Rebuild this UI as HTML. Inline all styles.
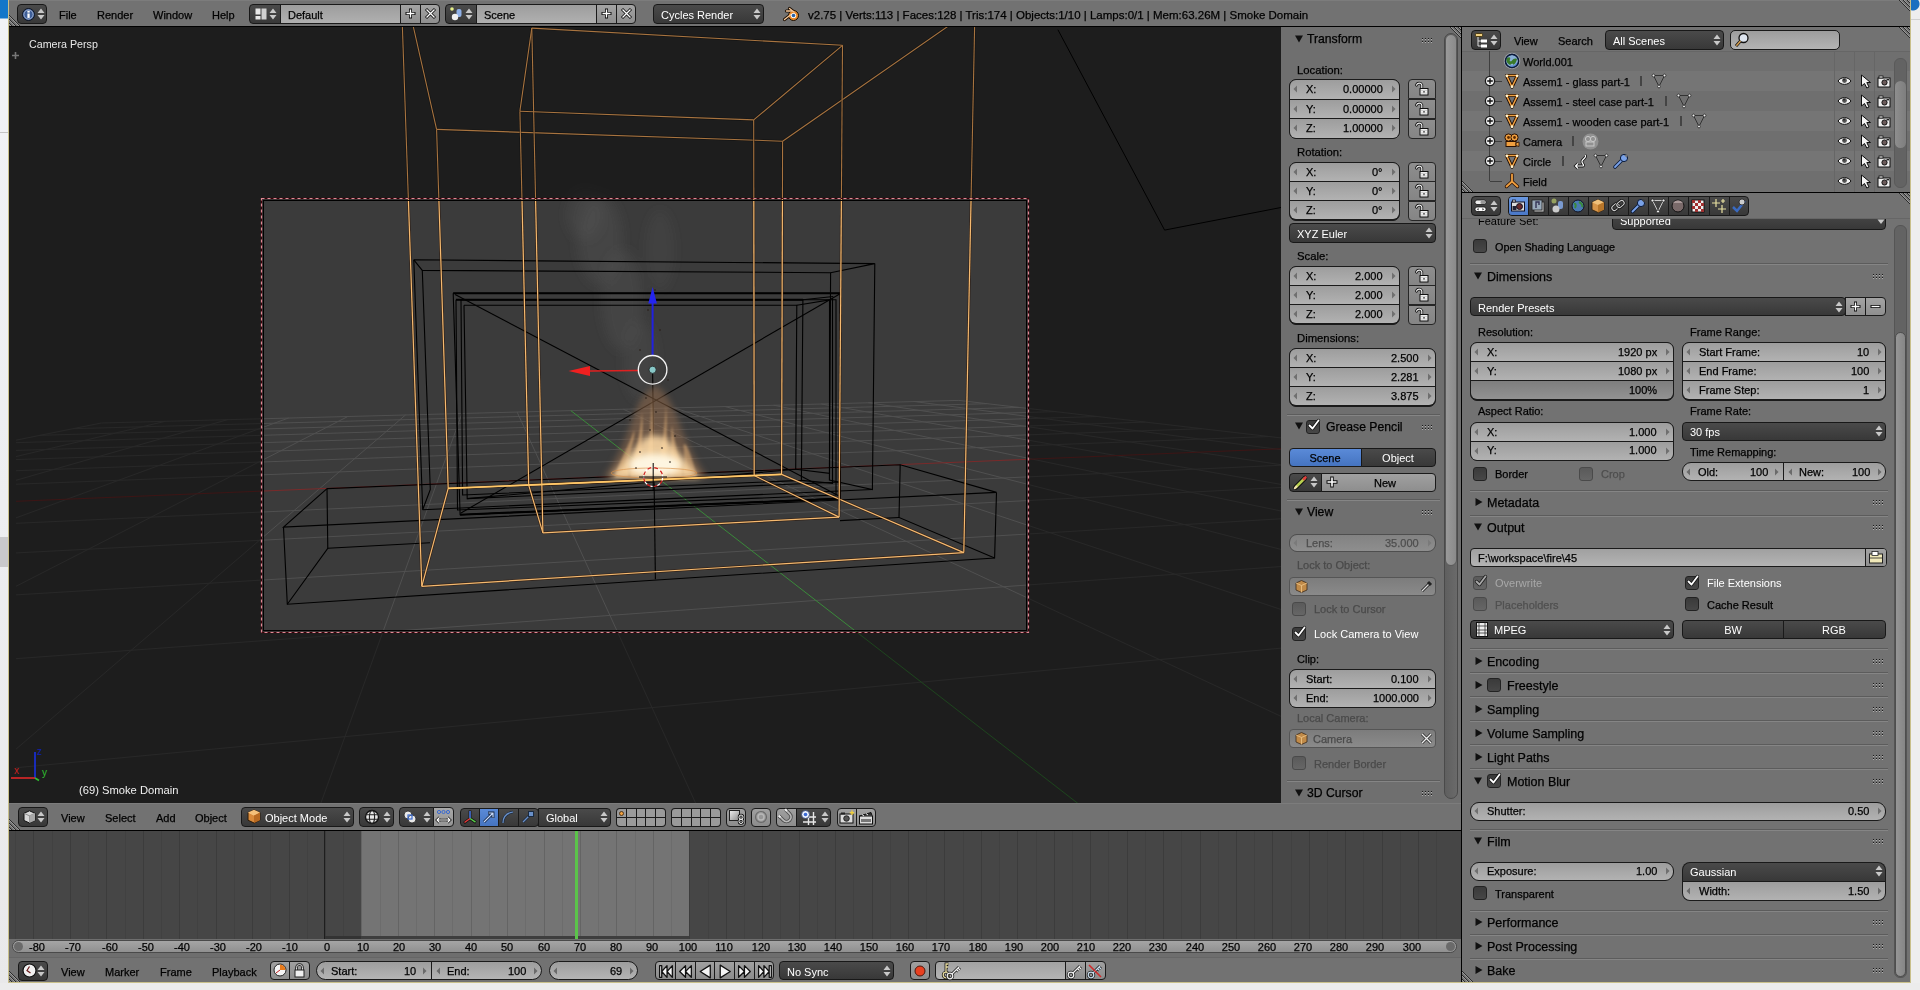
<!DOCTYPE html>
<html><head><meta charset="utf-8"><style>
*{box-sizing:border-box;margin:0;padding:0}
html,body{width:1920px;height:990px;overflow:hidden;background:#ececec;font-family:"Liberation Sans",sans-serif;font-size:11px;color:#000}
.a{position:absolute}
svg.a{overflow:visible}
.t{position:absolute;white-space:nowrap;line-height:1;will-change:transform}
.num{background:linear-gradient(#9d9d9d,#b0b0b0);border:1px solid #1a1a1a}
.drk{background:linear-gradient(#4a4a4a,#383838);border:1px solid #181818}
.tool{background:linear-gradient(#a0a0a0,#8c8c8c);border:1px solid #1a1a1a}
.chk{background:linear-gradient(#3c3c3c,#4a4a4a);border:1px solid #232323;border-radius:3px}
</style></head><body>
<div class="a " style="left:0px;top:0px;width:9px;height:990px;background:linear-gradient(#1377c9 0,#1377c9 18px,#f1f3f6 19px,#e9e9ea 990px)"></div>
<div class="a " style="left:1911px;top:0px;width:9px;height:990px;background:#eeeeee"></div>
<div class="a " style="left:0px;top:132px;width:8px;height:1px;background:#c4c4c4"></div>
<div class="a " style="left:0px;top:537px;width:8px;height:30px;background:#c9c9cb"></div>
<div class="a " style="left:1911px;top:19px;width:9px;height:1px;background:#d0d0d0"></div>
<div class="a" style="left:1911px;top:0;width:9px;height:12px;background:radial-gradient(circle at 2px 4px,#1a6fc0 0,#1a6fc0 6px,transparent 7px)"></div>
<div class="a " style="left:0px;top:983px;width:1920px;height:7px;background:#ececec"></div>
<div class="a " style="left:8px;top:0px;width:1px;height:983px;background:#c9c08a"></div>
<div class="a " style="left:1910px;top:0px;width:1px;height:983px;background:#c9c08a"></div>
<div class="a " style="left:8px;top:982px;width:1903px;height:1px;background:#c9c08a"></div>
<div class="a " style="left:9px;top:0px;width:1901px;height:982px;background:#000"></div>
<div class="a " style="left:9px;top:0px;width:1901px;height:26px;background:#727272;border-top:1px solid #7c7c7c"></div>
<svg class="a" style="left:9px;top:14px;" width="12" height="12" viewBox="0 0 12 12"><path d="M0 1L11 12M0 5L7 12M0 9L3 12" stroke="#2a2a2a" stroke-width="1"/><path d="M0 2L10 12M0 6L6 12M0 10L2 12" stroke="#9a9a9a" stroke-width="1"/></svg>
<div class="a drk" style="left:17px;top:4px;width:30px;height:20px;border-radius:4px"></div>
<svg class="a" style="left:22px;top:8px;" width="13" height="13" viewBox="0 0 13 13"><circle cx="6.5" cy="6.5" r="6" fill="#3d5e99" stroke="#0d1320" stroke-width="1"/><circle cx="6.5" cy="6.5" r="4.6" fill="none" stroke="#b7c4dc" stroke-width="0.8"/><rect x="5.4" y="5.5" width="2.3" height="4.4" fill="#fff"/><rect x="5.4" y="2.8" width="2.3" height="1.8" fill="#fff"/></svg>
<svg class="a" style="left:37px;top:8px;" width="8" height="12" viewBox="0 0 8 12"><path d="M4 0.5L7.5 5H0.5Z M4 11.5L7.5 7H0.5Z" fill="#c8c8c8"/></svg>
<div class="t " style="left:59px;top:9.75px;font-size:11px;color:#000;-webkit-text-stroke:0.25px currentColor;">File</div>
<div class="t " style="left:97px;top:9.75px;font-size:11px;color:#000;-webkit-text-stroke:0.25px currentColor;">Render</div>
<div class="t " style="left:153px;top:9.75px;font-size:11px;color:#000;-webkit-text-stroke:0.25px currentColor;">Window</div>
<div class="t " style="left:212px;top:9.75px;font-size:11px;color:#000;-webkit-text-stroke:0.25px currentColor;">Help</div>
<div class="a drk" style="left:249px;top:4px;width:32px;height:20px;border-radius:4px 0 0 4px"></div>
<svg class="a" style="left:255px;top:8px;" width="12" height="12" viewBox="0 0 12 12"><rect x="0.5" y="0.5" width="5" height="6" fill="#e8e8e8"/><rect x="0.5" y="8" width="5" height="3.5" fill="#e8e8e8"/><rect x="6.5" y="0.5" width="5" height="11" fill="#d0d0d0"/></svg>
<svg class="a" style="left:269px;top:8px;" width="8" height="12" viewBox="0 0 8 12"><path d="M4 0.5L7.5 5H0.5Z M4 11.5L7.5 7H0.5Z" fill="#c8c8c8"/></svg>
<div class="a num" style="left:280px;top:4px;width:121px;height:20px;border-radius:0"></div>
<div class="t " style="left:288px;top:9.75px;font-size:11px;color:#000;-webkit-text-stroke:0.25px currentColor;">Default</div>
<div class="a num" style="left:400px;top:4px;width:21px;height:20px;background:linear-gradient(#a3a3a3,#8f8f8f)"></div>
<div class="a num" style="left:420px;top:4px;width:20px;height:20px;border-radius:0 4px 4px 0;background:linear-gradient(#a3a3a3,#8f8f8f)"></div>
<svg class="a" style="left:405px;top:8px;" width="11" height="11" viewBox="0 0 11 11"><path d="M5.5 0.5V10.5M0.5 5.5H10.5" stroke="#111" stroke-width="3"/><path d="M5.5 1.5V9.5M1.5 5.5H9.5" stroke="#fff" stroke-width="1.3"/></svg>
<svg class="a" style="left:425px;top:8px;" width="11" height="11" viewBox="0 0 11 11"><path d="M1 1L10 10M10 1L1 10" stroke="#111" stroke-width="3"/><path d="M1.5 1.5L9.5 9.5M9.5 1.5L1.5 9.5" stroke="#fff" stroke-width="1.3"/></svg>
<div class="a drk" style="left:445px;top:4px;width:32px;height:20px;border-radius:4px 0 0 4px"></div>
<svg class="a" style="left:450px;top:7px;" width="14" height="14" viewBox="0 0 14 14"><circle cx="2" cy="2" r="1.8" fill="#e6f08a"/><rect x="6.5" y="2" width="5" height="8" rx="2" fill="#8fb0e6"/><circle cx="5" cy="10" r="3.2" fill="#f0f0f0"/></svg>
<svg class="a" style="left:465px;top:8px;" width="8" height="12" viewBox="0 0 8 12"><path d="M4 0.5L7.5 5H0.5Z M4 11.5L7.5 7H0.5Z" fill="#c8c8c8"/></svg>
<div class="a num" style="left:476px;top:4px;width:121px;height:20px;border-radius:0"></div>
<div class="t " style="left:484px;top:9.75px;font-size:11px;color:#000;-webkit-text-stroke:0.25px currentColor;">Scene</div>
<div class="a num" style="left:596px;top:4px;width:21px;height:20px;background:linear-gradient(#a3a3a3,#8f8f8f)"></div>
<div class="a num" style="left:616px;top:4px;width:20px;height:20px;border-radius:0 4px 4px 0;background:linear-gradient(#a3a3a3,#8f8f8f)"></div>
<svg class="a" style="left:601px;top:8px;" width="11" height="11" viewBox="0 0 11 11"><path d="M5.5 0.5V10.5M0.5 5.5H10.5" stroke="#111" stroke-width="3"/><path d="M5.5 1.5V9.5M1.5 5.5H9.5" stroke="#fff" stroke-width="1.3"/></svg>
<svg class="a" style="left:621px;top:8px;" width="11" height="11" viewBox="0 0 11 11"><path d="M1 1L10 10M10 1L1 10" stroke="#111" stroke-width="3"/><path d="M1.5 1.5L9.5 9.5M9.5 1.5L1.5 9.5" stroke="#fff" stroke-width="1.3"/></svg>
<div class="a drk" style="left:653px;top:4px;width:111px;height:20px;border-radius:4px"></div>
<div class="t " style="left:661px;top:9.75px;font-size:11px;color:#fff;">Cycles Render</div>
<svg class="a" style="left:753px;top:8px;" width="8" height="12" viewBox="0 0 8 12"><path d="M4 0.5L7.5 5H0.5Z M4 11.5L7.5 7H0.5Z" fill="#c8c8c8"/></svg>
<svg class="a" style="left:783px;top:7px;" width="18" height="15" viewBox="0 0 18 15"><path d="M1.5 12.5L8 7.5M3.5 4L9 4M6.5 1.5L11 5" stroke="#1a0d00" stroke-width="3.2" stroke-linecap="round"/><circle cx="10.5" cy="8.5" r="5" fill="#e88a2c" stroke="#1a0d00" stroke-width="1"/><path d="M1.5 12.5L8 7.5M3.5 4L9 4M6.5 1.5L11 5" stroke="#f6c89a" stroke-width="1.4" stroke-linecap="round"/><circle cx="10.5" cy="8.5" r="2.6" fill="#fff"/><circle cx="10.5" cy="8.5" r="1.8" fill="#2a62a6"/></svg>
<div class="t " style="left:808px;top:9.50px;font-size:11.5px;color:#000;-webkit-text-stroke:0.25px currentColor;">v2.75 | Verts:113 | Faces:128 | Tris:174 | Objects:1/10 | Lamps:0/1 | Mem:63.26M | Smoke Domain</div>
<svg class="a" style="left:1898px;top:0px;" width="12" height="12" viewBox="0 0 12 12"><path d="M1 0L12 11M5 0L12 7M9 0L12 3" stroke="#2a2a2a" stroke-width="1"/><path d="M2 0L12 10M6 0L12 6M10 0L12 2" stroke="#9a9a9a" stroke-width="1"/></svg>
<svg class="a" style="left:9px;top:27px;overflow:hidden" width="1272" height="776" viewBox="0 0 1272 776"><rect x="0" y="0" width="1272" height="776" fill="#3b3b3b"/><defs><clipPath id="gclip"><rect x="7" y="0" width="1272" height="776"/></clipPath></defs><g clip-path="url(#gclip)"><path d="M20833.3 20974.9 L5519.2 905.3" fill="none" stroke="#505050" stroke-width="1" /><path d="M-109634.0 22483.7 L92.3 396.0" fill="none" stroke="#505050" stroke-width="1" /><path d="M-68353.4 22006.3 L3619.1 684.1" fill="none" stroke="#505050" stroke-width="1" /><path d="M-92548.6 22286.1 L156.3 394.3" fill="none" stroke="#505050" stroke-width="1" /><path d="M-9080.1 2242.4 L2759.2 584.0" fill="none" stroke="#505050" stroke-width="1" /><path d="M-75463.2 22088.5 L218.7 392.6" fill="none" stroke="#505050" stroke-width="1" /><path d="M-3062.1 1030.9 L2268.9 526.9" fill="none" stroke="#505050" stroke-width="1" /><path d="M-58377.8 21890.9 L279.5 391.0" fill="none" stroke="#505050" stroke-width="1" /><path d="M-1694.4 755.6 L1952.1 490.0" fill="none" stroke="#505050" stroke-width="1" /><path d="M-41292.5 21693.4 L338.8 389.5" fill="none" stroke="#505050" stroke-width="1" /><path d="M-1089.1 633.8 L1730.5 464.2" fill="none" stroke="#505050" stroke-width="1" /><path d="M-24207.1 21495.8 L396.6 387.9" fill="none" stroke="#505050" stroke-width="1" /><path d="M-747.6 565.0 L1566.8 445.2" fill="none" stroke="#505050" stroke-width="1" /><path d="M-7121.7 21298.2 L453.0 386.5" fill="none" stroke="#505050" stroke-width="1" /><path d="M-528.3 520.9 L1440.9 430.5" fill="none" stroke="#505050" stroke-width="1" /><path d="M9963.6 21100.6 L508.1 385.0" fill="none" stroke="#505050" stroke-width="1" /><path d="M-263.2 467.5 L1260.1 409.5" fill="none" stroke="#505050" stroke-width="1" /><path d="M7614.5 3651.2 L614.3 382.2" fill="none" stroke="#505050" stroke-width="1" /><path d="M-176.9 450.2 L1193.0 401.7" fill="none" stroke="#505050" stroke-width="1" /><path d="M6632.4 2364.1 L665.6 380.9" fill="none" stroke="#505050" stroke-width="1" /><path d="M-108.6 436.4 L1136.4 395.1" fill="none" stroke="#505050" stroke-width="1" /><path d="M6191.3 1786.1 L715.7 379.5" fill="none" stroke="#505050" stroke-width="1" /><path d="M-53.3 425.3 L1088.2 389.5" fill="none" stroke="#505050" stroke-width="1" /><path d="M5940.8 1457.7 L764.7 378.2" fill="none" stroke="#505050" stroke-width="1" /><path d="M-7.4 416.1 L1046.5 384.6" fill="none" stroke="#505050" stroke-width="1" /><path d="M5779.3 1246.0 L812.5 377.0" fill="none" stroke="#505050" stroke-width="1" /><path d="M31.1 408.3 L1010.2 380.4" fill="none" stroke="#505050" stroke-width="1" /><path d="M5666.4 1098.2 L859.3 375.7" fill="none" stroke="#505050" stroke-width="1" /><path d="M64.0 401.7 L978.2 376.7" fill="none" stroke="#505050" stroke-width="1" /><path d="M5583.2 989.1 L905.1 374.5" fill="none" stroke="#505050" stroke-width="1" /><path d="M92.3 396.0 L949.9 373.4" fill="none" stroke="#505050" stroke-width="1" /><path d="M5519.2 905.3 L949.9 373.4" fill="none" stroke="#505050" stroke-width="1" /><path d="M-375.6 490.2 L1341.1 418.9" fill="none" stroke="#7a2a2a" stroke-width="1" /><path d="M11712.9 9022.2 L561.8 383.6" fill="none" stroke="#3a8a3a" stroke-width="1" /></g><defs><filter id="blur6" x="-50%" y="-50%" width="200%" height="200%"><feGaussianBlur stdDeviation="6"/></filter><filter id="blur3" x="-50%" y="-50%" width="200%" height="200%"><feGaussianBlur stdDeviation="3"/></filter><filter id="blur1" x="-50%" y="-50%" width="200%" height="200%"><feGaussianBlur stdDeviation="1.2"/></filter><radialGradient id="fireg" cx="0.5" cy="0.8" r="0.6"><stop offset="0" stop-color="#fffbe8"/><stop offset="0.35" stop-color="#ffe8b0"/><stop offset="0.7" stop-color="#d89a58" stop-opacity="0.8"/><stop offset="1" stop-color="#8a5a30" stop-opacity="0"/></radialGradient></defs><g transform="translate(-9 -27)" filter="url(#blur6)"><ellipse cx="600" cy="240" rx="22" ry="45" fill="#5a5a5a" opacity="0.3"/><ellipse cx="622" cy="300" rx="20" ry="50" fill="#5a5a5a" opacity="0.32"/><ellipse cx="640" cy="360" rx="16" ry="40" fill="#5a5a5a" opacity="0.28"/><ellipse cx="585" cy="215" rx="18" ry="25" fill="#5a5a5a" opacity="0.25"/><ellipse cx="660" cy="250" rx="14" ry="40" fill="#5a5a5a" opacity="0.18"/></g><path d="M318.0 461.6 L891.2 437.7 L987.5 465.4 L274.5 500.1 L318.0 461.6" fill="none" stroke="#000" stroke-width="1.1" /><path d="M274.5 500.1 L278.3 577.2 L985.6 531.0 L987.5 465.4" fill="none" stroke="#000" stroke-width="1.1" /><path d="M318.0 461.6 L318.8 521.3 L278.3 577.2" fill="none" stroke="#000" stroke-width="1.1" /><path d="M318.8 521.3 L421.0 515.8" fill="none" stroke="#000" stroke-width="1.1" /><path d="M891.2 437.7 L890.0 490.5 L985.6 531.0" fill="none" stroke="#000" stroke-width="1.1" /><path d="M890.0 490.5 L831.0 493.6" fill="none" stroke="#000" stroke-width="1.1" /><path d="M404.8 232.8 L865.8 236.6 L821.6 245.7 L413.3 243.4 L404.8 232.8" fill="none" stroke="#000" stroke-width="1.1" /><path d="M404.8 232.8 L413.7 482.7 L421.3 462.5 L413.3 243.4" fill="none" stroke="#000" stroke-width="1.1" /><path d="M865.8 236.6 L863.4 462.5 L820.4 453.0 L821.6 245.7" fill="none" stroke="#000" stroke-width="1.1" /><path d="M413.7 482.7 L863.4 462.5" fill="none" stroke="#000" stroke-width="1.1" /><path d="M444.2 266.2 L831.0 266.2 L831.4 471.6 L451.1 487.7 L444.2 266.2" fill="none" stroke="#000" stroke-width="1.1" /><path d="M447.0 272.7 L827.0 272.7 L827.0 468.0 L448.5 483.0 L447.0 272.7" fill="none" stroke="#000" stroke-width="1.1" /><path d="M452.0 272.7 L793.9 272.7 L792.4 453.4 L453.6 468.0 L452.0 272.7" fill="none" stroke="#000" stroke-width="1.1" /><path d="M455.0 278.3 L787.8 278.3 L786.7 442.3 L458.2 471.6 L455.0 278.3" fill="none" stroke="#000" stroke-width="1.1" /><path d="M793.9 272.7 L824.2 269.5" fill="none" stroke="#000" stroke-width="1.1" /><path d="M787.8 278.3 L820.5 273.0 L820.5 446.3 L786.7 442.3" fill="none" stroke="#000" stroke-width="1.1" /><path d="M792.4 453.4 L823.5 456.4 L823.5 271.0" fill="none" stroke="#000" stroke-width="1.1" /><path d="M451.1 487.7 L831.4 471.6" fill="none" stroke="#000" stroke-width="1.1" /><path d="M458.2 471.6 L831.4 455.0" fill="none" stroke="#000" stroke-width="1.1" /><path d="M446.1 267.6 L831.0 469.5" fill="none" stroke="#000" stroke-width="1.1" /><path d="M830.7 267.0 L451.6 486.2" fill="none" stroke="#000" stroke-width="1.1" /><path d="M643.6 343.0 L646.4 552.2" fill="none" stroke="#000" stroke-width="1.1" /><path d="M444.2 266.2 L831.0 266.2" fill="none" stroke="#000" stroke-width="2" /><path d="M447.0 272.7 L793.9 272.7" fill="none" stroke="#000" stroke-width="2" /><path d="M451.1 487.7 L831.4 471.6" fill="none" stroke="#000" stroke-width="2" /><path d="M1048.9 2.7 L1155.6 203.1 L1272.5 180.4" fill="none" stroke="#000" stroke-width="1" /><g transform="translate(-9 -27)"><path d="M603 478 C615 462 626 440 634 415 C640 398 648 388 656 386 C664 390 672 402 678 420 C686 442 696 462 708 478 Z" fill="#9a7050" opacity="0.5" filter="url(#blur3)"/><path d="M615 477 C618.5 462 632 440 634 430 C636 440 625.5 462 629 477 Z" fill="#e6b47a" opacity="0.55" filter="url(#blur1)"/><path d="M630 477 C633.0 462 640 440 642 412 C644 440 639.0 462 642 477 Z" fill="#e6b47a" opacity="0.6" filter="url(#blur1)"/><path d="M644 477 C647.0 462 650 440 652 398 C654 440 653.0 462 656 477 Z" fill="#e6b47a" opacity="0.5" filter="url(#blur1)"/><path d="M656 477 C659.0 462 664 440 666 405 C668 440 665.0 462 668 477 Z" fill="#e6b47a" opacity="0.55" filter="url(#blur1)"/><path d="M669 477 C672.5 462 670 440 672 425 C674 440 679.5 462 683 477 Z" fill="#e6b47a" opacity="0.55" filter="url(#blur1)"/><path d="M683 477 C686.5 462 682 440 684 445 C686 440 693.5 462 697 477 Z" fill="#e6b47a" opacity="0.5" filter="url(#blur1)"/><path d="M610 478 C620 466 632 452 642 440 C648 434 662 434 668 440 C678 452 690 466 700 478 Z" fill="#ffdca8" opacity="0.85" filter="url(#blur3)"/><ellipse cx="655" cy="465" rx="26" ry="11" fill="#fff8e4" opacity="0.95" filter="url(#blur3)"/><ellipse cx="654" cy="473" rx="43" ry="5" fill="none" stroke="#d89048" stroke-width="0.9" opacity="0.7"/><circle cx="640" cy="452" r="0.9" fill="#2a2018" opacity="0.7"/><circle cx="662" cy="448" r="0.9" fill="#2a2018" opacity="0.7"/><circle cx="650" cy="430" r="0.9" fill="#2a2018" opacity="0.7"/><circle cx="670" cy="462" r="0.9" fill="#2a2018" opacity="0.7"/><circle cx="636" cy="468" r="0.9" fill="#2a2018" opacity="0.7"/><circle cx="656" cy="412" r="0.9" fill="#2a2018" opacity="0.7"/><circle cx="646" cy="398" r="0.9" fill="#2a2018" opacity="0.7"/><circle cx="668" cy="380" r="0.9" fill="#2a2018" opacity="0.7"/><circle cx="640" cy="350" r="0.9" fill="#2a2018" opacity="0.7"/><circle cx="660" cy="330" r="0.9" fill="#2a2018" opacity="0.7"/><circle cx="648" cy="310" r="0.9" fill="#2a2018" opacity="0.7"/><circle cx="655" cy="290" r="0.9" fill="#2a2018" opacity="0.7"/><circle cx="630" cy="420" r="0.9" fill="#2a2018" opacity="0.7"/><circle cx="675" cy="436" r="0.9" fill="#2a2018" opacity="0.7"/></g><path d="M0 0H1272V776H0Z M252 171V605H1020V171Z" fill="#000" fill-opacity="0.5" fill-rule="evenodd"/><defs><clipPath id="cin"><rect x="252" y="171" width="768" height="434"/></clipPath><clipPath id="cout"><path d="M0 0H1272V776H0Z M252 171V605H1020V171Z" clip-rule="evenodd"/></clipPath></defs><g clip-path="url(#cout)"><path d="M427.6 102.4 L773.6 114.2" fill="none" stroke="#000" stroke-width="2.5" stroke-opacity="0.35"/><path d="M427.6 102.4 L439.2 461.4" fill="none" stroke="#000" stroke-width="2.5" stroke-opacity="0.35"/><path d="M773.6 114.2 L772.6 447.4" fill="none" stroke="#000" stroke-width="2.5" stroke-opacity="0.35"/><path d="M439.2 461.4 L772.6 447.4" fill="none" stroke="#000" stroke-width="2.5" stroke-opacity="0.35"/><path d="M391.4 -57.3 L966.0 -19.5" fill="none" stroke="#000" stroke-width="2.5" stroke-opacity="0.35"/><path d="M391.4 -57.3 L412.8 559.3" fill="none" stroke="#000" stroke-width="2.5" stroke-opacity="0.35"/><path d="M966.0 -19.5 L954.8 525.6" fill="none" stroke="#000" stroke-width="2.5" stroke-opacity="0.35"/><path d="M412.8 559.3 L954.8 525.6" fill="none" stroke="#000" stroke-width="2.5" stroke-opacity="0.35"/><path d="M427.6 102.4 L391.4 -57.3" fill="none" stroke="#000" stroke-width="2.5" stroke-opacity="0.35"/><path d="M773.6 114.2 L966.0 -19.5" fill="none" stroke="#000" stroke-width="2.5" stroke-opacity="0.35"/><path d="M439.2 461.4 L412.8 559.3" fill="none" stroke="#000" stroke-width="2.5" stroke-opacity="0.35"/><path d="M772.6 447.4 L954.8 525.6" fill="none" stroke="#000" stroke-width="2.5" stroke-opacity="0.35"/><path d="M427.6 102.4 L773.6 114.2" fill="none" stroke="#a87440" stroke-width="1.1" /><path d="M427.6 102.4 L439.2 461.4" fill="none" stroke="#a87440" stroke-width="1.1" /><path d="M773.6 114.2 L772.6 447.4" fill="none" stroke="#a87440" stroke-width="1.1" /><path d="M439.2 461.4 L772.6 447.4" fill="none" stroke="#a87440" stroke-width="1.1" /><path d="M391.4 -57.3 L966.0 -19.5" fill="none" stroke="#a87440" stroke-width="1.1" /><path d="M391.4 -57.3 L412.8 559.3" fill="none" stroke="#a87440" stroke-width="1.1" /><path d="M966.0 -19.5 L954.8 525.6" fill="none" stroke="#a87440" stroke-width="1.1" /><path d="M412.8 559.3 L954.8 525.6" fill="none" stroke="#a87440" stroke-width="1.1" /><path d="M427.6 102.4 L391.4 -57.3" fill="none" stroke="#a87440" stroke-width="1.1" /><path d="M773.6 114.2 L966.0 -19.5" fill="none" stroke="#a87440" stroke-width="1.1" /><path d="M439.2 461.4 L412.8 559.3" fill="none" stroke="#a87440" stroke-width="1.1" /><path d="M772.6 447.4 L954.8 525.6" fill="none" stroke="#a87440" stroke-width="1.1" /><path d="M510.9 84.2 L744.7 92.9" fill="none" stroke="#000" stroke-width="2.5" stroke-opacity="0.35"/><path d="M510.9 84.2 L519.7 458.1" fill="none" stroke="#000" stroke-width="2.5" stroke-opacity="0.35"/><path d="M744.7 92.9 L745.2 448.5" fill="none" stroke="#000" stroke-width="2.5" stroke-opacity="0.35"/><path d="M519.7 458.1 L745.2 448.5" fill="none" stroke="#000" stroke-width="2.5" stroke-opacity="0.35"/><path d="M522.8 1.1 L833.5 18.3" fill="none" stroke="#000" stroke-width="2.5" stroke-opacity="0.35"/><path d="M522.8 1.1 L533.9 505.8" fill="none" stroke="#000" stroke-width="2.5" stroke-opacity="0.35"/><path d="M833.5 18.3 L830.1 490.1" fill="none" stroke="#000" stroke-width="2.5" stroke-opacity="0.35"/><path d="M533.9 505.8 L830.1 490.1" fill="none" stroke="#000" stroke-width="2.5" stroke-opacity="0.35"/><path d="M510.9 84.2 L522.8 1.1" fill="none" stroke="#000" stroke-width="2.5" stroke-opacity="0.35"/><path d="M744.7 92.9 L833.5 18.3" fill="none" stroke="#000" stroke-width="2.5" stroke-opacity="0.35"/><path d="M519.7 458.1 L533.9 505.8" fill="none" stroke="#000" stroke-width="2.5" stroke-opacity="0.35"/><path d="M745.2 448.5 L830.1 490.1" fill="none" stroke="#000" stroke-width="2.5" stroke-opacity="0.35"/><path d="M510.9 84.2 L744.7 92.9" fill="none" stroke="#a87440" stroke-width="1.1" /><path d="M510.9 84.2 L519.7 458.1" fill="none" stroke="#a87440" stroke-width="1.1" /><path d="M744.7 92.9 L745.2 448.5" fill="none" stroke="#a87440" stroke-width="1.1" /><path d="M519.7 458.1 L745.2 448.5" fill="none" stroke="#a87440" stroke-width="1.1" /><path d="M522.8 1.1 L833.5 18.3" fill="none" stroke="#a87440" stroke-width="1.1" /><path d="M522.8 1.1 L533.9 505.8" fill="none" stroke="#a87440" stroke-width="1.1" /><path d="M833.5 18.3 L830.1 490.1" fill="none" stroke="#a87440" stroke-width="1.1" /><path d="M533.9 505.8 L830.1 490.1" fill="none" stroke="#a87440" stroke-width="1.1" /><path d="M510.9 84.2 L522.8 1.1" fill="none" stroke="#a87440" stroke-width="1.1" /><path d="M744.7 92.9 L833.5 18.3" fill="none" stroke="#a87440" stroke-width="1.1" /><path d="M519.7 458.1 L533.9 505.8" fill="none" stroke="#a87440" stroke-width="1.1" /><path d="M745.2 448.5 L830.1 490.1" fill="none" stroke="#a87440" stroke-width="1.1" /></g><g clip-path="url(#cin)"><path d="M427.6 102.4 L773.6 114.2" fill="none" stroke="#2a1000" stroke-width="2.5999999999999996" stroke-opacity="0.6"/><path d="M427.6 102.4 L439.2 461.4" fill="none" stroke="#2a1000" stroke-width="2.5999999999999996" stroke-opacity="0.6"/><path d="M773.6 114.2 L772.6 447.4" fill="none" stroke="#2a1000" stroke-width="2.5999999999999996" stroke-opacity="0.6"/><path d="M439.2 461.4 L772.6 447.4" fill="none" stroke="#2a1000" stroke-width="2.5999999999999996" stroke-opacity="0.6"/><path d="M391.4 -57.3 L966.0 -19.5" fill="none" stroke="#2a1000" stroke-width="2.5999999999999996" stroke-opacity="0.6"/><path d="M391.4 -57.3 L412.8 559.3" fill="none" stroke="#2a1000" stroke-width="2.5999999999999996" stroke-opacity="0.6"/><path d="M966.0 -19.5 L954.8 525.6" fill="none" stroke="#2a1000" stroke-width="2.5999999999999996" stroke-opacity="0.6"/><path d="M412.8 559.3 L954.8 525.6" fill="none" stroke="#2a1000" stroke-width="2.5999999999999996" stroke-opacity="0.6"/><path d="M427.6 102.4 L391.4 -57.3" fill="none" stroke="#2a1000" stroke-width="2.5999999999999996" stroke-opacity="0.6"/><path d="M773.6 114.2 L966.0 -19.5" fill="none" stroke="#2a1000" stroke-width="2.5999999999999996" stroke-opacity="0.6"/><path d="M439.2 461.4 L412.8 559.3" fill="none" stroke="#2a1000" stroke-width="2.5999999999999996" stroke-opacity="0.6"/><path d="M772.6 447.4 L954.8 525.6" fill="none" stroke="#2a1000" stroke-width="2.5999999999999996" stroke-opacity="0.6"/><path d="M427.6 102.4 L773.6 114.2" fill="none" stroke="#f6ba70" stroke-width="1.2" /><path d="M427.6 102.4 L439.2 461.4" fill="none" stroke="#f6ba70" stroke-width="1.2" /><path d="M773.6 114.2 L772.6 447.4" fill="none" stroke="#f6ba70" stroke-width="1.2" /><path d="M439.2 461.4 L772.6 447.4" fill="none" stroke="#f6ba70" stroke-width="1.2" /><path d="M391.4 -57.3 L966.0 -19.5" fill="none" stroke="#f6ba70" stroke-width="1.2" /><path d="M391.4 -57.3 L412.8 559.3" fill="none" stroke="#f6ba70" stroke-width="1.2" /><path d="M966.0 -19.5 L954.8 525.6" fill="none" stroke="#f6ba70" stroke-width="1.2" /><path d="M412.8 559.3 L954.8 525.6" fill="none" stroke="#f6ba70" stroke-width="1.2" /><path d="M427.6 102.4 L391.4 -57.3" fill="none" stroke="#f6ba70" stroke-width="1.2" /><path d="M773.6 114.2 L966.0 -19.5" fill="none" stroke="#f6ba70" stroke-width="1.2" /><path d="M439.2 461.4 L412.8 559.3" fill="none" stroke="#f6ba70" stroke-width="1.2" /><path d="M772.6 447.4 L954.8 525.6" fill="none" stroke="#f6ba70" stroke-width="1.2" /><path d="M510.9 84.2 L744.7 92.9" fill="none" stroke="#2a1000" stroke-width="2.5999999999999996" stroke-opacity="0.6"/><path d="M510.9 84.2 L519.7 458.1" fill="none" stroke="#2a1000" stroke-width="2.5999999999999996" stroke-opacity="0.6"/><path d="M744.7 92.9 L745.2 448.5" fill="none" stroke="#2a1000" stroke-width="2.5999999999999996" stroke-opacity="0.6"/><path d="M519.7 458.1 L745.2 448.5" fill="none" stroke="#2a1000" stroke-width="2.5999999999999996" stroke-opacity="0.6"/><path d="M522.8 1.1 L833.5 18.3" fill="none" stroke="#2a1000" stroke-width="2.5999999999999996" stroke-opacity="0.6"/><path d="M522.8 1.1 L533.9 505.8" fill="none" stroke="#2a1000" stroke-width="2.5999999999999996" stroke-opacity="0.6"/><path d="M833.5 18.3 L830.1 490.1" fill="none" stroke="#2a1000" stroke-width="2.5999999999999996" stroke-opacity="0.6"/><path d="M533.9 505.8 L830.1 490.1" fill="none" stroke="#2a1000" stroke-width="2.5999999999999996" stroke-opacity="0.6"/><path d="M510.9 84.2 L522.8 1.1" fill="none" stroke="#2a1000" stroke-width="2.5999999999999996" stroke-opacity="0.6"/><path d="M744.7 92.9 L833.5 18.3" fill="none" stroke="#2a1000" stroke-width="2.5999999999999996" stroke-opacity="0.6"/><path d="M519.7 458.1 L533.9 505.8" fill="none" stroke="#2a1000" stroke-width="2.5999999999999996" stroke-opacity="0.6"/><path d="M745.2 448.5 L830.1 490.1" fill="none" stroke="#2a1000" stroke-width="2.5999999999999996" stroke-opacity="0.6"/><path d="M510.9 84.2 L744.7 92.9" fill="none" stroke="#f6ba70" stroke-width="1.2" /><path d="M510.9 84.2 L519.7 458.1" fill="none" stroke="#f6ba70" stroke-width="1.2" /><path d="M744.7 92.9 L745.2 448.5" fill="none" stroke="#f6ba70" stroke-width="1.2" /><path d="M519.7 458.1 L745.2 448.5" fill="none" stroke="#f6ba70" stroke-width="1.2" /><path d="M522.8 1.1 L833.5 18.3" fill="none" stroke="#f6ba70" stroke-width="1.2" /><path d="M522.8 1.1 L533.9 505.8" fill="none" stroke="#f6ba70" stroke-width="1.2" /><path d="M833.5 18.3 L830.1 490.1" fill="none" stroke="#f6ba70" stroke-width="1.2" /><path d="M533.9 505.8 L830.1 490.1" fill="none" stroke="#f6ba70" stroke-width="1.2" /><path d="M510.9 84.2 L522.8 1.1" fill="none" stroke="#f6ba70" stroke-width="1.2" /><path d="M744.7 92.9 L833.5 18.3" fill="none" stroke="#f6ba70" stroke-width="1.2" /><path d="M519.7 458.1 L533.9 505.8" fill="none" stroke="#f6ba70" stroke-width="1.2" /><path d="M745.2 448.5 L830.1 490.1" fill="none" stroke="#f6ba70" stroke-width="1.2" /><path d="M439.2 461.4 L772.6 447.4" fill="none" stroke="#ffc868" stroke-width="1.6" /></g><rect x="254.5" y="173.5" width="763" height="430" fill="none" stroke="#000" stroke-width="1"/><rect x="252.5" y="171.5" width="767" height="434" fill="none" stroke="#3a0008" stroke-width="1.2"/><rect x="252.5" y="171.5" width="767" height="434" fill="none" stroke="#e08a96" stroke-width="1.2" stroke-dasharray="3 3"/><path d="M643.6 328.0 L643.6 275.0" fill="none" stroke="#2020e0" stroke-width="2" /><path d="M639.3000000000001 276.5L643.6 260L647.9 276.5Z" fill="#2424f0"/><path d="M629.0 343.5 L581.0 344.0" fill="none" stroke="#e02020" stroke-width="1.6" /><path d="M581 339L559.5 344L581 349Z" fill="#f02020"/><circle cx="643.6" cy="342.8" r="14.3" fill="none" stroke="#f4f4f4" stroke-width="1.3"/><circle cx="643.6" cy="342.8" r="3.6" fill="#88c8c8" stroke="#222" stroke-width="0.8"/><circle cx="644.2" cy="450" r="9.5" fill="none" stroke="#fff" stroke-width="1.2" stroke-dasharray="4 3"/><circle cx="644.2" cy="450" r="9.5" fill="none" stroke="#d02020" stroke-width="1.2" stroke-dasharray="4 3" stroke-dashoffset="3.5"/><path d="M644.2 436.0 L644.2 464.0" fill="none" stroke="#000" stroke-width="1" /><path d="M630.0 450.0 L658.0 450.0" fill="none" stroke="#000" stroke-width="1" /></svg>
<div class="t " style="left:29px;top:38.90px;font-size:10.7px;color:#e8e8e8;">Camera Persp</div>
<svg class="a" style="left:11px;top:51px;" width="9" height="9" viewBox="0 0 9 9"><path d="M4.5 1V8M1 4.5H8" stroke="#777" stroke-width="1.6"/></svg>
<div class="t " style="left:79px;top:784.65px;font-size:11.2px;color:#f0f0f0;">(69) Smoke Domain</div>
<svg class="a" style="left:9px;top:745px;" width="50" height="40" viewBox="0 0 50 40"><path d="M26 33V7" stroke="#1830e0" stroke-width="1.6"/><path d="M26 33H2" stroke="#e02828" stroke-width="1.6"/><path d="M26 33L30 35.5" stroke="#30c030" stroke-width="1.6"/><text x="5" y="29" font-size="10" fill="#c82020" font-family="Liberation Sans">x</text><text x="33" y="31" font-size="10" fill="#30c030" font-family="Liberation Sans">y</text><text x="28" y="10" font-size="10" fill="#1020b0" font-family="Liberation Sans">z</text></svg>
<div class="a " style="left:1281px;top:27px;width:180px;height:776px;background:#6f6f6f"></div>
<div class="a " style="left:1461px;top:27px;width:1px;height:776px;background:#000"></div>
<div class="a " style="left:1444px;top:33px;width:14px;height:766px;border-radius:7px;background:linear-gradient(90deg,#5f5f5f,#6a6a6a);border:1px solid #4a4a4a"></div>
<div class="a " style="left:1445px;top:34px;width:12px;height:532px;border-radius:6px;background:linear-gradient(90deg,#9a9a9a,#8a8a8a);border:1px solid #5a5a5a"></div>
<svg class="a" style="left:1449px;top:27px;" width="12" height="12" viewBox="0 0 12 12"><path d="M1 0L12 11M5 0L12 7M9 0L12 3" stroke="#2a2a2a" stroke-width="1"/><path d="M2 0L12 10M6 0L12 6M10 0L12 2" stroke="#9a9a9a" stroke-width="1"/></svg>
<svg class="a" style="left:1294px;top:34px;" width="10" height="10" viewBox="0 0 10 10"><path d="M1 1.5H9L5 8.5Z" fill="#101010"/></svg>
<div class="t " style="left:1307px;top:33.15px;font-size:12.2px;color:#000;-webkit-text-stroke:0.25px currentColor;">Transform</div>
<svg class="a" style="left:1422px;top:38px;" width="12" height="6" viewBox="0 0 12 6"><rect x="0" y="0" width="1" height="1" fill="#1a1a1a"/><rect x="0" y="1" width="1" height="1" fill="#b0b0b0"/><rect x="0" y="3" width="1" height="1" fill="#1a1a1a"/><rect x="0" y="4" width="1" height="1" fill="#b0b0b0"/><rect x="3" y="0" width="1" height="1" fill="#1a1a1a"/><rect x="3" y="1" width="1" height="1" fill="#b0b0b0"/><rect x="3" y="3" width="1" height="1" fill="#1a1a1a"/><rect x="3" y="4" width="1" height="1" fill="#b0b0b0"/><rect x="6" y="0" width="1" height="1" fill="#1a1a1a"/><rect x="6" y="1" width="1" height="1" fill="#b0b0b0"/><rect x="6" y="3" width="1" height="1" fill="#1a1a1a"/><rect x="6" y="4" width="1" height="1" fill="#b0b0b0"/><rect x="9" y="0" width="1" height="1" fill="#1a1a1a"/><rect x="9" y="1" width="1" height="1" fill="#b0b0b0"/><rect x="9" y="3" width="1" height="1" fill="#1a1a1a"/><rect x="9" y="4" width="1" height="1" fill="#b0b0b0"/></svg>
<div class="t " style="left:1297px;top:64.60px;font-size:11.3px;color:#000;-webkit-text-stroke:0.25px currentColor;">Location:</div>
<div class="a " style="left:1289px;top:79px;width:111px;height:59.5px;border-radius:7px;background:#1a1a1a;border:1px solid #1a1a1a"></div>
<div class="a " style="left:1290px;top:80.0px;width:109px;height:18.5px;background:linear-gradient(#9d9d9d,#b2b2b2);border-radius:6px 6px 0px 0px"></div>
<div class="t " style="left:1306px;top:83.75px;font-size:11px;color:#000;-webkit-text-stroke:0.25px currentColor;">X:</div>
<div class="t " style="right:537px;top:83.75px;font-size:11px;color:#000;-webkit-text-stroke:0.25px currentColor;">0.00000</div>
<svg class="a" style="left:1293px;top:85.25px;" width="5" height="8" viewBox="0 0 5 8"><path d="M4 0.5V7.5L0.5 4Z" fill="#6f6f6f"/></svg>
<svg class="a" style="left:1391px;top:85.25px;" width="5" height="8" viewBox="0 0 5 8"><path d="M1 0.5V7.5L4.5 4Z" fill="#6f6f6f"/></svg>
<div class="a " style="left:1290px;top:99.5px;width:109px;height:18.5px;background:linear-gradient(#9d9d9d,#b2b2b2);border-radius:0px 0px 0px 0px"></div>
<div class="t " style="left:1306px;top:103.75px;font-size:11px;color:#000;-webkit-text-stroke:0.25px currentColor;">Y:</div>
<div class="t " style="right:537px;top:103.75px;font-size:11px;color:#000;-webkit-text-stroke:0.25px currentColor;">0.00000</div>
<svg class="a" style="left:1293px;top:104.75px;" width="5" height="8" viewBox="0 0 5 8"><path d="M4 0.5V7.5L0.5 4Z" fill="#6f6f6f"/></svg>
<svg class="a" style="left:1391px;top:104.75px;" width="5" height="8" viewBox="0 0 5 8"><path d="M1 0.5V7.5L4.5 4Z" fill="#6f6f6f"/></svg>
<div class="a " style="left:1290px;top:119.0px;width:109px;height:18.5px;background:linear-gradient(#9d9d9d,#b2b2b2);border-radius:0px 0px 6px 6px"></div>
<div class="t " style="left:1306px;top:122.75px;font-size:11px;color:#000;-webkit-text-stroke:0.25px currentColor;">Z:</div>
<div class="t " style="right:537px;top:122.75px;font-size:11px;color:#000;-webkit-text-stroke:0.25px currentColor;">1.00000</div>
<svg class="a" style="left:1293px;top:124.25px;" width="5" height="8" viewBox="0 0 5 8"><path d="M4 0.5V7.5L0.5 4Z" fill="#6f6f6f"/></svg>
<svg class="a" style="left:1391px;top:124.25px;" width="5" height="8" viewBox="0 0 5 8"><path d="M1 0.5V7.5L4.5 4Z" fill="#6f6f6f"/></svg>
<div class="a " style="left:1408px;top:79.0px;width:28px;height:20px;background:linear-gradient(#8e8e8e,#858585);border:1px solid #262626;border-radius:4px 4px 0 0"></div>
<svg class="a" style="left:1415.0px;top:82.0px;" width="14" height="14" viewBox="0 0 14 14"><path d="M1.5 3.2A2.8 2.8 0 0 1 6.8 3V7" fill="none" stroke="#111" stroke-width="2.8" stroke-linecap="round"/><path d="M1.5 3.2A2.8 2.8 0 0 1 6.8 3V7" fill="none" stroke="#f2f2f2" stroke-width="1.2" stroke-linecap="round"/><rect x="5" y="6.5" width="8" height="6.5" fill="#f0f0f0" stroke="#111" stroke-width="1"/><path d="M6 8.5H12M6 11H12" stroke="#c8c8c8" stroke-width="0.8"/><rect x="8.4" y="9" width="1.2" height="1.6" fill="#222"/></svg>
<div class="a " style="left:1408px;top:98.8px;width:28px;height:20px;background:linear-gradient(#8e8e8e,#858585);border:1px solid #262626;border-radius:0"></div>
<svg class="a" style="left:1415.0px;top:101.8px;" width="14" height="14" viewBox="0 0 14 14"><path d="M1.5 3.2A2.8 2.8 0 0 1 6.8 3V7" fill="none" stroke="#111" stroke-width="2.8" stroke-linecap="round"/><path d="M1.5 3.2A2.8 2.8 0 0 1 6.8 3V7" fill="none" stroke="#f2f2f2" stroke-width="1.2" stroke-linecap="round"/><rect x="5" y="6.5" width="8" height="6.5" fill="#f0f0f0" stroke="#111" stroke-width="1"/><path d="M6 8.5H12M6 11H12" stroke="#c8c8c8" stroke-width="0.8"/><rect x="8.4" y="9" width="1.2" height="1.6" fill="#222"/></svg>
<div class="a " style="left:1408px;top:118.6px;width:28px;height:20px;background:linear-gradient(#8e8e8e,#858585);border:1px solid #262626;border-radius:0 0 4px 4px"></div>
<svg class="a" style="left:1415.0px;top:121.6px;" width="14" height="14" viewBox="0 0 14 14"><path d="M1.5 3.2A2.8 2.8 0 0 1 6.8 3V7" fill="none" stroke="#111" stroke-width="2.8" stroke-linecap="round"/><path d="M1.5 3.2A2.8 2.8 0 0 1 6.8 3V7" fill="none" stroke="#f2f2f2" stroke-width="1.2" stroke-linecap="round"/><rect x="5" y="6.5" width="8" height="6.5" fill="#f0f0f0" stroke="#111" stroke-width="1"/><path d="M6 8.5H12M6 11H12" stroke="#c8c8c8" stroke-width="0.8"/><rect x="8.4" y="9" width="1.2" height="1.6" fill="#222"/></svg>
<div class="t " style="left:1297px;top:146.60px;font-size:11.3px;color:#000;-webkit-text-stroke:0.25px currentColor;">Rotation:</div>
<div class="a " style="left:1289px;top:161.5px;width:111px;height:59px;border-radius:7px;background:#1a1a1a;border:1px solid #1a1a1a"></div>
<div class="a " style="left:1290px;top:162.5px;width:109px;height:18.333333333333332px;background:linear-gradient(#9d9d9d,#b2b2b2);border-radius:6px 6px 0px 0px"></div>
<div class="t " style="left:1306px;top:166.75px;font-size:11px;color:#000;-webkit-text-stroke:0.25px currentColor;">X:</div>
<div class="t " style="right:537px;top:166.75px;font-size:11px;color:#000;-webkit-text-stroke:0.25px currentColor;">0°</div>
<svg class="a" style="left:1293px;top:167.66666666666666px;" width="5" height="8" viewBox="0 0 5 8"><path d="M4 0.5V7.5L0.5 4Z" fill="#6f6f6f"/></svg>
<svg class="a" style="left:1391px;top:167.66666666666666px;" width="5" height="8" viewBox="0 0 5 8"><path d="M1 0.5V7.5L4.5 4Z" fill="#6f6f6f"/></svg>
<div class="a " style="left:1290px;top:181.83333333333334px;width:109px;height:18.333333333333332px;background:linear-gradient(#9d9d9d,#b2b2b2);border-radius:0px 0px 0px 0px"></div>
<div class="t " style="left:1306px;top:185.75px;font-size:11px;color:#000;-webkit-text-stroke:0.25px currentColor;">Y:</div>
<div class="t " style="right:537px;top:185.75px;font-size:11px;color:#000;-webkit-text-stroke:0.25px currentColor;">0°</div>
<svg class="a" style="left:1293px;top:187.0px;" width="5" height="8" viewBox="0 0 5 8"><path d="M4 0.5V7.5L0.5 4Z" fill="#6f6f6f"/></svg>
<svg class="a" style="left:1391px;top:187.0px;" width="5" height="8" viewBox="0 0 5 8"><path d="M1 0.5V7.5L4.5 4Z" fill="#6f6f6f"/></svg>
<div class="a " style="left:1290px;top:201.16666666666666px;width:109px;height:18.333333333333332px;background:linear-gradient(#9d9d9d,#b2b2b2);border-radius:0px 0px 6px 6px"></div>
<div class="t " style="left:1306px;top:204.75px;font-size:11px;color:#000;-webkit-text-stroke:0.25px currentColor;">Z:</div>
<div class="t " style="right:537px;top:204.75px;font-size:11px;color:#000;-webkit-text-stroke:0.25px currentColor;">0°</div>
<svg class="a" style="left:1293px;top:206.33333333333331px;" width="5" height="8" viewBox="0 0 5 8"><path d="M4 0.5V7.5L0.5 4Z" fill="#6f6f6f"/></svg>
<svg class="a" style="left:1391px;top:206.33333333333331px;" width="5" height="8" viewBox="0 0 5 8"><path d="M1 0.5V7.5L4.5 4Z" fill="#6f6f6f"/></svg>
<div class="a " style="left:1408px;top:161.5px;width:28px;height:20px;background:linear-gradient(#8e8e8e,#858585);border:1px solid #262626;border-radius:4px 4px 0 0"></div>
<svg class="a" style="left:1415.0px;top:164.5px;" width="14" height="14" viewBox="0 0 14 14"><path d="M1.5 3.2A2.8 2.8 0 0 1 6.8 3V7" fill="none" stroke="#111" stroke-width="2.8" stroke-linecap="round"/><path d="M1.5 3.2A2.8 2.8 0 0 1 6.8 3V7" fill="none" stroke="#f2f2f2" stroke-width="1.2" stroke-linecap="round"/><rect x="5" y="6.5" width="8" height="6.5" fill="#f0f0f0" stroke="#111" stroke-width="1"/><path d="M6 8.5H12M6 11H12" stroke="#c8c8c8" stroke-width="0.8"/><rect x="8.4" y="9" width="1.2" height="1.6" fill="#222"/></svg>
<div class="a " style="left:1408px;top:181.2px;width:28px;height:20px;background:linear-gradient(#8e8e8e,#858585);border:1px solid #262626;border-radius:0"></div>
<svg class="a" style="left:1415.0px;top:184.2px;" width="14" height="14" viewBox="0 0 14 14"><path d="M1.5 3.2A2.8 2.8 0 0 1 6.8 3V7" fill="none" stroke="#111" stroke-width="2.8" stroke-linecap="round"/><path d="M1.5 3.2A2.8 2.8 0 0 1 6.8 3V7" fill="none" stroke="#f2f2f2" stroke-width="1.2" stroke-linecap="round"/><rect x="5" y="6.5" width="8" height="6.5" fill="#f0f0f0" stroke="#111" stroke-width="1"/><path d="M6 8.5H12M6 11H12" stroke="#c8c8c8" stroke-width="0.8"/><rect x="8.4" y="9" width="1.2" height="1.6" fill="#222"/></svg>
<div class="a " style="left:1408px;top:200.9px;width:28px;height:20px;background:linear-gradient(#8e8e8e,#858585);border:1px solid #262626;border-radius:0 0 4px 4px"></div>
<svg class="a" style="left:1415.0px;top:203.9px;" width="14" height="14" viewBox="0 0 14 14"><path d="M1.5 3.2A2.8 2.8 0 0 1 6.8 3V7" fill="none" stroke="#111" stroke-width="2.8" stroke-linecap="round"/><path d="M1.5 3.2A2.8 2.8 0 0 1 6.8 3V7" fill="none" stroke="#f2f2f2" stroke-width="1.2" stroke-linecap="round"/><rect x="5" y="6.5" width="8" height="6.5" fill="#f0f0f0" stroke="#111" stroke-width="1"/><path d="M6 8.5H12M6 11H12" stroke="#c8c8c8" stroke-width="0.8"/><rect x="8.4" y="9" width="1.2" height="1.6" fill="#222"/></svg>
<div class="a drk" style="left:1289px;top:223px;width:147px;height:20px;border-radius:4px"></div>
<div class="t " style="left:1297px;top:228.75px;font-size:11px;color:#fff;">XYZ Euler</div>
<svg class="a" style="left:1425px;top:227.0px;" width="8" height="12" viewBox="0 0 8 12"><path d="M4 0.5L7.5 5H0.5Z M4 11.5L7.5 7H0.5Z" fill="#c8c8c8"/></svg>
<div class="t " style="left:1297px;top:250.60px;font-size:11.3px;color:#000;-webkit-text-stroke:0.25px currentColor;">Scale:</div>
<div class="a " style="left:1289px;top:265.5px;width:111px;height:59px;border-radius:7px;background:#1a1a1a;border:1px solid #1a1a1a"></div>
<div class="a " style="left:1290px;top:266.5px;width:109px;height:18.333333333333332px;background:linear-gradient(#9d9d9d,#b2b2b2);border-radius:6px 6px 0px 0px"></div>
<div class="t " style="left:1306px;top:270.75px;font-size:11px;color:#000;-webkit-text-stroke:0.25px currentColor;">X:</div>
<div class="t " style="right:537px;top:270.75px;font-size:11px;color:#000;-webkit-text-stroke:0.25px currentColor;">2.000</div>
<svg class="a" style="left:1293px;top:271.6666666666667px;" width="5" height="8" viewBox="0 0 5 8"><path d="M4 0.5V7.5L0.5 4Z" fill="#6f6f6f"/></svg>
<svg class="a" style="left:1391px;top:271.6666666666667px;" width="5" height="8" viewBox="0 0 5 8"><path d="M1 0.5V7.5L4.5 4Z" fill="#6f6f6f"/></svg>
<div class="a " style="left:1290px;top:285.8333333333333px;width:109px;height:18.333333333333332px;background:linear-gradient(#9d9d9d,#b2b2b2);border-radius:0px 0px 0px 0px"></div>
<div class="t " style="left:1306px;top:289.75px;font-size:11px;color:#000;-webkit-text-stroke:0.25px currentColor;">Y:</div>
<div class="t " style="right:537px;top:289.75px;font-size:11px;color:#000;-webkit-text-stroke:0.25px currentColor;">2.000</div>
<svg class="a" style="left:1293px;top:291.0px;" width="5" height="8" viewBox="0 0 5 8"><path d="M4 0.5V7.5L0.5 4Z" fill="#6f6f6f"/></svg>
<svg class="a" style="left:1391px;top:291.0px;" width="5" height="8" viewBox="0 0 5 8"><path d="M1 0.5V7.5L4.5 4Z" fill="#6f6f6f"/></svg>
<div class="a " style="left:1290px;top:305.1666666666667px;width:109px;height:18.333333333333332px;background:linear-gradient(#9d9d9d,#b2b2b2);border-radius:0px 0px 6px 6px"></div>
<div class="t " style="left:1306px;top:308.75px;font-size:11px;color:#000;-webkit-text-stroke:0.25px currentColor;">Z:</div>
<div class="t " style="right:537px;top:308.75px;font-size:11px;color:#000;-webkit-text-stroke:0.25px currentColor;">2.000</div>
<svg class="a" style="left:1293px;top:310.33333333333337px;" width="5" height="8" viewBox="0 0 5 8"><path d="M4 0.5V7.5L0.5 4Z" fill="#6f6f6f"/></svg>
<svg class="a" style="left:1391px;top:310.33333333333337px;" width="5" height="8" viewBox="0 0 5 8"><path d="M1 0.5V7.5L4.5 4Z" fill="#6f6f6f"/></svg>
<div class="a " style="left:1408px;top:265.5px;width:28px;height:20px;background:linear-gradient(#8e8e8e,#858585);border:1px solid #262626;border-radius:4px 4px 0 0"></div>
<svg class="a" style="left:1415.0px;top:268.5px;" width="14" height="14" viewBox="0 0 14 14"><path d="M1.5 3.2A2.8 2.8 0 0 1 6.8 3V7" fill="none" stroke="#111" stroke-width="2.8" stroke-linecap="round"/><path d="M1.5 3.2A2.8 2.8 0 0 1 6.8 3V7" fill="none" stroke="#f2f2f2" stroke-width="1.2" stroke-linecap="round"/><rect x="5" y="6.5" width="8" height="6.5" fill="#f0f0f0" stroke="#111" stroke-width="1"/><path d="M6 8.5H12M6 11H12" stroke="#c8c8c8" stroke-width="0.8"/><rect x="8.4" y="9" width="1.2" height="1.6" fill="#222"/></svg>
<div class="a " style="left:1408px;top:285.2px;width:28px;height:20px;background:linear-gradient(#8e8e8e,#858585);border:1px solid #262626;border-radius:0"></div>
<svg class="a" style="left:1415.0px;top:288.2px;" width="14" height="14" viewBox="0 0 14 14"><path d="M1.5 3.2A2.8 2.8 0 0 1 6.8 3V7" fill="none" stroke="#111" stroke-width="2.8" stroke-linecap="round"/><path d="M1.5 3.2A2.8 2.8 0 0 1 6.8 3V7" fill="none" stroke="#f2f2f2" stroke-width="1.2" stroke-linecap="round"/><rect x="5" y="6.5" width="8" height="6.5" fill="#f0f0f0" stroke="#111" stroke-width="1"/><path d="M6 8.5H12M6 11H12" stroke="#c8c8c8" stroke-width="0.8"/><rect x="8.4" y="9" width="1.2" height="1.6" fill="#222"/></svg>
<div class="a " style="left:1408px;top:304.9px;width:28px;height:20px;background:linear-gradient(#8e8e8e,#858585);border:1px solid #262626;border-radius:0 0 4px 4px"></div>
<svg class="a" style="left:1415.0px;top:307.9px;" width="14" height="14" viewBox="0 0 14 14"><path d="M1.5 3.2A2.8 2.8 0 0 1 6.8 3V7" fill="none" stroke="#111" stroke-width="2.8" stroke-linecap="round"/><path d="M1.5 3.2A2.8 2.8 0 0 1 6.8 3V7" fill="none" stroke="#f2f2f2" stroke-width="1.2" stroke-linecap="round"/><rect x="5" y="6.5" width="8" height="6.5" fill="#f0f0f0" stroke="#111" stroke-width="1"/><path d="M6 8.5H12M6 11H12" stroke="#c8c8c8" stroke-width="0.8"/><rect x="8.4" y="9" width="1.2" height="1.6" fill="#222"/></svg>
<div class="t " style="left:1297px;top:332.60px;font-size:11.3px;color:#000;-webkit-text-stroke:0.25px currentColor;">Dimensions:</div>
<div class="a " style="left:1289px;top:347.5px;width:147px;height:59px;border-radius:7px;background:#1a1a1a;border:1px solid #1a1a1a"></div>
<div class="a " style="left:1290px;top:348.5px;width:145px;height:18.333333333333332px;background:linear-gradient(#9d9d9d,#b2b2b2);border-radius:6px 6px 0px 0px"></div>
<div class="t " style="left:1306px;top:352.75px;font-size:11px;color:#000;-webkit-text-stroke:0.25px currentColor;">X:</div>
<div class="t " style="right:501px;top:352.75px;font-size:11px;color:#000;-webkit-text-stroke:0.25px currentColor;">2.500</div>
<svg class="a" style="left:1293px;top:353.6666666666667px;" width="5" height="8" viewBox="0 0 5 8"><path d="M4 0.5V7.5L0.5 4Z" fill="#6f6f6f"/></svg>
<svg class="a" style="left:1427px;top:353.6666666666667px;" width="5" height="8" viewBox="0 0 5 8"><path d="M1 0.5V7.5L4.5 4Z" fill="#6f6f6f"/></svg>
<div class="a " style="left:1290px;top:367.8333333333333px;width:145px;height:18.333333333333332px;background:linear-gradient(#9d9d9d,#b2b2b2);border-radius:0px 0px 0px 0px"></div>
<div class="t " style="left:1306px;top:371.75px;font-size:11px;color:#000;-webkit-text-stroke:0.25px currentColor;">Y:</div>
<div class="t " style="right:501px;top:371.75px;font-size:11px;color:#000;-webkit-text-stroke:0.25px currentColor;">2.281</div>
<svg class="a" style="left:1293px;top:373.0px;" width="5" height="8" viewBox="0 0 5 8"><path d="M4 0.5V7.5L0.5 4Z" fill="#6f6f6f"/></svg>
<svg class="a" style="left:1427px;top:373.0px;" width="5" height="8" viewBox="0 0 5 8"><path d="M1 0.5V7.5L4.5 4Z" fill="#6f6f6f"/></svg>
<div class="a " style="left:1290px;top:387.1666666666667px;width:145px;height:18.333333333333332px;background:linear-gradient(#9d9d9d,#b2b2b2);border-radius:0px 0px 6px 6px"></div>
<div class="t " style="left:1306px;top:390.75px;font-size:11px;color:#000;-webkit-text-stroke:0.25px currentColor;">Z:</div>
<div class="t " style="right:501px;top:390.75px;font-size:11px;color:#000;-webkit-text-stroke:0.25px currentColor;">3.875</div>
<svg class="a" style="left:1293px;top:392.33333333333337px;" width="5" height="8" viewBox="0 0 5 8"><path d="M4 0.5V7.5L0.5 4Z" fill="#6f6f6f"/></svg>
<svg class="a" style="left:1427px;top:392.33333333333337px;" width="5" height="8" viewBox="0 0 5 8"><path d="M1 0.5V7.5L4.5 4Z" fill="#6f6f6f"/></svg>
<div class="a " style="left:1287px;top:414px;width:153px;height:1px;background:#5c5c5c"></div>
<div class="a " style="left:1287px;top:415px;width:153px;height:1px;background:#858585"></div>
<svg class="a" style="left:1294px;top:421px;" width="10" height="10" viewBox="0 0 10 10"><path d="M1 1.5H9L5 8.5Z" fill="#101010"/></svg>
<div class="a " style="left:1306px;top:420px;width:14px;height:14px;background:linear-gradient(#3a3a3a,#474747);border:1px solid #222;border-radius:3px"></div>
<svg class="a" style="left:1307px;top:419px;" width="13" height="13" viewBox="0 0 13 13"><path d="M2.5 6.5L5.5 9.5L11.5 1.5" fill="none" stroke="#000" stroke-width="3.4" stroke-linecap="round" stroke-linejoin="round" opacity="0.7"/><path d="M2.5 6.5L5.5 9.5L11.5 1.5" fill="none" stroke="#fff" stroke-width="1.8" stroke-linecap="round" stroke-linejoin="round"/></svg>
<div class="t " style="left:1326px;top:421.15px;font-size:12.2px;color:#000;-webkit-text-stroke:0.25px currentColor;">Grease Pencil</div>
<svg class="a" style="left:1422px;top:425px;" width="12" height="6" viewBox="0 0 12 6"><rect x="0" y="0" width="1" height="1" fill="#1a1a1a"/><rect x="0" y="1" width="1" height="1" fill="#b0b0b0"/><rect x="0" y="3" width="1" height="1" fill="#1a1a1a"/><rect x="0" y="4" width="1" height="1" fill="#b0b0b0"/><rect x="3" y="0" width="1" height="1" fill="#1a1a1a"/><rect x="3" y="1" width="1" height="1" fill="#b0b0b0"/><rect x="3" y="3" width="1" height="1" fill="#1a1a1a"/><rect x="3" y="4" width="1" height="1" fill="#b0b0b0"/><rect x="6" y="0" width="1" height="1" fill="#1a1a1a"/><rect x="6" y="1" width="1" height="1" fill="#b0b0b0"/><rect x="6" y="3" width="1" height="1" fill="#1a1a1a"/><rect x="6" y="4" width="1" height="1" fill="#b0b0b0"/><rect x="9" y="0" width="1" height="1" fill="#1a1a1a"/><rect x="9" y="1" width="1" height="1" fill="#b0b0b0"/><rect x="9" y="3" width="1" height="1" fill="#1a1a1a"/><rect x="9" y="4" width="1" height="1" fill="#b0b0b0"/></svg>
<div class="a " style="left:1289px;top:448px;width:73px;height:19px;background:linear-gradient(#5a8ad8,#4574c0);border:1px solid #1a1a1a;border-radius:4px 0 0 4px"></div>
<div class="t " style="left:1325px;transform:translateX(-50%);top:452.75px;font-size:11px;color:#000;-webkit-text-stroke:0.25px currentColor;">Scene</div>
<div class="a drk" style="left:1361px;top:448px;width:75px;height:19px;border-radius:0 4px 4px 0"></div>
<div class="t " style="left:1398px;transform:translateX(-50%);top:452.75px;font-size:11px;color:#fff;">Object</div>
<div class="a drk" style="left:1289px;top:473px;width:33px;height:19px;border-radius:4px 0 0 4px"></div>
<svg class="a" style="left:1293px;top:474px;" width="16" height="16" viewBox="0 0 16 16"><path d="M2.5 13.5L12 4" stroke="#111" stroke-width="4.6" stroke-linecap="round"/><path d="M3 13L11.5 4.5" stroke="#b8d050" stroke-width="2.6" stroke-linecap="round"/><path d="M10.8 5.2L12.5 3.5" stroke="#e04040" stroke-width="2.6" stroke-linecap="round"/><path d="M1.8 14.2L3.5 12.5" stroke="#f0e0b0" stroke-width="2" stroke-linecap="round"/></svg>
<svg class="a" style="left:1310px;top:476px;" width="8" height="12" viewBox="0 0 8 12"><path d="M4 0.5L7.5 5H0.5Z M4 11.5L7.5 7H0.5Z" fill="#c8c8c8"/></svg>
<div class="a " style="left:1321px;top:473px;width:115px;height:19px;background:linear-gradient(#a0a0a0,#8e8e8e);border:1px solid #1a1a1a;border-radius:0 4px 4px 0"></div>
<svg class="a" style="left:1326px;top:476px;" width="12" height="12" viewBox="0 0 12 12"><path d="M6 0.5V11.5M0.5 6H11.5" stroke="#111" stroke-width="3.5"/><path d="M6 1.5V10.5M1.5 6H10.5" stroke="#fff" stroke-width="1.6"/></svg>
<div class="t " style="left:1385px;transform:translateX(-50%);top:477.75px;font-size:11px;color:#000;-webkit-text-stroke:0.25px currentColor;">New</div>
<div class="a " style="left:1287px;top:499px;width:153px;height:1px;background:#5c5c5c"></div>
<div class="a " style="left:1287px;top:500px;width:153px;height:1px;background:#858585"></div>
<svg class="a" style="left:1294px;top:507px;" width="10" height="10" viewBox="0 0 10 10"><path d="M1 1.5H9L5 8.5Z" fill="#101010"/></svg>
<div class="t " style="left:1307px;top:506.15px;font-size:12.2px;color:#000;-webkit-text-stroke:0.25px currentColor;">View</div>
<svg class="a" style="left:1422px;top:510px;" width="12" height="6" viewBox="0 0 12 6"><rect x="0" y="0" width="1" height="1" fill="#1a1a1a"/><rect x="0" y="1" width="1" height="1" fill="#b0b0b0"/><rect x="0" y="3" width="1" height="1" fill="#1a1a1a"/><rect x="0" y="4" width="1" height="1" fill="#b0b0b0"/><rect x="3" y="0" width="1" height="1" fill="#1a1a1a"/><rect x="3" y="1" width="1" height="1" fill="#b0b0b0"/><rect x="3" y="3" width="1" height="1" fill="#1a1a1a"/><rect x="3" y="4" width="1" height="1" fill="#b0b0b0"/><rect x="6" y="0" width="1" height="1" fill="#1a1a1a"/><rect x="6" y="1" width="1" height="1" fill="#b0b0b0"/><rect x="6" y="3" width="1" height="1" fill="#1a1a1a"/><rect x="6" y="4" width="1" height="1" fill="#b0b0b0"/><rect x="9" y="0" width="1" height="1" fill="#1a1a1a"/><rect x="9" y="1" width="1" height="1" fill="#b0b0b0"/><rect x="9" y="3" width="1" height="1" fill="#1a1a1a"/><rect x="9" y="4" width="1" height="1" fill="#b0b0b0"/></svg>
<div class="a " style="left:1289px;top:534px;width:147px;height:18px;border-radius:8px;background:#4e4e4e;border:1px solid #4e4e4e"></div>
<div class="a " style="left:1290px;top:535.0px;width:145px;height:16.0px;background:linear-gradient(#828282,#8e8e8e);border-radius:7px 7px 7px 7px"></div>
<div class="t " style="left:1306px;top:537.75px;font-size:11px;color:#4e4e4e;-webkit-text-stroke:0.25px currentColor;">Lens:</div>
<div class="t " style="right:501px;top:537.75px;font-size:11px;color:#4e4e4e;-webkit-text-stroke:0.25px currentColor;">35.000</div>
<svg class="a" style="left:1293px;top:539.0px;" width="5" height="8" viewBox="0 0 5 8"><path d="M4 0.5V7.5L0.5 4Z" fill="#7a7a7a"/></svg>
<svg class="a" style="left:1427px;top:539.0px;" width="5" height="8" viewBox="0 0 5 8"><path d="M1 0.5V7.5L4.5 4Z" fill="#7a7a7a"/></svg>
<div class="t " style="left:1297px;top:559.75px;font-size:11px;color:#4a4a4a;-webkit-text-stroke:0.25px currentColor;">Lock to Object:</div>
<div class="a " style="left:1289px;top:577px;width:147px;height:19px;background:linear-gradient(#7c7c7c,#8a8a8a);border:1px solid #555;border-radius:4px"></div>
<svg class="a" style="left:1295px;top:580px;" width="13" height="13" viewBox="0 0 13 13"><path d="M6.5 0.5L12 3V10L6.5 12.5L1 10V3Z" fill="#c08a48" stroke="#3a2a1a" stroke-width="0.8"/><path d="M1 3L6.5 5.5L12 3M6.5 5.5V12.5" fill="none" stroke="#f0c88a" stroke-width="0.8"/></svg>
<svg class="a" style="left:1420px;top:579px;" width="13" height="14" viewBox="0 0 13 14"><path d="M2 12L9 5" stroke="#222" stroke-width="3"/><path d="M2 12L9 5" stroke="#ddd" stroke-width="1.2"/><path d="M8 3L11 6" stroke="#222" stroke-width="3"/></svg>
<div class="a " style="left:1292px;top:602px;width:14px;height:14px;background:linear-gradient(#5a5a5a,#666);border:1px solid #4a4a4a;border-radius:3px"></div>
<div class="t " style="left:1314px;top:603.75px;font-size:11px;color:#4a4a4a;-webkit-text-stroke:0.25px currentColor;">Lock to Cursor</div>
<div class="a " style="left:1292px;top:627px;width:14px;height:14px;background:linear-gradient(#3a3a3a,#474747);border:1px solid #222;border-radius:3px"></div>
<svg class="a" style="left:1293px;top:626px;" width="13" height="13" viewBox="0 0 13 13"><path d="M2.5 6.5L5.5 9.5L11.5 1.5" fill="none" stroke="#000" stroke-width="3.4" stroke-linecap="round" stroke-linejoin="round" opacity="0.7"/><path d="M2.5 6.5L5.5 9.5L11.5 1.5" fill="none" stroke="#fff" stroke-width="1.8" stroke-linecap="round" stroke-linejoin="round"/></svg>
<div class="t " style="left:1314px;top:628.75px;font-size:11px;color:#fff;">Lock Camera to View</div>
<div class="t " style="left:1297px;top:653.75px;font-size:11px;color:#000;-webkit-text-stroke:0.25px currentColor;">Clip:</div>
<div class="a " style="left:1289px;top:669px;width:147px;height:39px;border-radius:7px;background:#1a1a1a;border:1px solid #1a1a1a"></div>
<div class="a " style="left:1290px;top:670.0px;width:145px;height:18.0px;background:linear-gradient(#9d9d9d,#b2b2b2);border-radius:6px 6px 0px 0px"></div>
<div class="t " style="left:1306px;top:673.75px;font-size:11px;color:#000;-webkit-text-stroke:0.25px currentColor;">Start:</div>
<div class="t " style="right:501px;top:673.75px;font-size:11px;color:#000;-webkit-text-stroke:0.25px currentColor;">0.100</div>
<svg class="a" style="left:1293px;top:675.0px;" width="5" height="8" viewBox="0 0 5 8"><path d="M4 0.5V7.5L0.5 4Z" fill="#6f6f6f"/></svg>
<svg class="a" style="left:1427px;top:675.0px;" width="5" height="8" viewBox="0 0 5 8"><path d="M1 0.5V7.5L4.5 4Z" fill="#6f6f6f"/></svg>
<div class="a " style="left:1290px;top:689.0px;width:145px;height:18.0px;background:linear-gradient(#9d9d9d,#b2b2b2);border-radius:0px 0px 6px 6px"></div>
<div class="t " style="left:1306px;top:692.75px;font-size:11px;color:#000;-webkit-text-stroke:0.25px currentColor;">End:</div>
<div class="t " style="right:501px;top:692.75px;font-size:11px;color:#000;-webkit-text-stroke:0.25px currentColor;">1000.000</div>
<svg class="a" style="left:1293px;top:694.0px;" width="5" height="8" viewBox="0 0 5 8"><path d="M4 0.5V7.5L0.5 4Z" fill="#6f6f6f"/></svg>
<svg class="a" style="left:1427px;top:694.0px;" width="5" height="8" viewBox="0 0 5 8"><path d="M1 0.5V7.5L4.5 4Z" fill="#6f6f6f"/></svg>
<div class="t " style="left:1297px;top:712.75px;font-size:11px;color:#4a4a4a;-webkit-text-stroke:0.25px currentColor;">Local Camera:</div>
<div class="a " style="left:1289px;top:729px;width:147px;height:19px;background:linear-gradient(#7c7c7c,#8a8a8a);border:1px solid #555;border-radius:4px"></div>
<svg class="a" style="left:1295px;top:732px;" width="13" height="13" viewBox="0 0 13 13"><path d="M6.5 0.5L12 3V10L6.5 12.5L1 10V3Z" fill="#c08a48" stroke="#3a2a1a" stroke-width="0.8"/><path d="M1 3L6.5 5.5L12 3M6.5 5.5V12.5" fill="none" stroke="#f0c88a" stroke-width="0.8"/></svg>
<div class="t " style="left:1313px;top:733.75px;font-size:11px;color:#4a4a4a;-webkit-text-stroke:0.25px currentColor;">Camera</div>
<svg class="a" style="left:1420px;top:732px;" width="13" height="13" viewBox="0 0 13 13"><path d="M2 2L11 11M11 2L2 11" stroke="#333" stroke-width="3"/><path d="M2 2L11 11M11 2L2 11" stroke="#eee" stroke-width="1.3"/></svg>
<div class="a " style="left:1292px;top:756px;width:14px;height:14px;background:linear-gradient(#5a5a5a,#666);border:1px solid #4a4a4a;border-radius:3px"></div>
<div class="t " style="left:1314px;top:758.75px;font-size:11px;color:#4a4a4a;-webkit-text-stroke:0.25px currentColor;">Render Border</div>
<div class="a " style="left:1287px;top:780px;width:153px;height:1px;background:#5c5c5c"></div>
<div class="a " style="left:1287px;top:781px;width:153px;height:1px;background:#858585"></div>
<svg class="a" style="left:1294px;top:788px;" width="10" height="10" viewBox="0 0 10 10"><path d="M1 1.5H9L5 8.5Z" fill="#101010"/></svg>
<div class="t " style="left:1307px;top:787.15px;font-size:12.2px;color:#000;-webkit-text-stroke:0.25px currentColor;">3D Cursor</div>
<svg class="a" style="left:1422px;top:791px;" width="12" height="6" viewBox="0 0 12 6"><rect x="0" y="0" width="1" height="1" fill="#1a1a1a"/><rect x="0" y="1" width="1" height="1" fill="#b0b0b0"/><rect x="0" y="3" width="1" height="1" fill="#1a1a1a"/><rect x="0" y="4" width="1" height="1" fill="#b0b0b0"/><rect x="3" y="0" width="1" height="1" fill="#1a1a1a"/><rect x="3" y="1" width="1" height="1" fill="#b0b0b0"/><rect x="3" y="3" width="1" height="1" fill="#1a1a1a"/><rect x="3" y="4" width="1" height="1" fill="#b0b0b0"/><rect x="6" y="0" width="1" height="1" fill="#1a1a1a"/><rect x="6" y="1" width="1" height="1" fill="#b0b0b0"/><rect x="6" y="3" width="1" height="1" fill="#1a1a1a"/><rect x="6" y="4" width="1" height="1" fill="#b0b0b0"/><rect x="9" y="0" width="1" height="1" fill="#1a1a1a"/><rect x="9" y="1" width="1" height="1" fill="#b0b0b0"/><rect x="9" y="3" width="1" height="1" fill="#1a1a1a"/><rect x="9" y="4" width="1" height="1" fill="#b0b0b0"/></svg>
<div class="a " style="left:9px;top:803px;width:1452px;height:27px;background:#727272;border-top:1px solid #7c7c7c"></div>
<div class="a " style="left:9px;top:830px;width:1452px;height:1px;background:#000"></div>
<svg class="a" style="left:9px;top:818px;" width="12" height="12" viewBox="0 0 12 12"><path d="M0 1L11 12M0 5L7 12M0 9L3 12" stroke="#2a2a2a" stroke-width="1"/><path d="M0 2L10 12M0 6L6 12M0 10L2 12" stroke="#9a9a9a" stroke-width="1"/></svg>
<svg class="a" style="left:1449px;top:831px;" width="12" height="12" viewBox="0 0 12 12"><path d="M1 0L12 11M5 0L12 7M9 0L12 3" stroke="#2a2a2a" stroke-width="1"/><path d="M2 0L12 10M6 0L12 6M10 0L12 2" stroke="#9a9a9a" stroke-width="1"/></svg>
<div class="a drk" style="left:18px;top:807px;width:30px;height:20px;border-radius:4px"></div>
<svg class="a" style="left:23px;top:810px;" width="13" height="14" viewBox="0 0 13 14"><path d="M6.5 0.8L12 3.3V10.5L6.5 13L1 10.5V3.3Z" fill="#d8d8d8" stroke="#111" stroke-width="1"/><path d="M1 3.3L6.5 5.8L12 3.3M6.5 5.8V13" fill="none" stroke="#777" stroke-width="0.8"/><path d="M6.5 5.8L12 3.3V10.5L6.5 13Z" fill="#a8a8a8"/></svg>
<svg class="a" style="left:37px;top:811px;" width="8" height="12" viewBox="0 0 8 12"><path d="M4 0.5L7.5 5H0.5Z M4 11.5L7.5 7H0.5Z" fill="#c8c8c8"/></svg>
<div class="t " style="left:61px;top:812.75px;font-size:11px;color:#000;-webkit-text-stroke:0.25px currentColor;">View</div>
<div class="t " style="left:105px;top:812.75px;font-size:11px;color:#000;-webkit-text-stroke:0.25px currentColor;">Select</div>
<div class="t " style="left:156px;top:812.75px;font-size:11px;color:#000;-webkit-text-stroke:0.25px currentColor;">Add</div>
<div class="t " style="left:195px;top:812.75px;font-size:11px;color:#000;-webkit-text-stroke:0.25px currentColor;">Object</div>
<div class="a drk" style="left:241px;top:807px;width:113px;height:20px;border-radius:4px"></div>
<svg class="a" style="left:247px;top:809px;" width="14" height="15" viewBox="0 0 14 15"><path d="M7 0.8L13 3.6V11.2L7 14L1 11.2V3.6Z" fill="#d98a3a" stroke="#2a1a0a" stroke-width="1"/><path d="M1 3.6L7 6.4L13 3.6" fill="#f6c88a"/><path d="M1 3.6L7 0.8L13 3.6L7 6.4Z" fill="#f4c07a"/><path d="M7 6.4L13 3.6V11.2L7 14Z" fill="#b86a22"/></svg>
<div class="t " style="left:265px;top:812.75px;font-size:11px;color:#fff;">Object Mode</div>
<svg class="a" style="left:343px;top:811px;" width="8" height="12" viewBox="0 0 8 12"><path d="M4 0.5L7.5 5H0.5Z M4 11.5L7.5 7H0.5Z" fill="#c8c8c8"/></svg>
<div class="a drk" style="left:359px;top:807px;width:35px;height:20px;border-radius:4px"></div>
<svg class="a" style="left:364px;top:809px;" width="16" height="16" viewBox="0 0 16 16"><circle cx="8" cy="8" r="6.5" fill="#e8e8e8" stroke="#111" stroke-width="1.4"/><ellipse cx="8" cy="8" rx="2.6" ry="6.5" fill="none" stroke="#222" stroke-width="1.1"/><path d="M2 5.8H14M2 10.2H14" stroke="#222" stroke-width="1.1"/></svg>
<svg class="a" style="left:383px;top:811px;" width="8" height="12" viewBox="0 0 8 12"><path d="M4 0.5L7.5 5H0.5Z M4 11.5L7.5 7H0.5Z" fill="#c8c8c8"/></svg>
<div class="a drk" style="left:399px;top:807px;width:35px;height:20px;border-radius:4px 0 0 4px"></div>
<svg class="a" style="left:403px;top:810px;" width="14" height="14" viewBox="0 0 14 14"><circle cx="5" cy="5" r="4" fill="#e8e8e8" stroke="#222" stroke-width="0.8"/><circle cx="9" cy="9" r="4" fill="#e8e8e8" stroke="#222" stroke-width="0.8"/><rect x="5" y="5" width="4" height="4" fill="none" stroke="#3a6ad0" stroke-width="1.2"/></svg>
<svg class="a" style="left:423px;top:811px;" width="8" height="12" viewBox="0 0 8 12"><path d="M4 0.5L7.5 5H0.5Z M4 11.5L7.5 7H0.5Z" fill="#c8c8c8"/></svg>
<div class="a " style="left:433px;top:807px;width:21px;height:20px;background:linear-gradient(#a8a8a8,#959595);border:1px solid #1a1a1a;border-radius:0 4px 4px 0"></div>
<svg class="a" style="left:435px;top:809px;" width="17" height="16" viewBox="0 0 17 16"><circle cx="4" cy="3" r="1.6" fill="none" stroke="#3a6ad0" stroke-width="1"/><circle cx="8.5" cy="3" r="1.6" fill="none" stroke="#3a6ad0" stroke-width="1"/><circle cx="13" cy="3" r="1.6" fill="none" stroke="#3a6ad0" stroke-width="1"/><path d="M2 11H15M4.5 8.5L2 11L4.5 13.5M12.5 8.5L15 11L12.5 13.5" fill="none" stroke="#111" stroke-width="2.6"/><path d="M2 11H15M4.5 8.5L2 11L4.5 13.5M12.5 8.5L15 11L12.5 13.5" fill="none" stroke="#fff" stroke-width="1.1"/></svg>
<div class="a drk" style="left:460px;top:808px;width:79px;height:19px;border-radius:4px"></div>
<div class="a " style="left:479px;top:808px;width:20px;height:19px;background:linear-gradient(#5a8ad8,#4574c0);border:1px solid #1a1a1a"></div>
<div class="a " style="left:498px;top:808px;width:1px;height:19px;background:#1a1a1a"></div>
<div class="a " style="left:518px;top:808px;width:1px;height:19px;background:#1a1a1a"></div>
<svg class="a" style="left:462px;top:809px;" width="16" height="16" viewBox="0 0 16 16"><path d="M8 1.5V9.5L2 14M8 9.5L14 13.5" fill="none" stroke="#111" stroke-width="2.8"/><path d="M8 2V9.5" stroke="#4a7ae8" stroke-width="1.5"/><path d="M8 9.5L2.5 13.5" stroke="#e83a3a" stroke-width="1.5"/><path d="M8 9.5L13.5 13.2" stroke="#5ad04a" stroke-width="1.5"/></svg>
<svg class="a" style="left:482px;top:810px;" width="14" height="14" viewBox="0 0 14 14"><path d="M2 12L11 3M6 3H11V8" fill="none" stroke="#10203a" stroke-width="2.8"/><path d="M2 12L11 3M6.5 3H11V7.5" fill="none" stroke="#c8dcff" stroke-width="1.2"/></svg>
<svg class="a" style="left:501px;top:810px;" width="14" height="14" viewBox="0 0 14 14"><path d="M2 13C2 7 6 3 12 2" fill="none" stroke="#1a2a40" stroke-width="2.6"/><path d="M2 13C2 7 6 3 12 2" fill="none" stroke="#6a90c8" stroke-width="1.2"/></svg>
<svg class="a" style="left:521px;top:810px;" width="14" height="14" viewBox="0 0 14 14"><path d="M2 12L8 6" stroke="#1a2a40" stroke-width="2.6"/><path d="M2 12L8 6" stroke="#6a90c8" stroke-width="1.2"/><rect x="7.5" y="1.5" width="5" height="5" fill="#6a90c8" stroke="#1a2a40" stroke-width="1"/></svg>
<div class="a drk" style="left:538px;top:808px;width:73px;height:19px;border-radius:0 4px 4px 0"></div>
<div class="t " style="left:546px;top:812.75px;font-size:11px;color:#fff;">Global</div>
<svg class="a" style="left:600px;top:811px;" width="8" height="12" viewBox="0 0 8 12"><path d="M4 0.5L7.5 5H0.5Z M4 11.5L7.5 7H0.5Z" fill="#c8c8c8"/></svg>
<div class="a " style="left:616px;top:808px;width:50px;height:19px;background:#1a1a1a;border-radius:4px"></div>
<div class="a " style="left:617.0px;top:809.0px;width:8.8px;height:7.9px;background:#9a9a9a;border-top-left-radius:3px;"></div>
<div class="a " style="left:626.8px;top:809.0px;width:8.8px;height:7.9px;background:#9a9a9a;"></div>
<div class="a " style="left:636.6px;top:809.0px;width:8.8px;height:7.9px;background:#9a9a9a;"></div>
<div class="a " style="left:646.4px;top:809.0px;width:8.8px;height:7.9px;background:#9a9a9a;"></div>
<div class="a " style="left:656.2px;top:809.0px;width:8.8px;height:7.9px;background:#9a9a9a;border-top-right-radius:3px;"></div>
<div class="a " style="left:617.0px;top:817.8px;width:8.8px;height:7.9px;background:#9a9a9a;border-bottom-left-radius:3px;"></div>
<div class="a " style="left:626.8px;top:817.8px;width:8.8px;height:7.9px;background:#9a9a9a;"></div>
<div class="a " style="left:636.6px;top:817.8px;width:8.8px;height:7.9px;background:#9a9a9a;"></div>
<div class="a " style="left:646.4px;top:817.8px;width:8.8px;height:7.9px;background:#9a9a9a;"></div>
<div class="a " style="left:656.2px;top:817.8px;width:8.8px;height:7.9px;background:#9a9a9a;border-bottom-right-radius:3px;"></div>
<svg class="a" style="left:619px;top:810.5px;" width="5" height="5" viewBox="0 0 5 5"><circle cx="2.5" cy="2.5" r="2" fill="#f0a040" stroke="#3a2000" stroke-width="0.8"/></svg>
<div class="a " style="left:671px;top:808px;width:50px;height:19px;background:#1a1a1a;border-radius:4px"></div>
<div class="a " style="left:672.0px;top:809.0px;width:8.8px;height:7.9px;background:#9a9a9a;border-top-left-radius:3px;"></div>
<div class="a " style="left:681.8px;top:809.0px;width:8.8px;height:7.9px;background:#9a9a9a;"></div>
<div class="a " style="left:691.6px;top:809.0px;width:8.8px;height:7.9px;background:#9a9a9a;"></div>
<div class="a " style="left:701.4px;top:809.0px;width:8.8px;height:7.9px;background:#9a9a9a;"></div>
<div class="a " style="left:711.2px;top:809.0px;width:8.8px;height:7.9px;background:#9a9a9a;border-top-right-radius:3px;"></div>
<div class="a " style="left:672.0px;top:817.8px;width:8.8px;height:7.9px;background:#9a9a9a;border-bottom-left-radius:3px;"></div>
<div class="a " style="left:681.8px;top:817.8px;width:8.8px;height:7.9px;background:#9a9a9a;"></div>
<div class="a " style="left:691.6px;top:817.8px;width:8.8px;height:7.9px;background:#9a9a9a;"></div>
<div class="a " style="left:701.4px;top:817.8px;width:8.8px;height:7.9px;background:#9a9a9a;"></div>
<div class="a " style="left:711.2px;top:817.8px;width:8.8px;height:7.9px;background:#9a9a9a;border-bottom-right-radius:3px;"></div>
<div class="a tool" style="left:726px;top:808px;width:20px;height:19px;border-radius:4px"></div>
<svg class="a" style="left:728px;top:809px;" width="17" height="16" viewBox="0 0 17 16"><defs><linearGradient id="lkg" x1="0" y1="0" x2="1" y2="1"><stop offset="0" stop-color="#f0f0f0"/><stop offset="1" stop-color="#8a8a8a"/></linearGradient></defs><rect x="1.5" y="1.5" width="10" height="10" fill="url(#lkg)" stroke="#222" stroke-width="1"/><rect x="11" y="6" width="4" height="4.5" rx="2" fill="none" stroke="#111" stroke-width="2.4"/><rect x="11" y="10" width="4" height="4.5" rx="2" fill="none" stroke="#111" stroke-width="2.4"/><rect x="11" y="6" width="4" height="4.5" rx="2" fill="none" stroke="#f4f4f4" stroke-width="1"/><rect x="11" y="10" width="4" height="4.5" rx="2" fill="none" stroke="#f4f4f4" stroke-width="1"/></svg>
<div class="a tool" style="left:751px;top:808px;width:20px;height:19px;border-radius:4px"></div>
<svg class="a" style="left:754px;top:810px;" width="14" height="14" viewBox="0 0 14 14"><circle cx="7" cy="7" r="5.5" fill="none" stroke="#6a6a6a" stroke-width="1.2"/><circle cx="7" cy="7" r="3" fill="none" stroke="#b8b8b8" stroke-width="1.4"/></svg>
<div class="a tool" style="left:776px;top:808px;width:21px;height:19px;border-radius:4px 0 0 4px"></div>
<svg class="a" style="left:778px;top:809px;" width="17" height="16" viewBox="0 0 17 16"><g transform="rotate(-45 8.5 8)"><path d="M4 2V8A4.5 4.5 0 0 0 13 8V2" fill="none" stroke="#4a4a4a" stroke-width="3.4"/><path d="M4 2V8A4.5 4.5 0 0 0 13 8V2" fill="none" stroke="#b8b8b8" stroke-width="1.8"/><path d="M4 1.5V4M13 1.5V4" stroke="#f0f0f0" stroke-width="1.8"/></g></svg>
<div class="a drk" style="left:796px;top:808px;width:35px;height:19px;border-radius:0 4px 4px 0"></div>
<svg class="a" style="left:800px;top:809px;" width="17" height="17" viewBox="0 0 17 17"><path d="M8.5 3V16M13.5 3V16M3 8H16M3 13H16" stroke="#e8e8e8" stroke-width="1.4"/><circle cx="5.5" cy="5.5" r="4" fill="#e8f0ff" stroke="#2a3a6a" stroke-width="0.8"/><circle cx="5.5" cy="5.5" r="1.8" fill="#3a6ad8"/></svg>
<svg class="a" style="left:821px;top:811px;" width="8" height="12" viewBox="0 0 8 12"><path d="M4 0.5L7.5 5H0.5Z M4 11.5L7.5 7H0.5Z" fill="#c8c8c8"/></svg>
<div class="a tool" style="left:837px;top:808px;width:20px;height:19px;border-radius:4px 0 0 4px"></div>
<div class="a tool" style="left:856px;top:808px;width:20px;height:19px;border-radius:0 4px 4px 0"></div>
<svg class="a" style="left:839px;top:810px;" width="16" height="15" viewBox="0 0 16 15"><rect x="1" y="4" width="13" height="9" fill="#ddd" stroke="#111" stroke-width="1"/><circle cx="7.5" cy="8.5" r="2.8" fill="#555" stroke="#111" stroke-width="0.8"/><rect x="2" y="2.5" width="4" height="2" fill="#222"/><path d="M13 0.5V5M10.8 2.7H15.2" stroke="#f0d040" stroke-width="1.4"/></svg>
<svg class="a" style="left:858px;top:810px;" width="16" height="15" viewBox="0 0 16 15"><rect x="1.5" y="6" width="13" height="8" fill="#ddd" stroke="#111" stroke-width="1"/><path d="M1.5 6L13 2.5L14 5.5" fill="#333" stroke="#111" stroke-width="1"/><path d="M4 4.5L6 6M8 3.5L10 5" stroke="#eee" stroke-width="1"/><rect x="3" y="9" width="10" height="3" fill="#777"/></svg>
<div class="a " style="left:9px;top:831px;width:1452px;height:108px;background:#464646"></div>
<div class="a " style="left:361.34px;top:831px;width:327.96px;height:105px;background:#747474"></div>
<div class="a" style="left:15.2px;top:831px;width:1px;height:108px;background:#414141"></div><div class="a" style="left:33.4px;top:831px;width:1px;height:108px;background:#3c3c3c"></div><div class="a" style="left:51.6px;top:831px;width:1px;height:108px;background:#414141"></div><div class="a" style="left:69.8px;top:831px;width:1px;height:108px;background:#3c3c3c"></div><div class="a" style="left:88.0px;top:831px;width:1px;height:108px;background:#414141"></div><div class="a" style="left:106.3px;top:831px;width:1px;height:108px;background:#3c3c3c"></div><div class="a" style="left:124.5px;top:831px;width:1px;height:108px;background:#414141"></div><div class="a" style="left:142.7px;top:831px;width:1px;height:108px;background:#3c3c3c"></div><div class="a" style="left:160.9px;top:831px;width:1px;height:108px;background:#414141"></div><div class="a" style="left:179.1px;top:831px;width:1px;height:108px;background:#3c3c3c"></div><div class="a" style="left:197.4px;top:831px;width:1px;height:108px;background:#414141"></div><div class="a" style="left:215.6px;top:831px;width:1px;height:108px;background:#3c3c3c"></div><div class="a" style="left:233.8px;top:831px;width:1px;height:108px;background:#414141"></div><div class="a" style="left:252.0px;top:831px;width:1px;height:108px;background:#3c3c3c"></div><div class="a" style="left:270.2px;top:831px;width:1px;height:108px;background:#414141"></div><div class="a" style="left:288.5px;top:831px;width:1px;height:108px;background:#3c3c3c"></div><div class="a" style="left:306.7px;top:831px;width:1px;height:108px;background:#414141"></div><div class="a" style="left:324.9px;top:831px;width:1px;height:108px;background:#3c3c3c"></div><div class="a" style="left:343.1px;top:831px;width:1px;height:108px;background:#414141"></div><div class="a" style="left:361.3px;top:831px;width:1px;height:108px;background:#646464"></div><div class="a" style="left:379.6px;top:831px;width:1px;height:108px;background:#6c6c6c"></div><div class="a" style="left:397.8px;top:831px;width:1px;height:108px;background:#646464"></div><div class="a" style="left:416.0px;top:831px;width:1px;height:108px;background:#6c6c6c"></div><div class="a" style="left:434.2px;top:831px;width:1px;height:108px;background:#646464"></div><div class="a" style="left:452.4px;top:831px;width:1px;height:108px;background:#6c6c6c"></div><div class="a" style="left:470.7px;top:831px;width:1px;height:108px;background:#646464"></div><div class="a" style="left:488.9px;top:831px;width:1px;height:108px;background:#6c6c6c"></div><div class="a" style="left:507.1px;top:831px;width:1px;height:108px;background:#646464"></div><div class="a" style="left:525.3px;top:831px;width:1px;height:108px;background:#6c6c6c"></div><div class="a" style="left:543.5px;top:831px;width:1px;height:108px;background:#646464"></div><div class="a" style="left:561.8px;top:831px;width:1px;height:108px;background:#6c6c6c"></div><div class="a" style="left:580.0px;top:831px;width:1px;height:108px;background:#646464"></div><div class="a" style="left:598.2px;top:831px;width:1px;height:108px;background:#6c6c6c"></div><div class="a" style="left:616.4px;top:831px;width:1px;height:108px;background:#646464"></div><div class="a" style="left:634.6px;top:831px;width:1px;height:108px;background:#6c6c6c"></div><div class="a" style="left:652.9px;top:831px;width:1px;height:108px;background:#646464"></div><div class="a" style="left:671.1px;top:831px;width:1px;height:108px;background:#6c6c6c"></div><div class="a" style="left:689.3px;top:831px;width:1px;height:108px;background:#3c3c3c"></div><div class="a" style="left:707.5px;top:831px;width:1px;height:108px;background:#414141"></div><div class="a" style="left:725.7px;top:831px;width:1px;height:108px;background:#3c3c3c"></div><div class="a" style="left:744.0px;top:831px;width:1px;height:108px;background:#414141"></div><div class="a" style="left:762.2px;top:831px;width:1px;height:108px;background:#3c3c3c"></div><div class="a" style="left:780.4px;top:831px;width:1px;height:108px;background:#414141"></div><div class="a" style="left:798.6px;top:831px;width:1px;height:108px;background:#3c3c3c"></div><div class="a" style="left:816.8px;top:831px;width:1px;height:108px;background:#414141"></div><div class="a" style="left:835.1px;top:831px;width:1px;height:108px;background:#3c3c3c"></div><div class="a" style="left:853.3px;top:831px;width:1px;height:108px;background:#414141"></div><div class="a" style="left:871.5px;top:831px;width:1px;height:108px;background:#3c3c3c"></div><div class="a" style="left:889.7px;top:831px;width:1px;height:108px;background:#414141"></div><div class="a" style="left:907.9px;top:831px;width:1px;height:108px;background:#3c3c3c"></div><div class="a" style="left:926.2px;top:831px;width:1px;height:108px;background:#414141"></div><div class="a" style="left:944.4px;top:831px;width:1px;height:108px;background:#3c3c3c"></div><div class="a" style="left:962.6px;top:831px;width:1px;height:108px;background:#414141"></div><div class="a" style="left:980.8px;top:831px;width:1px;height:108px;background:#3c3c3c"></div><div class="a" style="left:999.0px;top:831px;width:1px;height:108px;background:#414141"></div><div class="a" style="left:1017.3px;top:831px;width:1px;height:108px;background:#3c3c3c"></div><div class="a" style="left:1035.5px;top:831px;width:1px;height:108px;background:#414141"></div><div class="a" style="left:1053.7px;top:831px;width:1px;height:108px;background:#3c3c3c"></div><div class="a" style="left:1071.9px;top:831px;width:1px;height:108px;background:#414141"></div><div class="a" style="left:1090.1px;top:831px;width:1px;height:108px;background:#3c3c3c"></div><div class="a" style="left:1108.4px;top:831px;width:1px;height:108px;background:#414141"></div><div class="a" style="left:1126.6px;top:831px;width:1px;height:108px;background:#3c3c3c"></div><div class="a" style="left:1144.8px;top:831px;width:1px;height:108px;background:#414141"></div><div class="a" style="left:1163.0px;top:831px;width:1px;height:108px;background:#3c3c3c"></div><div class="a" style="left:1181.2px;top:831px;width:1px;height:108px;background:#414141"></div><div class="a" style="left:1199.5px;top:831px;width:1px;height:108px;background:#3c3c3c"></div><div class="a" style="left:1217.7px;top:831px;width:1px;height:108px;background:#414141"></div><div class="a" style="left:1235.9px;top:831px;width:1px;height:108px;background:#3c3c3c"></div><div class="a" style="left:1254.1px;top:831px;width:1px;height:108px;background:#414141"></div><div class="a" style="left:1272.3px;top:831px;width:1px;height:108px;background:#3c3c3c"></div><div class="a" style="left:1290.6px;top:831px;width:1px;height:108px;background:#414141"></div><div class="a" style="left:1308.8px;top:831px;width:1px;height:108px;background:#3c3c3c"></div><div class="a" style="left:1327.0px;top:831px;width:1px;height:108px;background:#414141"></div><div class="a" style="left:1345.2px;top:831px;width:1px;height:108px;background:#3c3c3c"></div><div class="a" style="left:1363.4px;top:831px;width:1px;height:108px;background:#414141"></div><div class="a" style="left:1381.7px;top:831px;width:1px;height:108px;background:#3c3c3c"></div><div class="a" style="left:1399.9px;top:831px;width:1px;height:108px;background:#414141"></div><div class="a" style="left:1418.1px;top:831px;width:1px;height:108px;background:#3c3c3c"></div><div class="a" style="left:1436.3px;top:831px;width:1px;height:108px;background:#414141"></div>
<div class="a " style="left:324.4px;top:831px;width:1px;height:108px;background:#1e1e1e"></div>
<div class="a " style="left:324.9px;top:936px;width:364.4px;height:3px;background:#3e3e3e"></div>
<div class="a " style="left:324.9px;top:936px;width:36.44px;height:3px;background:#333"></div>
<div class="a " style="left:574.836px;top:831px;width:3px;height:108px;background:#5bc44a"></div>
<div class="a " style="left:9px;top:939px;width:1452px;height:18px;background:#6e6e6e"></div>
<div class="a " style="left:12px;top:940px;width:1445px;height:13px;border-radius:7px;background:linear-gradient(#a5a5a5,#909090);border:1px solid #4a4a4a"></div>
<div class="a" style="left:14px;top:942px;width:9px;height:9px;border-radius:5px;background:#6a6a6a"></div>
<div class="a" style="left:1446px;top:942px;width:9px;height:9px;border-radius:5px;background:#6a6a6a"></div>
<div class="t" style="left:37.1px;top:941.75px;font-size:11px;transform:translateX(-50%);-webkit-text-stroke:0.25px currentColor">-80</div><div class="t" style="left:73.3px;top:941.75px;font-size:11px;transform:translateX(-50%);-webkit-text-stroke:0.25px currentColor">-70</div><div class="t" style="left:109.5px;top:941.75px;font-size:11px;transform:translateX(-50%);-webkit-text-stroke:0.25px currentColor">-60</div><div class="t" style="left:145.7px;top:941.75px;font-size:11px;transform:translateX(-50%);-webkit-text-stroke:0.25px currentColor">-50</div><div class="t" style="left:181.8px;top:941.75px;font-size:11px;transform:translateX(-50%);-webkit-text-stroke:0.25px currentColor">-40</div><div class="t" style="left:218.0px;top:941.75px;font-size:11px;transform:translateX(-50%);-webkit-text-stroke:0.25px currentColor">-30</div><div class="t" style="left:254.2px;top:941.75px;font-size:11px;transform:translateX(-50%);-webkit-text-stroke:0.25px currentColor">-20</div><div class="t" style="left:290.3px;top:941.75px;font-size:11px;transform:translateX(-50%);-webkit-text-stroke:0.25px currentColor">-10</div><div class="t" style="left:326.5px;top:941.75px;font-size:11px;transform:translateX(-50%);-webkit-text-stroke:0.25px currentColor">0</div><div class="t" style="left:362.7px;top:941.75px;font-size:11px;transform:translateX(-50%);-webkit-text-stroke:0.25px currentColor">10</div><div class="t" style="left:398.8px;top:941.75px;font-size:11px;transform:translateX(-50%);-webkit-text-stroke:0.25px currentColor">20</div><div class="t" style="left:435.0px;top:941.75px;font-size:11px;transform:translateX(-50%);-webkit-text-stroke:0.25px currentColor">30</div><div class="t" style="left:471.2px;top:941.75px;font-size:11px;transform:translateX(-50%);-webkit-text-stroke:0.25px currentColor">40</div><div class="t" style="left:507.4px;top:941.75px;font-size:11px;transform:translateX(-50%);-webkit-text-stroke:0.25px currentColor">50</div><div class="t" style="left:543.5px;top:941.75px;font-size:11px;transform:translateX(-50%);-webkit-text-stroke:0.25px currentColor">60</div><div class="t" style="left:579.7px;top:941.75px;font-size:11px;transform:translateX(-50%);-webkit-text-stroke:0.25px currentColor">70</div><div class="t" style="left:615.9px;top:941.75px;font-size:11px;transform:translateX(-50%);-webkit-text-stroke:0.25px currentColor">80</div><div class="t" style="left:652.0px;top:941.75px;font-size:11px;transform:translateX(-50%);-webkit-text-stroke:0.25px currentColor">90</div><div class="t" style="left:688.2px;top:941.75px;font-size:11px;transform:translateX(-50%);-webkit-text-stroke:0.25px currentColor">100</div><div class="t" style="left:724.4px;top:941.75px;font-size:11px;transform:translateX(-50%);-webkit-text-stroke:0.25px currentColor">110</div><div class="t" style="left:760.5px;top:941.75px;font-size:11px;transform:translateX(-50%);-webkit-text-stroke:0.25px currentColor">120</div><div class="t" style="left:796.7px;top:941.75px;font-size:11px;transform:translateX(-50%);-webkit-text-stroke:0.25px currentColor">130</div><div class="t" style="left:832.9px;top:941.75px;font-size:11px;transform:translateX(-50%);-webkit-text-stroke:0.25px currentColor">140</div><div class="t" style="left:869.0px;top:941.75px;font-size:11px;transform:translateX(-50%);-webkit-text-stroke:0.25px currentColor">150</div><div class="t" style="left:905.2px;top:941.75px;font-size:11px;transform:translateX(-50%);-webkit-text-stroke:0.25px currentColor">160</div><div class="t" style="left:941.4px;top:941.75px;font-size:11px;transform:translateX(-50%);-webkit-text-stroke:0.25px currentColor">170</div><div class="t" style="left:977.6px;top:941.75px;font-size:11px;transform:translateX(-50%);-webkit-text-stroke:0.25px currentColor">180</div><div class="t" style="left:1013.7px;top:941.75px;font-size:11px;transform:translateX(-50%);-webkit-text-stroke:0.25px currentColor">190</div><div class="t" style="left:1049.9px;top:941.75px;font-size:11px;transform:translateX(-50%);-webkit-text-stroke:0.25px currentColor">200</div><div class="t" style="left:1086.1px;top:941.75px;font-size:11px;transform:translateX(-50%);-webkit-text-stroke:0.25px currentColor">210</div><div class="t" style="left:1122.2px;top:941.75px;font-size:11px;transform:translateX(-50%);-webkit-text-stroke:0.25px currentColor">220</div><div class="t" style="left:1158.4px;top:941.75px;font-size:11px;transform:translateX(-50%);-webkit-text-stroke:0.25px currentColor">230</div><div class="t" style="left:1194.6px;top:941.75px;font-size:11px;transform:translateX(-50%);-webkit-text-stroke:0.25px currentColor">240</div><div class="t" style="left:1230.8px;top:941.75px;font-size:11px;transform:translateX(-50%);-webkit-text-stroke:0.25px currentColor">250</div><div class="t" style="left:1266.9px;top:941.75px;font-size:11px;transform:translateX(-50%);-webkit-text-stroke:0.25px currentColor">260</div><div class="t" style="left:1303.1px;top:941.75px;font-size:11px;transform:translateX(-50%);-webkit-text-stroke:0.25px currentColor">270</div><div class="t" style="left:1339.3px;top:941.75px;font-size:11px;transform:translateX(-50%);-webkit-text-stroke:0.25px currentColor">280</div><div class="t" style="left:1375.4px;top:941.75px;font-size:11px;transform:translateX(-50%);-webkit-text-stroke:0.25px currentColor">290</div><div class="t" style="left:1411.6px;top:941.75px;font-size:11px;transform:translateX(-50%);-webkit-text-stroke:0.25px currentColor">300</div>
<div class="a " style="left:9px;top:957px;width:1452px;height:25px;background:#727272;border-top:1px solid #666"></div>
<svg class="a" style="left:9px;top:970px;" width="12" height="12" viewBox="0 0 12 12"><path d="M0 1L11 12M0 5L7 12M0 9L3 12" stroke="#2a2a2a" stroke-width="1"/><path d="M0 2L10 12M0 6L6 12M0 10L2 12" stroke="#9a9a9a" stroke-width="1"/></svg>
<div class="a drk" style="left:18px;top:961px;width:30px;height:20px;border-radius:4px"></div>
<svg class="a" style="left:22px;top:963px;" width="15" height="15" viewBox="0 0 15 15"><circle cx="7.5" cy="7.5" r="6.5" fill="#f0f0f0" stroke="#111" stroke-width="1.2"/><path d="M7.5 3.5L5 7.5L8.5 10" fill="none" stroke="#6a1a1a" stroke-width="1.2"/></svg>
<svg class="a" style="left:37px;top:965px;" width="8" height="12" viewBox="0 0 8 12"><path d="M4 0.5L7.5 5H0.5Z M4 11.5L7.5 7H0.5Z" fill="#c8c8c8"/></svg>
<div class="t " style="left:61px;top:966.75px;font-size:11px;color:#000;-webkit-text-stroke:0.25px currentColor;">View</div>
<div class="t " style="left:105px;top:966.75px;font-size:11px;color:#000;-webkit-text-stroke:0.25px currentColor;">Marker</div>
<div class="t " style="left:160px;top:966.75px;font-size:11px;color:#000;-webkit-text-stroke:0.25px currentColor;">Frame</div>
<div class="t " style="left:212px;top:966.75px;font-size:11px;color:#000;-webkit-text-stroke:0.25px currentColor;">Playback</div>
<div class="a tool" style="left:270px;top:961px;width:20px;height:19px;border-radius:4px 0 0 4px"></div>
<div class="a tool" style="left:289px;top:961px;width:21px;height:19px;border-radius:0 4px 4px 0"></div>
<svg class="a" style="left:273px;top:963px;" width="14" height="14" viewBox="0 0 14 14"><circle cx="7" cy="7" r="6" fill="#f4f4f4" stroke="#222" stroke-width="1"/><path d="M7 7H12.5A5.5 5.5 0 0 0 7 1.5Z" fill="#e87a1a"/><path d="M7 7L3 10" stroke="#c02020" stroke-width="1"/></svg>
<svg class="a" style="left:293px;top:963px;" width="13" height="15" viewBox="0 0 13 15"><path d="M3.5 7V4.5A3 3 0 0 1 9.5 4.5V7" fill="none" stroke="#222" stroke-width="2.6"/><path d="M3.5 7V4.5A3 3 0 0 1 9.5 4.5V7" fill="none" stroke="#ddd" stroke-width="1"/><rect x="2" y="7" width="9" height="7" fill="#eee" stroke="#222" stroke-width="1"/></svg>
<div class="a " style="left:316px;top:961px;width:226px;height:19px;border-radius:10px;background:linear-gradient(#9d9d9d,#b4b4b4);border:1px solid #1a1a1a"></div>
<div class="a " style="left:431px;top:961px;width:1px;height:19px;background:#1a1a1a"></div>
<svg class="a" style="left:320px;top:966.5px;" width="5" height="8" viewBox="0 0 5 8"><path d="M4 0.5V7.5L0.5 4Z" fill="#6a6a6a"/></svg>
<svg class="a" style="left:422px;top:966.5px;" width="5" height="8" viewBox="0 0 5 8"><path d="M1 0.5V7.5L4.5 4Z" fill="#6a6a6a"/></svg>
<svg class="a" style="left:436px;top:966.5px;" width="5" height="8" viewBox="0 0 5 8"><path d="M4 0.5V7.5L0.5 4Z" fill="#6a6a6a"/></svg>
<svg class="a" style="left:533px;top:966.5px;" width="5" height="8" viewBox="0 0 5 8"><path d="M1 0.5V7.5L4.5 4Z" fill="#6a6a6a"/></svg>
<div class="t " style="left:331px;top:965.75px;font-size:11px;color:#000;-webkit-text-stroke:0.25px currentColor;">Start:</div>
<div class="t " style="right:1504px;top:965.75px;font-size:11px;color:#000;-webkit-text-stroke:0.25px currentColor;">10</div>
<div class="t " style="left:447px;top:965.75px;font-size:11px;color:#000;-webkit-text-stroke:0.25px currentColor;">End:</div>
<div class="t " style="right:1394px;top:965.75px;font-size:11px;color:#000;-webkit-text-stroke:0.25px currentColor;">100</div>
<div class="a " style="left:549px;top:961px;width:89px;height:19px;border-radius:10px;background:linear-gradient(#9d9d9d,#b4b4b4);border:1px solid #1a1a1a"></div>
<svg class="a" style="left:553px;top:966.5px;" width="5" height="8" viewBox="0 0 5 8"><path d="M4 0.5V7.5L0.5 4Z" fill="#6a6a6a"/></svg>
<svg class="a" style="left:629px;top:966.5px;" width="5" height="8" viewBox="0 0 5 8"><path d="M1 0.5V7.5L4.5 4Z" fill="#6a6a6a"/></svg>
<div class="t " style="right:1298px;top:965.75px;font-size:11px;color:#000;-webkit-text-stroke:0.25px currentColor;">69</div>
<div class="a tool" style="left:655px;top:961px;width:119px;height:19px;border-radius:4px"></div>
<svg class="a" style="left:656.5px;top:962.5px;" width="17" height="17" viewBox="0 0 17 17"><g transform="translate(0.5 0) scale(1.06)"><path d="M2 2.5H4V13.5H2ZM14 2.5L9 8L14 13.5ZM9 2.5L4 8L9 13.5Z" fill="#f4f4f4" stroke="#111" stroke-width="1.2" stroke-linejoin="round"/></g></svg>
<div class="a " style="left:674.8px;top:961px;width:1px;height:19px;background:#1a1a1a"></div>
<svg class="a" style="left:676.3px;top:962.5px;" width="17" height="17" viewBox="0 0 17 17"><g transform="translate(0.5 0) scale(1.06)"><path d="M14 2.5L8.5 8L14 13.5ZM8.5 2.5L3 8L8.5 13.5Z" fill="#f4f4f4" stroke="#111" stroke-width="1.2" stroke-linejoin="round"/></g></svg>
<div class="a " style="left:694.6px;top:961px;width:1px;height:19px;background:#1a1a1a"></div>
<svg class="a" style="left:696.1px;top:962.5px;" width="17" height="17" viewBox="0 0 17 17"><g transform="translate(0.5 0) scale(1.06)"><path d="M13 2L3.5 8L13 14Z" fill="#f4f4f4" stroke="#111" stroke-width="1.2" stroke-linejoin="round"/></g></svg>
<div class="a " style="left:714.4px;top:961px;width:1px;height:19px;background:#1a1a1a"></div>
<svg class="a" style="left:715.9px;top:962.5px;" width="17" height="17" viewBox="0 0 17 17"><g transform="translate(0.5 0) scale(1.06)"><path d="M3.5 2L13 8L3.5 14Z" fill="#f4f4f4" stroke="#111" stroke-width="1.2" stroke-linejoin="round"/></g></svg>
<div class="a " style="left:734.2px;top:961px;width:1px;height:19px;background:#1a1a1a"></div>
<svg class="a" style="left:735.7px;top:962.5px;" width="17" height="17" viewBox="0 0 17 17"><g transform="translate(0.5 0) scale(1.06)"><path d="M2 2.5L7.5 8L2 13.5ZM7.5 2.5L13 8L7.5 13.5Z" fill="#f4f4f4" stroke="#111" stroke-width="1.2" stroke-linejoin="round"/></g></svg>
<div class="a " style="left:754.0px;top:961px;width:1px;height:19px;background:#1a1a1a"></div>
<svg class="a" style="left:755.5px;top:962.5px;" width="17" height="17" viewBox="0 0 17 17"><g transform="translate(0.5 0) scale(1.06)"><path d="M12 2.5H14V13.5H12ZM2 2.5L7 8L2 13.5ZM7 2.5L12 8L7 13.5Z" fill="#f4f4f4" stroke="#111" stroke-width="1.2" stroke-linejoin="round"/></g></svg>
<div class="a drk" style="left:779px;top:961px;width:115px;height:19px;border-radius:4px"></div>
<div class="t " style="left:787px;top:966.75px;font-size:11px;color:#fff;">No Sync</div>
<svg class="a" style="left:883px;top:964.5px;" width="8" height="12" viewBox="0 0 8 12"><path d="M4 0.5L7.5 5H0.5Z M4 11.5L7.5 7H0.5Z" fill="#c8c8c8"/></svg>
<div class="a tool" style="left:910px;top:961px;width:20px;height:19px;border-radius:4px"></div>
<svg class="a" style="left:914px;top:965px;" width="12" height="12" viewBox="0 0 12 12"><circle cx="6" cy="6" r="5" fill="#e84020" stroke="#4a1a10" stroke-width="1"/></svg>
<div class="a " style="left:935px;top:961px;width:131px;height:19px;border-radius:4px 0 0 4px;background:linear-gradient(#a2a2a2,#b4b4b4);border:1px solid #1a1a1a"></div>
<svg class="a" style="left:941px;top:962px;" width="16" height="17" viewBox="0 0 16 17"><circle cx="5" cy="13" r="2.8" fill="none" stroke="#111" stroke-width="2.8"/><path d="M5 10V2H7.5M5 5H7" fill="none" stroke="#111" stroke-width="2.8"/><circle cx="5" cy="13" r="2.8" fill="none" stroke="#e8dca0" stroke-width="1.3"/><path d="M5 10V2H7.5M5 5H7" fill="none" stroke="#e8dca0" stroke-width="1.3"/></svg>
<svg class="a" style="left:946px;top:964px;" width="16" height="16" viewBox="0 0 16 16"><circle cx="4" cy="12" r="2.8" fill="none" stroke="#111" stroke-width="2.8"/><path d="M6 10L13 3M10.5 5.5L12.5 7.5M12 4L14 6" fill="none" stroke="#111" stroke-width="2.8"/><circle cx="4" cy="12" r="2.8" fill="none" stroke="#f0f0f0" stroke-width="1.3"/><path d="M6 10L13 3M10.5 5.5L12.5 7.5M12 4L14 6" fill="none" stroke="#f0f0f0" stroke-width="1.3"/></svg>
<div class="a tool" style="left:1065px;top:961px;width:21px;height:19px;border-radius:0"></div>
<div class="a tool" style="left:1085px;top:961px;width:21px;height:19px;border-radius:0 4px 4px 0"></div>
<svg class="a" style="left:1067px;top:963px;" width="16" height="16" viewBox="0 0 16 16"><circle cx="4" cy="12" r="2.8" fill="none" stroke="#111" stroke-width="2.8"/><path d="M6 10L13 3M10.5 5.5L12.5 7.5M12 4L14 6" fill="none" stroke="#111" stroke-width="2.8"/><circle cx="4" cy="12" r="2.8" fill="none" stroke="#f0f0f0" stroke-width="1.3"/><path d="M6 10L13 3M10.5 5.5L12.5 7.5M12 4L14 6" fill="none" stroke="#f0f0f0" stroke-width="1.3"/></svg>
<svg class="a" style="left:1087px;top:963px;" width="16" height="16" viewBox="0 0 16 16"><circle cx="4" cy="12" r="2.8" fill="none" stroke="#111" stroke-width="2.8"/><path d="M6 10L13 3M10.5 5.5L12.5 7.5M12 4L14 6" fill="none" stroke="#111" stroke-width="2.8"/><circle cx="4" cy="12" r="2.8" fill="none" stroke="#c8dcec" stroke-width="1.3"/><path d="M6 10L13 3M10.5 5.5L12.5 7.5M12 4L14 6" fill="none" stroke="#c8dcec" stroke-width="1.3"/><path d="M2 2L14 14" stroke="#d02a2a" stroke-width="1.6"/></svg>
<div class="a " style="left:1462px;top:27px;width:448px;height:25px;background:#727272"></div>
<div class="a " style="left:1462px;top:52px;width:448px;height:140px;background:#717171"></div>
<div class="a " style="left:1462px;top:51px;width:448px;height:20px;background:#6f6f6f"></div>
<div class="a " style="left:1462px;top:71px;width:448px;height:20px;background:#757575"></div>
<div class="a " style="left:1462px;top:91px;width:448px;height:20px;background:#6f6f6f"></div>
<div class="a " style="left:1462px;top:111px;width:448px;height:20px;background:#757575"></div>
<div class="a " style="left:1462px;top:131px;width:448px;height:20px;background:#6f6f6f"></div>
<div class="a " style="left:1462px;top:151px;width:448px;height:20px;background:#757575"></div>
<div class="a " style="left:1462px;top:171px;width:448px;height:20px;background:#6f6f6f"></div>
<div class="a " style="left:1462px;top:51px;width:448px;height:1px;background:#666"></div>
<div class="a " style="left:1462px;top:192px;width:448px;height:1px;background:#000"></div>
<svg class="a" style="left:1898px;top:27px;" width="12" height="12" viewBox="0 0 12 12"><path d="M1 0L12 11M5 0L12 7M9 0L12 3" stroke="#2a2a2a" stroke-width="1"/><path d="M2 0L12 10M6 0L12 6M10 0L12 2" stroke="#9a9a9a" stroke-width="1"/></svg>
<svg class="a" style="left:1462px;top:180px;" width="12" height="12" viewBox="0 0 12 12"><path d="M0 1L11 12M0 5L7 12M0 9L3 12" stroke="#2a2a2a" stroke-width="1"/><path d="M0 2L10 12M0 6L6 12M0 10L2 12" stroke="#9a9a9a" stroke-width="1"/></svg>
<div class="a drk" style="left:1471px;top:30px;width:30px;height:20px;border-radius:4px"></div>
<svg class="a" style="left:1474px;top:32px;" width="16" height="16" viewBox="0 0 16 16"><rect x="1.5" y="1.5" width="7" height="3" rx="1" fill="#f0d080" stroke="#3a2a00" stroke-width="0.8"/><path d="M4 5V14H7M4 9H7" stroke="#ddd" stroke-width="1" fill="none"/><rect x="7" y="7.5" width="6" height="3" fill="#fff"/><rect x="7" y="12.5" width="6" height="3" fill="#fff"/></svg>
<svg class="a" style="left:1490px;top:34px;" width="8" height="12" viewBox="0 0 8 12"><path d="M4 0.5L7.5 5H0.5Z M4 11.5L7.5 7H0.5Z" fill="#c8c8c8"/></svg>
<div class="t " style="left:1514px;top:35.75px;font-size:11px;color:#000;-webkit-text-stroke:0.25px currentColor;">View</div>
<div class="t " style="left:1558px;top:35.75px;font-size:11px;color:#000;-webkit-text-stroke:0.25px currentColor;">Search</div>
<div class="a drk" style="left:1605px;top:30px;width:119px;height:20px;border-radius:4px"></div>
<div class="t " style="left:1613px;top:35.75px;font-size:11px;color:#fff;">All Scenes</div>
<svg class="a" style="left:1713px;top:34.0px;" width="8" height="12" viewBox="0 0 8 12"><path d="M4 0.5L7.5 5H0.5Z M4 11.5L7.5 7H0.5Z" fill="#c8c8c8"/></svg>
<div class="a " style="left:1730px;top:30px;width:110px;height:20px;border-radius:5px;background:linear-gradient(#9d9d9d,#b4b4b4);border:1px solid #1a1a1a"></div>
<svg class="a" style="left:1734px;top:32px;" width="16" height="16" viewBox="0 0 16 16"><circle cx="9.5" cy="6" r="4.5" fill="#dde4ee" stroke="#111" stroke-width="1.3"/><path d="M6.5 9L2 14" stroke="#111" stroke-width="3"/><path d="M6.5 9L2.3 13.7" stroke="#d8a050" stroke-width="1.5"/></svg>
<div class="a " style="left:1489px;top:51px;width:1px;height:130px;background:#3e3e3e"></div>
<div class="a " style="left:1834px;top:52px;width:1px;height:140px;background:#666"></div>
<div class="a " style="left:1854px;top:52px;width:1px;height:140px;background:#666"></div>
<div class="a " style="left:1874px;top:52px;width:1px;height:140px;background:#666"></div>
<div class="a " style="left:1894px;top:58px;width:13px;height:130px;border-radius:6px;background:#636363;border:1px solid #5a5a5a"></div>
<div class="a " style="left:1895px;top:81px;width:11px;height:67px;border-radius:6px;background:linear-gradient(90deg,#8e8e8e,#7e7e7e)"></div>
<svg class="a" style="left:1503px;top:52px;" width="18" height="18" viewBox="0 0 18 18"><circle cx="9" cy="9" r="8.3" fill="#b8c0cc" opacity="0.55"/><circle cx="9" cy="9" r="6.6" fill="#8ab0d8" stroke="#0a1a3a" stroke-width="1.2"/><path d="M4 6C6 4.5 8 5 7 7.5C6 9.5 8 10 9 8.5C10 7 12 6 14 7C13.5 10 12 12 10.5 13C10 11 8.5 12 7 13C5 12 3.5 10 3.2 8Z" fill="#3a7a2a"/><path d="M7 14A6 6 0 0 0 14 11" fill="none" stroke="#5a8ad0" stroke-width="1.5"/><circle cx="9" cy="9" r="6.6" fill="none" stroke="#0a1a3a" stroke-width="1.2"/></svg>
<div class="t " style="left:1523px;top:56.75px;font-size:11px;color:#000;-webkit-text-stroke:0.25px currentColor;">World.001</div>
<div class="a " style="left:1490px;top:81px;width:12px;height:1px;background:#3e3e3e"></div>
<svg class="a" style="left:1484px;top:75px;" width="12" height="12" viewBox="0 0 12 12"><circle cx="6" cy="6" r="4.6" fill="#f0f0f0" stroke="#1a1a1a" stroke-width="1.3"/><path d="M6 3.2V8.8M3.2 6H8.8" stroke="#111" stroke-width="1.4"/></svg>
<svg class="a" style="left:1505px;top:74px;" width="14" height="14" viewBox="0 0 14 14"><path d="M1.5 1.5H12.5L7 13Z" fill="none" stroke="#1a0a00" stroke-width="3.2" stroke-linejoin="round"/><path d="M1.5 1.5H12.5L7 13Z" fill="none" stroke="#f0a040" stroke-width="1.6" stroke-linejoin="round"/><circle cx="1.8" cy="1.8" r="1.4" fill="#fff3d0"/><circle cx="12.2" cy="1.8" r="1.4" fill="#fff3d0"/><circle cx="7" cy="12.7" r="1.4" fill="#fff3d0"/></svg>
<div class="t " style="left:1523px;top:76.75px;font-size:11px;color:#000;-webkit-text-stroke:0.25px currentColor;">Assem1 - glass part-1</div>
<div class="a " style="left:1640px;top:76px;width:2px;height:10px;background:#444"></div>
<svg class="a" style="left:1652px;top:74px;" width="14" height="14" viewBox="0 0 14 14"><path d="M1.5 1.5H12.5L7 12.5Z" fill="none" stroke="#333" stroke-width="1"/><circle cx="1.5" cy="1.5" r="1.4" fill="#eee" stroke="#222" stroke-width="0.8"/><circle cx="12.5" cy="1.5" r="1.4" fill="#eee" stroke="#222" stroke-width="0.8"/><circle cx="7" cy="12.5" r="1.4" fill="#eee" stroke="#222" stroke-width="0.8"/></svg>
<svg class="a" style="left:1837px;top:75px;" width="15" height="12" viewBox="0 0 15 12"><path d="M1 6C4 1.5 11 1.5 14 6C11 10.5 4 10.5 1 6Z" fill="#f4f4f4" stroke="#111" stroke-width="1"/><circle cx="7.5" cy="5.5" r="2.4" fill="#555"/><circle cx="7" cy="4.8" r="0.8" fill="#111"/></svg>
<svg class="a" style="left:1860px;top:74px;" width="12" height="15" viewBox="0 0 12 15"><path d="M1.5 1V12L4.5 9.5L6.8 14L9 13L6.8 8.5H10.5Z" fill="#f4f4f4" stroke="#111" stroke-width="1" stroke-linejoin="round"/></svg>
<svg class="a" style="left:1877px;top:75px;" width="14" height="13" viewBox="0 0 14 13"><rect x="1" y="3" width="12" height="9" fill="#eee" stroke="#111" stroke-width="1"/><rect x="2" y="1" width="4" height="2" fill="#eee" stroke="#111" stroke-width="0.8"/><circle cx="7.5" cy="7.5" r="2.6" fill="#6a5a5a" stroke="#111" stroke-width="1"/><rect x="9.5" y="4" width="2.5" height="1.4" fill="#222"/></svg>
<div class="a " style="left:1490px;top:101px;width:12px;height:1px;background:#3e3e3e"></div>
<svg class="a" style="left:1484px;top:95px;" width="12" height="12" viewBox="0 0 12 12"><circle cx="6" cy="6" r="4.6" fill="#f0f0f0" stroke="#1a1a1a" stroke-width="1.3"/><path d="M6 3.2V8.8M3.2 6H8.8" stroke="#111" stroke-width="1.4"/></svg>
<svg class="a" style="left:1505px;top:94px;" width="14" height="14" viewBox="0 0 14 14"><path d="M1.5 1.5H12.5L7 13Z" fill="none" stroke="#1a0a00" stroke-width="3.2" stroke-linejoin="round"/><path d="M1.5 1.5H12.5L7 13Z" fill="none" stroke="#f0a040" stroke-width="1.6" stroke-linejoin="round"/><circle cx="1.8" cy="1.8" r="1.4" fill="#fff3d0"/><circle cx="12.2" cy="1.8" r="1.4" fill="#fff3d0"/><circle cx="7" cy="12.7" r="1.4" fill="#fff3d0"/></svg>
<div class="t " style="left:1523px;top:96.75px;font-size:11px;color:#000;-webkit-text-stroke:0.25px currentColor;">Assem1 - steel case part-1</div>
<div class="a " style="left:1664.5px;top:96px;width:2px;height:10px;background:#444"></div>
<svg class="a" style="left:1676.5px;top:94px;" width="14" height="14" viewBox="0 0 14 14"><path d="M1.5 1.5H12.5L7 12.5Z" fill="none" stroke="#333" stroke-width="1"/><circle cx="1.5" cy="1.5" r="1.4" fill="#eee" stroke="#222" stroke-width="0.8"/><circle cx="12.5" cy="1.5" r="1.4" fill="#eee" stroke="#222" stroke-width="0.8"/><circle cx="7" cy="12.5" r="1.4" fill="#eee" stroke="#222" stroke-width="0.8"/></svg>
<svg class="a" style="left:1837px;top:95px;" width="15" height="12" viewBox="0 0 15 12"><path d="M1 6C4 1.5 11 1.5 14 6C11 10.5 4 10.5 1 6Z" fill="#f4f4f4" stroke="#111" stroke-width="1"/><circle cx="7.5" cy="5.5" r="2.4" fill="#555"/><circle cx="7" cy="4.8" r="0.8" fill="#111"/></svg>
<svg class="a" style="left:1860px;top:94px;" width="12" height="15" viewBox="0 0 12 15"><path d="M1.5 1V12L4.5 9.5L6.8 14L9 13L6.8 8.5H10.5Z" fill="#f4f4f4" stroke="#111" stroke-width="1" stroke-linejoin="round"/></svg>
<svg class="a" style="left:1877px;top:95px;" width="14" height="13" viewBox="0 0 14 13"><rect x="1" y="3" width="12" height="9" fill="#eee" stroke="#111" stroke-width="1"/><rect x="2" y="1" width="4" height="2" fill="#eee" stroke="#111" stroke-width="0.8"/><circle cx="7.5" cy="7.5" r="2.6" fill="#6a5a5a" stroke="#111" stroke-width="1"/><rect x="9.5" y="4" width="2.5" height="1.4" fill="#222"/></svg>
<div class="a " style="left:1490px;top:121px;width:12px;height:1px;background:#3e3e3e"></div>
<svg class="a" style="left:1484px;top:115px;" width="12" height="12" viewBox="0 0 12 12"><circle cx="6" cy="6" r="4.6" fill="#f0f0f0" stroke="#1a1a1a" stroke-width="1.3"/><path d="M6 3.2V8.8M3.2 6H8.8" stroke="#111" stroke-width="1.4"/></svg>
<svg class="a" style="left:1505px;top:114px;" width="14" height="14" viewBox="0 0 14 14"><path d="M1.5 1.5H12.5L7 13Z" fill="none" stroke="#1a0a00" stroke-width="3.2" stroke-linejoin="round"/><path d="M1.5 1.5H12.5L7 13Z" fill="none" stroke="#f0a040" stroke-width="1.6" stroke-linejoin="round"/><circle cx="1.8" cy="1.8" r="1.4" fill="#fff3d0"/><circle cx="12.2" cy="1.8" r="1.4" fill="#fff3d0"/><circle cx="7" cy="12.7" r="1.4" fill="#fff3d0"/></svg>
<div class="t " style="left:1523px;top:116.75px;font-size:11px;color:#000;-webkit-text-stroke:0.25px currentColor;">Assem1 - wooden case part-1</div>
<div class="a " style="left:1680px;top:116px;width:2px;height:10px;background:#444"></div>
<svg class="a" style="left:1692px;top:114px;" width="14" height="14" viewBox="0 0 14 14"><path d="M1.5 1.5H12.5L7 12.5Z" fill="none" stroke="#333" stroke-width="1"/><circle cx="1.5" cy="1.5" r="1.4" fill="#eee" stroke="#222" stroke-width="0.8"/><circle cx="12.5" cy="1.5" r="1.4" fill="#eee" stroke="#222" stroke-width="0.8"/><circle cx="7" cy="12.5" r="1.4" fill="#eee" stroke="#222" stroke-width="0.8"/></svg>
<svg class="a" style="left:1837px;top:115px;" width="15" height="12" viewBox="0 0 15 12"><path d="M1 6C4 1.5 11 1.5 14 6C11 10.5 4 10.5 1 6Z" fill="#f4f4f4" stroke="#111" stroke-width="1"/><circle cx="7.5" cy="5.5" r="2.4" fill="#555"/><circle cx="7" cy="4.8" r="0.8" fill="#111"/></svg>
<svg class="a" style="left:1860px;top:114px;" width="12" height="15" viewBox="0 0 12 15"><path d="M1.5 1V12L4.5 9.5L6.8 14L9 13L6.8 8.5H10.5Z" fill="#f4f4f4" stroke="#111" stroke-width="1" stroke-linejoin="round"/></svg>
<svg class="a" style="left:1877px;top:115px;" width="14" height="13" viewBox="0 0 14 13"><rect x="1" y="3" width="12" height="9" fill="#eee" stroke="#111" stroke-width="1"/><rect x="2" y="1" width="4" height="2" fill="#eee" stroke="#111" stroke-width="0.8"/><circle cx="7.5" cy="7.5" r="2.6" fill="#6a5a5a" stroke="#111" stroke-width="1"/><rect x="9.5" y="4" width="2.5" height="1.4" fill="#222"/></svg>
<div class="a " style="left:1490px;top:141px;width:12px;height:1px;background:#3e3e3e"></div>
<svg class="a" style="left:1484px;top:135px;" width="12" height="12" viewBox="0 0 12 12"><circle cx="6" cy="6" r="4.6" fill="#f0f0f0" stroke="#1a1a1a" stroke-width="1.3"/><path d="M6 3.2V8.8M3.2 6H8.8" stroke="#111" stroke-width="1.4"/></svg>
<svg class="a" style="left:1504px;top:133px;" width="16" height="16" viewBox="0 0 16 16"><circle cx="4.5" cy="4.5" r="3.6" fill="#f0a040" stroke="#2a1000" stroke-width="1"/><circle cx="10.5" cy="4.5" r="3.6" fill="#f0a040" stroke="#2a1000" stroke-width="1"/><circle cx="4.5" cy="4.5" r="1.4" fill="#5a2a00"/><circle cx="10.5" cy="4.5" r="1.4" fill="#5a2a00"/><rect x="2" y="8.5" width="10" height="5" fill="#f0a040" stroke="#2a1000" stroke-width="1"/><path d="M12 10L15 9V13.5L12 12.5Z" fill="#f0a040" stroke="#2a1000" stroke-width="0.8"/></svg>
<div class="t " style="left:1523px;top:136.75px;font-size:11px;color:#000;-webkit-text-stroke:0.25px currentColor;">Camera</div>
<div class="a " style="left:1571.5px;top:136px;width:2px;height:10px;background:#444"></div>
<svg class="a" style="left:1581.5px;top:133px;" width="17" height="17" viewBox="0 0 17 17"><circle cx="8.5" cy="8.5" r="8" fill="#9a9a9a" opacity="0.8"/><circle cx="6" cy="6" r="2.6" fill="none" stroke="#c8c8c8" stroke-width="1"/><circle cx="11" cy="6" r="2.6" fill="none" stroke="#c8c8c8" stroke-width="1"/><rect x="4" y="9" width="8" height="4" fill="none" stroke="#c8c8c8" stroke-width="1"/></svg>
<svg class="a" style="left:1837px;top:135px;" width="15" height="12" viewBox="0 0 15 12"><path d="M1 6C4 1.5 11 1.5 14 6C11 10.5 4 10.5 1 6Z" fill="#f4f4f4" stroke="#111" stroke-width="1"/><circle cx="7.5" cy="5.5" r="2.4" fill="#555"/><circle cx="7" cy="4.8" r="0.8" fill="#111"/></svg>
<svg class="a" style="left:1860px;top:134px;" width="12" height="15" viewBox="0 0 12 15"><path d="M1.5 1V12L4.5 9.5L6.8 14L9 13L6.8 8.5H10.5Z" fill="#f4f4f4" stroke="#111" stroke-width="1" stroke-linejoin="round"/></svg>
<svg class="a" style="left:1877px;top:135px;" width="14" height="13" viewBox="0 0 14 13"><rect x="1" y="3" width="12" height="9" fill="#eee" stroke="#111" stroke-width="1"/><rect x="2" y="1" width="4" height="2" fill="#eee" stroke="#111" stroke-width="0.8"/><circle cx="7.5" cy="7.5" r="2.6" fill="#6a5a5a" stroke="#111" stroke-width="1"/><rect x="9.5" y="4" width="2.5" height="1.4" fill="#222"/></svg>
<div class="a " style="left:1490px;top:161px;width:12px;height:1px;background:#3e3e3e"></div>
<svg class="a" style="left:1484px;top:155px;" width="12" height="12" viewBox="0 0 12 12"><circle cx="6" cy="6" r="4.6" fill="#f0f0f0" stroke="#1a1a1a" stroke-width="1.3"/><path d="M6 3.2V8.8M3.2 6H8.8" stroke="#111" stroke-width="1.4"/></svg>
<svg class="a" style="left:1505px;top:154px;" width="14" height="14" viewBox="0 0 14 14"><path d="M1.5 1.5H12.5L7 13Z" fill="none" stroke="#1a0a00" stroke-width="3.2" stroke-linejoin="round"/><path d="M1.5 1.5H12.5L7 13Z" fill="none" stroke="#f0a040" stroke-width="1.6" stroke-linejoin="round"/><circle cx="1.8" cy="1.8" r="1.4" fill="#fff3d0"/><circle cx="12.2" cy="1.8" r="1.4" fill="#fff3d0"/><circle cx="7" cy="12.7" r="1.4" fill="#fff3d0"/></svg>
<div class="t " style="left:1523px;top:156.75px;font-size:11px;color:#000;-webkit-text-stroke:0.25px currentColor;">Circle</div>
<div class="a " style="left:1561.5px;top:156px;width:2px;height:10px;background:#444"></div>
<svg class="a" style="left:1573px;top:153px;" width="16" height="16" viewBox="0 0 16 16"><path d="M12 2C14 4 10 6 9 8C8 10 12 12 10 13H3M5 10.5L2.5 13L5 15.5" fill="none" stroke="#111" stroke-width="2.8"/><path d="M12 2C14 4 10 6 9 8C8 10 12 12 10 13H3M5 10.5L2.5 13L5 15.5" fill="none" stroke="#fff" stroke-width="1.2"/></svg>
<svg class="a" style="left:1594px;top:154px;" width="14" height="14" viewBox="0 0 14 14"><path d="M1.5 1.5H12.5L7 12.5Z" fill="none" stroke="#333" stroke-width="1"/><circle cx="1.5" cy="1.5" r="1.4" fill="#eee" stroke="#222" stroke-width="0.8"/><circle cx="12.5" cy="1.5" r="1.4" fill="#eee" stroke="#222" stroke-width="0.8"/><circle cx="7" cy="12.5" r="1.4" fill="#eee" stroke="#222" stroke-width="0.8"/></svg>
<svg class="a" style="left:1613px;top:153px;" width="16" height="16" viewBox="0 0 16 16"><path d="M2 14L9 7" stroke="#0a1a3a" stroke-width="3.6" stroke-linecap="round"/><path d="M2 14L9 7" stroke="#7aa2e8" stroke-width="1.8" stroke-linecap="round"/><circle cx="11" cy="5" r="3.6" fill="#7aa2e8" stroke="#0a1a3a" stroke-width="1"/><path d="M11 2L14 2L14 5" fill="#717171" stroke="none"/></svg>
<svg class="a" style="left:1837px;top:155px;" width="15" height="12" viewBox="0 0 15 12"><path d="M1 6C4 1.5 11 1.5 14 6C11 10.5 4 10.5 1 6Z" fill="#f4f4f4" stroke="#111" stroke-width="1"/><circle cx="7.5" cy="5.5" r="2.4" fill="#555"/><circle cx="7" cy="4.8" r="0.8" fill="#111"/></svg>
<svg class="a" style="left:1860px;top:154px;" width="12" height="15" viewBox="0 0 12 15"><path d="M1.5 1V12L4.5 9.5L6.8 14L9 13L6.8 8.5H10.5Z" fill="#f4f4f4" stroke="#111" stroke-width="1" stroke-linejoin="round"/></svg>
<svg class="a" style="left:1877px;top:155px;" width="14" height="13" viewBox="0 0 14 13"><rect x="1" y="3" width="12" height="9" fill="#eee" stroke="#111" stroke-width="1"/><rect x="2" y="1" width="4" height="2" fill="#eee" stroke="#111" stroke-width="0.8"/><circle cx="7.5" cy="7.5" r="2.6" fill="#6a5a5a" stroke="#111" stroke-width="1"/><rect x="9.5" y="4" width="2.5" height="1.4" fill="#222"/></svg>
<div class="a " style="left:1490px;top:181px;width:12px;height:1px;background:#3e3e3e"></div>
<svg class="a" style="left:1504px;top:173px;" width="16" height="16" viewBox="0 0 16 16"><path d="M8 1.5V8.5L2.5 13.5M8 8.5L13.5 13.5" fill="none" stroke="#2a1000" stroke-width="3.4" stroke-linecap="round"/><path d="M8 1.5V8.5L2.5 13.5M8 8.5L13.5 13.5" fill="none" stroke="#f0a040" stroke-width="1.8" stroke-linecap="round"/></svg>
<div class="t " style="left:1523px;top:176.75px;font-size:11px;color:#000;-webkit-text-stroke:0.25px currentColor;">Field</div>
<svg class="a" style="left:1837px;top:175px;" width="15" height="12" viewBox="0 0 15 12"><path d="M1 6C4 1.5 11 1.5 14 6C11 10.5 4 10.5 1 6Z" fill="#f4f4f4" stroke="#111" stroke-width="1"/><circle cx="7.5" cy="5.5" r="2.4" fill="#555"/><circle cx="7" cy="4.8" r="0.8" fill="#111"/></svg>
<svg class="a" style="left:1860px;top:174px;" width="12" height="15" viewBox="0 0 12 15"><path d="M1.5 1V12L4.5 9.5L6.8 14L9 13L6.8 8.5H10.5Z" fill="#f4f4f4" stroke="#111" stroke-width="1" stroke-linejoin="round"/></svg>
<svg class="a" style="left:1877px;top:175px;" width="14" height="13" viewBox="0 0 14 13"><rect x="1" y="3" width="12" height="9" fill="#eee" stroke="#111" stroke-width="1"/><rect x="2" y="1" width="4" height="2" fill="#eee" stroke="#111" stroke-width="0.8"/><circle cx="7.5" cy="7.5" r="2.6" fill="#6a5a5a" stroke="#111" stroke-width="1"/><rect x="9.5" y="4" width="2.5" height="1.4" fill="#222"/></svg>
<div class="a " style="left:1462px;top:193px;width:448px;height:789px;background:#727272"></div>
<div class="a " style="left:1462px;top:193px;width:448px;height:26px;background:#727272"></div>
<div class="a " style="left:1462px;top:218px;width:448px;height:1px;background:#666"></div>
<svg class="a" style="left:1898px;top:193px;" width="12" height="12" viewBox="0 0 12 12"><path d="M1 0L12 11M5 0L12 7M9 0L12 3" stroke="#2a2a2a" stroke-width="1"/><path d="M2 0L12 10M6 0L12 6M10 0L12 2" stroke="#9a9a9a" stroke-width="1"/></svg>
<svg class="a" style="left:1462px;top:970px;" width="12" height="12" viewBox="0 0 12 12"><path d="M0 1L11 12M0 5L7 12M0 9L3 12" stroke="#2a2a2a" stroke-width="1"/><path d="M0 2L10 12M0 6L6 12M0 10L2 12" stroke="#9a9a9a" stroke-width="1"/></svg>
<div class="a drk" style="left:1471px;top:196px;width:30px;height:20px;border-radius:4px"></div>
<svg class="a" style="left:1474px;top:199px;" width="14" height="14" viewBox="0 0 14 14"><rect x="1" y="1" width="11" height="4.5" rx="2" fill="#eee" stroke="#111" stroke-width="0.8"/><rect x="6.5" y="1.5" width="5" height="3.5" rx="1.5" fill="#999"/><rect x="1" y="8" width="11" height="4.5" rx="2" fill="#fff" stroke="#111" stroke-width="0.8"/><path d="M3 10.2L4.5 9V11.4ZM10 10.2L8.5 9V11.4Z" fill="#111"/></svg>
<svg class="a" style="left:1490px;top:200px;" width="8" height="12" viewBox="0 0 8 12"><path d="M4 0.5L7.5 5H0.5Z M4 11.5L7.5 7H0.5Z" fill="#c8c8c8"/></svg>
<div class="a drk" style="left:1508px;top:196px;width:241px;height:20px;border-radius:4px"></div>
<div class="a " style="left:1509px;top:197px;width:20px;height:18px;background:linear-gradient(#6a98e0,#4a78c8);border-radius:3px 0 0 3px"></div>
<div class="a " style="left:1528.05px;top:196px;width:1px;height:20px;background:#1a1a1a"></div>
<div class="a " style="left:1548.1px;top:196px;width:1px;height:20px;background:#1a1a1a"></div>
<div class="a " style="left:1568.15px;top:196px;width:1px;height:20px;background:#1a1a1a"></div>
<div class="a " style="left:1588.2px;top:196px;width:1px;height:20px;background:#1a1a1a"></div>
<div class="a " style="left:1608.25px;top:196px;width:1px;height:20px;background:#1a1a1a"></div>
<div class="a " style="left:1628.3px;top:196px;width:1px;height:20px;background:#1a1a1a"></div>
<div class="a " style="left:1648.35px;top:196px;width:1px;height:20px;background:#1a1a1a"></div>
<div class="a " style="left:1668.4px;top:196px;width:1px;height:20px;background:#1a1a1a"></div>
<div class="a " style="left:1688.45px;top:196px;width:1px;height:20px;background:#1a1a1a"></div>
<div class="a " style="left:1708.5px;top:196px;width:1px;height:20px;background:#1a1a1a"></div>
<div class="a " style="left:1728.55px;top:196px;width:1px;height:20px;background:#1a1a1a"></div>
<svg class="a" style="left:1510.0px;top:198px;" width="16" height="16" viewBox="0 0 16 16"><rect x="1.5" y="4" width="13" height="9" fill="#ddd" stroke="#112" stroke-width="1"/><rect x="2.5" y="2" width="3" height="2" fill="#ddd" stroke="#112" stroke-width="0.8"/><rect x="2.5" y="8" width="4" height="4" fill="#223"/><circle cx="9.5" cy="8.5" r="3" fill="#6a2a2a" stroke="#112" stroke-width="1"/></svg>
<svg class="a" style="left:1530.05px;top:198px;" width="16" height="16" viewBox="0 0 16 16"><rect x="4" y="4" width="10" height="10" fill="#bbb" stroke="#222" stroke-width="0.8"/><rect x="2" y="2" width="10" height="10" fill="#9ab" stroke="#222" stroke-width="0.8"/><path d="M6 10V4H9V7" stroke="#335" stroke-width="1.4" fill="none"/></svg>
<svg class="a" style="left:1550.1px;top:198px;" width="16" height="16" viewBox="0 0 16 16"><circle cx="4" cy="3" r="2.5" fill="#b8c86a" opacity="0.7"/><rect x="8" y="3" width="5" height="8" rx="2" fill="#7a9ad0"/><circle cx="6" cy="11" r="3.5" fill="#ccc"/></svg>
<svg class="a" style="left:1570.15px;top:198px;" width="16" height="16" viewBox="0 0 16 16"><circle cx="8" cy="8" r="6" fill="#4a7ab0" stroke="#112" stroke-width="1"/><path d="M4 6C6 5 6 8 5 10M9 4C11 5 13 7 12 9" stroke="#3a8a3a" stroke-width="2" fill="none"/></svg>
<svg class="a" style="left:1590.2px;top:198px;" width="16" height="16" viewBox="0 0 16 16"><path d="M8 1.5L14 4.3V11.7L8 14.5L2 11.7V4.3Z" fill="#d8964a" stroke="#2a1a0a" stroke-width="0.8"/><path d="M2 4.3L8 1.5L14 4.3L8 7Z" fill="#f0c07a"/><path d="M8 7L14 4.3V11.7L8 14.5Z" fill="#b8762a"/></svg>
<svg class="a" style="left:1610.25px;top:198px;" width="16" height="16" viewBox="0 0 16 16"><rect x="1.5" y="6.5" width="8" height="5" rx="2.5" fill="none" stroke="#111" stroke-width="2.6" transform="rotate(-40 5.5 9)"/><rect x="1.5" y="6.5" width="8" height="5" rx="2.5" fill="none" stroke="#ccc" stroke-width="1.1" transform="rotate(-40 5.5 9)"/><rect x="6.5" y="3.5" width="8" height="5" rx="2.5" fill="none" stroke="#111" stroke-width="2.6" transform="rotate(-40 10.5 6)"/><rect x="6.5" y="3.5" width="8" height="5" rx="2.5" fill="none" stroke="#ccc" stroke-width="1.1" transform="rotate(-40 10.5 6)"/></svg>
<svg class="a" style="left:1630.3px;top:198px;" width="16" height="16" viewBox="0 0 16 16"><path d="M2.5 13.5L9 7" stroke="#0a1a3a" stroke-width="3.6" stroke-linecap="round"/><path d="M2.5 13.5L9 7" stroke="#7aa2e8" stroke-width="1.8" stroke-linecap="round"/><circle cx="11" cy="5" r="3.6" fill="#7aa2e8" stroke="#0a1a3a" stroke-width="1"/><path d="M11 1.5L14.5 1.5L14.5 5" fill="#444"/></svg>
<svg class="a" style="left:1650.35px;top:198px;" width="16" height="16" viewBox="0 0 16 16"><path d="M2.5 2.5H13.5L8 13.5Z" fill="none" stroke="#c8c8c8" stroke-width="1"/><circle cx="2.5" cy="2.5" r="1.5" fill="#eee" stroke="#222" stroke-width="0.8"/><circle cx="13.5" cy="2.5" r="1.5" fill="#eee" stroke="#222" stroke-width="0.8"/><circle cx="8" cy="13.5" r="1.5" fill="#eee" stroke="#222" stroke-width="0.8"/></svg>
<svg class="a" style="left:1670.4px;top:198px;" width="16" height="16" viewBox="0 0 16 16"><circle cx="8" cy="8" r="6" fill="#7a6a6a" stroke="#111" stroke-width="1"/><path d="M3 5A6 6 0 0 1 13 5" fill="#c8b8b8" opacity="0.6"/></svg>
<svg class="a" style="left:1690.45px;top:198px;" width="16" height="16" viewBox="0 0 16 16"><rect x="2" y="2" width="12" height="12" fill="#eee" stroke="#111" stroke-width="1"/><path d="M2 2h3v3H2zM8 2h3v3H8zM5 5h3v3H5zM11 5h3v3h-3zM2 8h3v3H2zM8 8h3v3H8zM5 11h3v3H5zM11 11h3v3h-3z" fill="#a03030"/></svg>
<svg class="a" style="left:1710.5px;top:198px;" width="16" height="16" viewBox="0 0 16 16"><path d="M5 1V9M1 5H9M11 7V15M7 11H15M12 1V5M10 3H14" stroke="#e8e0a0" stroke-width="1.2"/></svg>
<svg class="a" style="left:1730.55px;top:198px;" width="16" height="16" viewBox="0 0 16 16"><path d="M2 9L6 13L14 3" fill="none" stroke="#3a6ac0" stroke-width="2.5"/><circle cx="11" cy="4" r="3" fill="#ccc" stroke="#222" stroke-width="0.8"/></svg>
<div class="a " style="left:1894px;top:225px;width:13px;height:753px;border-radius:6px;background:#636363;border:1px solid #555"></div>
<div class="a " style="left:1895px;top:332px;width:11px;height:645px;border-radius:6px;background:linear-gradient(90deg,#969696,#868686);border:1px solid #4e4e4e"></div>
<div class="a" style="left:1462px;top:219px;width:448px;height:20px;overflow:hidden"><div class="t" style="left:16px;top:-3.3px;font-size:11px">Feature Set:</div><div class="a drk" style="left:150px;top:-9px;width:274px;height:20px;border-radius:4px"></div><div class="t" style="left:158px;top:-3.3px;font-size:11px;color:#fff">Supported</div></div>
<svg class="a" style="left:1877px;top:219px;" width="8" height="6" viewBox="0 0 8 6"><path d="M0.5 0.5H7.5L4 5Z" fill="#c8c8c8"/></svg>
<div class="a " style="left:1473px;top:239px;width:14px;height:14px;background:linear-gradient(#3a3a3a,#474747);border:1px solid #222;border-radius:3px"></div>
<div class="t " style="left:1495px;top:241.85px;font-size:10.8px;color:#000;-webkit-text-stroke:0.25px currentColor;">Open Shading Language</div>
<div class="a " style="left:1470px;top:263px;width:418px;height:1px;background:#5c5c5c"></div>
<div class="a " style="left:1470px;top:264px;width:418px;height:1px;background:#858585"></div>
<svg class="a" style="left:1473px;top:271px;" width="10" height="10" viewBox="0 0 10 10"><path d="M1 1.5H9L5 8.5Z" fill="#101010"/></svg>
<div class="t " style="left:1487px;top:271.00px;font-size:12.5px;color:#000;-webkit-text-stroke:0.25px currentColor;">Dimensions</div>
<svg class="a" style="left:1873px;top:274px;" width="12" height="6" viewBox="0 0 12 6"><rect x="0" y="0" width="1" height="1" fill="#1a1a1a"/><rect x="0" y="1" width="1" height="1" fill="#b0b0b0"/><rect x="0" y="3" width="1" height="1" fill="#1a1a1a"/><rect x="0" y="4" width="1" height="1" fill="#b0b0b0"/><rect x="3" y="0" width="1" height="1" fill="#1a1a1a"/><rect x="3" y="1" width="1" height="1" fill="#b0b0b0"/><rect x="3" y="3" width="1" height="1" fill="#1a1a1a"/><rect x="3" y="4" width="1" height="1" fill="#b0b0b0"/><rect x="6" y="0" width="1" height="1" fill="#1a1a1a"/><rect x="6" y="1" width="1" height="1" fill="#b0b0b0"/><rect x="6" y="3" width="1" height="1" fill="#1a1a1a"/><rect x="6" y="4" width="1" height="1" fill="#b0b0b0"/><rect x="9" y="0" width="1" height="1" fill="#1a1a1a"/><rect x="9" y="1" width="1" height="1" fill="#b0b0b0"/><rect x="9" y="3" width="1" height="1" fill="#1a1a1a"/><rect x="9" y="4" width="1" height="1" fill="#b0b0b0"/></svg>
<div class="a drk" style="left:1470px;top:297px;width:376px;height:19px;border-radius:4px"></div>
<div class="t " style="left:1478px;top:302.75px;font-size:11px;color:#fff;">Render Presets</div>
<svg class="a" style="left:1835px;top:300.5px;" width="8" height="12" viewBox="0 0 8 12"><path d="M4 0.5L7.5 5H0.5Z M4 11.5L7.5 7H0.5Z" fill="#c8c8c8"/></svg>
<div class="a num" style="left:1845px;top:297px;width:21px;height:19px;background:linear-gradient(#a3a3a3,#8f8f8f)"></div>
<div class="a num" style="left:1865px;top:297px;width:21px;height:19px;border-radius:0 4px 4px 0;background:linear-gradient(#a3a3a3,#8f8f8f)"></div>
<svg class="a" style="left:1850px;top:301px;" width="11" height="11" viewBox="0 0 11 11"><path d="M5.5 0.5V10.5M0.5 5.5H10.5" stroke="#111" stroke-width="3"/><path d="M5.5 1.5V9.5M1.5 5.5H9.5" stroke="#fff" stroke-width="1.3"/></svg>
<svg class="a" style="left:1870px;top:301px;" width="11" height="11" viewBox="0 0 11 11"><path d="M0.5 5.5H10.5" stroke="#111" stroke-width="3"/><path d="M1.5 5.5H9.5" stroke="#fff" stroke-width="1.3"/></svg>
<div class="t " style="left:1478px;top:326.75px;font-size:11px;color:#000;-webkit-text-stroke:0.25px currentColor;">Resolution:</div>
<div class="t " style="left:1690px;top:326.75px;font-size:11px;color:#000;-webkit-text-stroke:0.25px currentColor;">Frame Range:</div>
<div class="a " style="left:1470px;top:341.5px;width:204px;height:59px;border-radius:7px;background:#1a1a1a;border:1px solid #1a1a1a"></div>
<div class="a " style="left:1471px;top:342.5px;width:202px;height:18.333333333333332px;background:linear-gradient(#9d9d9d,#b2b2b2);border-radius:6px 6px 0px 0px"></div>
<div class="t " style="left:1487px;top:346.75px;font-size:11px;color:#000;-webkit-text-stroke:0.25px currentColor;">X:</div>
<div class="t " style="right:263px;top:346.75px;font-size:11px;color:#000;-webkit-text-stroke:0.25px currentColor;">1920 px</div>
<svg class="a" style="left:1474px;top:347.6666666666667px;" width="5" height="8" viewBox="0 0 5 8"><path d="M4 0.5V7.5L0.5 4Z" fill="#6f6f6f"/></svg>
<svg class="a" style="left:1665px;top:347.6666666666667px;" width="5" height="8" viewBox="0 0 5 8"><path d="M1 0.5V7.5L4.5 4Z" fill="#6f6f6f"/></svg>
<div class="a " style="left:1471px;top:361.8333333333333px;width:202px;height:18.333333333333332px;background:linear-gradient(#9d9d9d,#b2b2b2);border-radius:0px 0px 0px 0px"></div>
<div class="t " style="left:1487px;top:365.75px;font-size:11px;color:#000;-webkit-text-stroke:0.25px currentColor;">Y:</div>
<div class="t " style="right:263px;top:365.75px;font-size:11px;color:#000;-webkit-text-stroke:0.25px currentColor;">1080 px</div>
<svg class="a" style="left:1474px;top:367.0px;" width="5" height="8" viewBox="0 0 5 8"><path d="M4 0.5V7.5L0.5 4Z" fill="#6f6f6f"/></svg>
<svg class="a" style="left:1665px;top:367.0px;" width="5" height="8" viewBox="0 0 5 8"><path d="M1 0.5V7.5L4.5 4Z" fill="#6f6f6f"/></svg>
<div class="a " style="left:1471px;top:381.1666666666667px;width:202px;height:18.333333333333332px;background:linear-gradient(#7e7e7e,#929292);border-radius:0px 0px 6px 6px"></div>
<div class="t " style="right:263px;top:384.75px;font-size:11px;color:#000;-webkit-text-stroke:0.25px currentColor;">100%</div>
<div class="a " style="left:1682px;top:341.5px;width:204px;height:59px;border-radius:7px;background:#1a1a1a;border:1px solid #1a1a1a"></div>
<div class="a " style="left:1683px;top:342.5px;width:202px;height:18.333333333333332px;background:linear-gradient(#9d9d9d,#b2b2b2);border-radius:6px 6px 0px 0px"></div>
<div class="t " style="left:1699px;top:346.75px;font-size:11px;color:#000;-webkit-text-stroke:0.25px currentColor;">Start Frame:</div>
<div class="t " style="right:51px;top:346.75px;font-size:11px;color:#000;-webkit-text-stroke:0.25px currentColor;">10</div>
<svg class="a" style="left:1686px;top:347.6666666666667px;" width="5" height="8" viewBox="0 0 5 8"><path d="M4 0.5V7.5L0.5 4Z" fill="#6f6f6f"/></svg>
<svg class="a" style="left:1877px;top:347.6666666666667px;" width="5" height="8" viewBox="0 0 5 8"><path d="M1 0.5V7.5L4.5 4Z" fill="#6f6f6f"/></svg>
<div class="a " style="left:1683px;top:361.8333333333333px;width:202px;height:18.333333333333332px;background:linear-gradient(#9d9d9d,#b2b2b2);border-radius:0px 0px 0px 0px"></div>
<div class="t " style="left:1699px;top:365.75px;font-size:11px;color:#000;-webkit-text-stroke:0.25px currentColor;">End Frame:</div>
<div class="t " style="right:51px;top:365.75px;font-size:11px;color:#000;-webkit-text-stroke:0.25px currentColor;">100</div>
<svg class="a" style="left:1686px;top:367.0px;" width="5" height="8" viewBox="0 0 5 8"><path d="M4 0.5V7.5L0.5 4Z" fill="#6f6f6f"/></svg>
<svg class="a" style="left:1877px;top:367.0px;" width="5" height="8" viewBox="0 0 5 8"><path d="M1 0.5V7.5L4.5 4Z" fill="#6f6f6f"/></svg>
<div class="a " style="left:1683px;top:381.1666666666667px;width:202px;height:18.333333333333332px;background:linear-gradient(#9d9d9d,#b2b2b2);border-radius:0px 0px 6px 6px"></div>
<div class="t " style="left:1699px;top:384.75px;font-size:11px;color:#000;-webkit-text-stroke:0.25px currentColor;">Frame Step:</div>
<div class="t " style="right:51px;top:384.75px;font-size:11px;color:#000;-webkit-text-stroke:0.25px currentColor;">1</div>
<svg class="a" style="left:1686px;top:386.33333333333337px;" width="5" height="8" viewBox="0 0 5 8"><path d="M4 0.5V7.5L0.5 4Z" fill="#6f6f6f"/></svg>
<svg class="a" style="left:1877px;top:386.33333333333337px;" width="5" height="8" viewBox="0 0 5 8"><path d="M1 0.5V7.5L4.5 4Z" fill="#6f6f6f"/></svg>
<div class="t " style="left:1478px;top:405.75px;font-size:11px;color:#000;-webkit-text-stroke:0.25px currentColor;">Aspect Ratio:</div>
<div class="t " style="left:1690px;top:405.75px;font-size:11px;color:#000;-webkit-text-stroke:0.25px currentColor;">Frame Rate:</div>
<div class="a " style="left:1470px;top:421.5px;width:204px;height:39px;border-radius:7px;background:#1a1a1a;border:1px solid #1a1a1a"></div>
<div class="a " style="left:1471px;top:422.5px;width:202px;height:18.0px;background:linear-gradient(#9d9d9d,#b2b2b2);border-radius:6px 6px 0px 0px"></div>
<div class="t " style="left:1487px;top:426.75px;font-size:11px;color:#000;-webkit-text-stroke:0.25px currentColor;">X:</div>
<div class="t " style="right:263px;top:426.75px;font-size:11px;color:#000;-webkit-text-stroke:0.25px currentColor;">1.000</div>
<svg class="a" style="left:1474px;top:427.5px;" width="5" height="8" viewBox="0 0 5 8"><path d="M4 0.5V7.5L0.5 4Z" fill="#6f6f6f"/></svg>
<svg class="a" style="left:1665px;top:427.5px;" width="5" height="8" viewBox="0 0 5 8"><path d="M1 0.5V7.5L4.5 4Z" fill="#6f6f6f"/></svg>
<div class="a " style="left:1471px;top:441.5px;width:202px;height:18.0px;background:linear-gradient(#9d9d9d,#b2b2b2);border-radius:0px 0px 6px 6px"></div>
<div class="t " style="left:1487px;top:444.75px;font-size:11px;color:#000;-webkit-text-stroke:0.25px currentColor;">Y:</div>
<div class="t " style="right:263px;top:444.75px;font-size:11px;color:#000;-webkit-text-stroke:0.25px currentColor;">1.000</div>
<svg class="a" style="left:1474px;top:446.5px;" width="5" height="8" viewBox="0 0 5 8"><path d="M4 0.5V7.5L0.5 4Z" fill="#6f6f6f"/></svg>
<svg class="a" style="left:1665px;top:446.5px;" width="5" height="8" viewBox="0 0 5 8"><path d="M1 0.5V7.5L4.5 4Z" fill="#6f6f6f"/></svg>
<div class="a drk" style="left:1682px;top:421.5px;width:204px;height:19px;border-radius:4px"></div>
<div class="t " style="left:1690px;top:426.75px;font-size:11px;color:#fff;">30 fps</div>
<svg class="a" style="left:1875px;top:425.0px;" width="8" height="12" viewBox="0 0 8 12"><path d="M4 0.5L7.5 5H0.5Z M4 11.5L7.5 7H0.5Z" fill="#c8c8c8"/></svg>
<div class="t " style="left:1690px;top:446.75px;font-size:11px;color:#000;-webkit-text-stroke:0.25px currentColor;">Time Remapping:</div>
<div class="a " style="left:1682px;top:462px;width:204px;height:19px;border-radius:9px;background:linear-gradient(#9d9d9d,#b2b2b2);border:1px solid #1a1a1a"></div>
<div class="a " style="left:1783px;top:462px;width:1px;height:19px;background:#1a1a1a"></div>
<svg class="a" style="left:1686px;top:467.5px;" width="5" height="8" viewBox="0 0 5 8"><path d="M4 0.5V7.5L0.5 4Z" fill="#6a6a6a"/></svg>
<svg class="a" style="left:1774px;top:467.5px;" width="5" height="8" viewBox="0 0 5 8"><path d="M1 0.5V7.5L4.5 4Z" fill="#6a6a6a"/></svg>
<svg class="a" style="left:1788px;top:467.5px;" width="5" height="8" viewBox="0 0 5 8"><path d="M4 0.5V7.5L0.5 4Z" fill="#6a6a6a"/></svg>
<svg class="a" style="left:1877px;top:467.5px;" width="5" height="8" viewBox="0 0 5 8"><path d="M1 0.5V7.5L4.5 4Z" fill="#6a6a6a"/></svg>
<div class="t " style="left:1698px;top:466.75px;font-size:11px;color:#000;-webkit-text-stroke:0.25px currentColor;">Old:</div>
<div class="t " style="right:152px;top:466.75px;font-size:11px;color:#000;-webkit-text-stroke:0.25px currentColor;">100</div>
<div class="t " style="left:1799px;top:466.75px;font-size:11px;color:#000;-webkit-text-stroke:0.25px currentColor;">New:</div>
<div class="t " style="right:50px;top:466.75px;font-size:11px;color:#000;-webkit-text-stroke:0.25px currentColor;">100</div>
<div class="a " style="left:1473px;top:467px;width:14px;height:14px;background:linear-gradient(#3a3a3a,#474747);border:1px solid #222;border-radius:3px"></div>
<div class="t " style="left:1495px;top:468.75px;font-size:11px;color:#000;-webkit-text-stroke:0.25px currentColor;">Border</div>
<div class="a " style="left:1579px;top:467px;width:14px;height:14px;background:linear-gradient(#5a5a5a,#666);border:1px solid #4a4a4a;border-radius:3px"></div>
<div class="t " style="left:1601px;top:468.75px;font-size:11px;color:#4e4e4e;-webkit-text-stroke:0.25px currentColor;">Crop</div>
<div class="a " style="left:1470px;top:490px;width:418px;height:1px;background:#5c5c5c"></div>
<div class="a " style="left:1470px;top:491px;width:418px;height:1px;background:#858585"></div>
<svg class="a" style="left:1474px;top:497px;" width="10" height="10" viewBox="0 0 10 10"><path d="M1.5 1V9L8.5 5Z" fill="#101010"/></svg>
<div class="t " style="left:1487px;top:497.00px;font-size:12.5px;color:#000;-webkit-text-stroke:0.25px currentColor;">Metadata</div>
<svg class="a" style="left:1873px;top:500px;" width="12" height="6" viewBox="0 0 12 6"><rect x="0" y="0" width="1" height="1" fill="#1a1a1a"/><rect x="0" y="1" width="1" height="1" fill="#b0b0b0"/><rect x="0" y="3" width="1" height="1" fill="#1a1a1a"/><rect x="0" y="4" width="1" height="1" fill="#b0b0b0"/><rect x="3" y="0" width="1" height="1" fill="#1a1a1a"/><rect x="3" y="1" width="1" height="1" fill="#b0b0b0"/><rect x="3" y="3" width="1" height="1" fill="#1a1a1a"/><rect x="3" y="4" width="1" height="1" fill="#b0b0b0"/><rect x="6" y="0" width="1" height="1" fill="#1a1a1a"/><rect x="6" y="1" width="1" height="1" fill="#b0b0b0"/><rect x="6" y="3" width="1" height="1" fill="#1a1a1a"/><rect x="6" y="4" width="1" height="1" fill="#b0b0b0"/><rect x="9" y="0" width="1" height="1" fill="#1a1a1a"/><rect x="9" y="1" width="1" height="1" fill="#b0b0b0"/><rect x="9" y="3" width="1" height="1" fill="#1a1a1a"/><rect x="9" y="4" width="1" height="1" fill="#b0b0b0"/></svg>
<div class="a " style="left:1470px;top:515px;width:418px;height:1px;background:#5c5c5c"></div>
<div class="a " style="left:1470px;top:516px;width:418px;height:1px;background:#858585"></div>
<svg class="a" style="left:1473px;top:522px;" width="10" height="10" viewBox="0 0 10 10"><path d="M1 1.5H9L5 8.5Z" fill="#101010"/></svg>
<div class="t " style="left:1487px;top:522.00px;font-size:12.5px;color:#000;-webkit-text-stroke:0.25px currentColor;">Output</div>
<svg class="a" style="left:1873px;top:525px;" width="12" height="6" viewBox="0 0 12 6"><rect x="0" y="0" width="1" height="1" fill="#1a1a1a"/><rect x="0" y="1" width="1" height="1" fill="#b0b0b0"/><rect x="0" y="3" width="1" height="1" fill="#1a1a1a"/><rect x="0" y="4" width="1" height="1" fill="#b0b0b0"/><rect x="3" y="0" width="1" height="1" fill="#1a1a1a"/><rect x="3" y="1" width="1" height="1" fill="#b0b0b0"/><rect x="3" y="3" width="1" height="1" fill="#1a1a1a"/><rect x="3" y="4" width="1" height="1" fill="#b0b0b0"/><rect x="6" y="0" width="1" height="1" fill="#1a1a1a"/><rect x="6" y="1" width="1" height="1" fill="#b0b0b0"/><rect x="6" y="3" width="1" height="1" fill="#1a1a1a"/><rect x="6" y="4" width="1" height="1" fill="#b0b0b0"/><rect x="9" y="0" width="1" height="1" fill="#1a1a1a"/><rect x="9" y="1" width="1" height="1" fill="#b0b0b0"/><rect x="9" y="3" width="1" height="1" fill="#1a1a1a"/><rect x="9" y="4" width="1" height="1" fill="#b0b0b0"/></svg>
<div class="a " style="left:1470px;top:548px;width:417px;height:19px;border-radius:4px;background:linear-gradient(#a0a0a0,#b4b4b4);border:1px solid #1a1a1a"></div>
<div class="a " style="left:1865px;top:548px;width:1px;height:19px;background:#1a1a1a"></div>
<div class="a " style="left:1866px;top:549px;width:20px;height:17px;background:linear-gradient(#a3a3a3,#8f8f8f);border-radius:0 3px 3px 0"></div>
<svg class="a" style="left:1868px;top:550px;" width="16" height="15" viewBox="0 0 16 15"><rect x="1.5" y="4" width="13" height="9" fill="#f0e8b8" stroke="#222" stroke-width="1"/><rect x="4" y="1.5" width="6" height="4" fill="#fff" stroke="#222" stroke-width="0.8"/><path d="M1.5 8H14.5" stroke="#222" stroke-width="0.8"/></svg>
<div class="t " style="left:1478px;top:552.75px;font-size:11px;color:#000;-webkit-text-stroke:0.25px currentColor;">F:\workspace\fire\45</div>
<div class="a " style="left:1473px;top:576px;width:14px;height:14px;background:linear-gradient(#5a5a5a,#666);border:1px solid #4a4a4a;border-radius:3px"></div>
<svg class="a" style="left:1474px;top:575px;" width="13" height="13" viewBox="0 0 13 13"><path d="M2.5 6.5L5.5 9.5L11.5 1.5" fill="none" stroke="#000" stroke-width="3.4" stroke-linecap="round" stroke-linejoin="round" opacity="0.7"/><path d="M2.5 6.5L5.5 9.5L11.5 1.5" fill="none" stroke="#a8a8a8" stroke-width="1.8" stroke-linecap="round" stroke-linejoin="round"/></svg>
<div class="t " style="left:1495px;top:577.75px;font-size:11px;color:#a8a8a8;">Overwrite</div>
<div class="a " style="left:1685px;top:576px;width:14px;height:14px;background:linear-gradient(#3a3a3a,#474747);border:1px solid #222;border-radius:3px"></div>
<svg class="a" style="left:1686px;top:575px;" width="13" height="13" viewBox="0 0 13 13"><path d="M2.5 6.5L5.5 9.5L11.5 1.5" fill="none" stroke="#000" stroke-width="3.4" stroke-linecap="round" stroke-linejoin="round" opacity="0.7"/><path d="M2.5 6.5L5.5 9.5L11.5 1.5" fill="none" stroke="#fff" stroke-width="1.8" stroke-linecap="round" stroke-linejoin="round"/></svg>
<div class="t " style="left:1707px;top:577.75px;font-size:11px;color:#fff;">File Extensions</div>
<div class="a " style="left:1473px;top:597px;width:14px;height:14px;background:linear-gradient(#5a5a5a,#666);border:1px solid #4a4a4a;border-radius:3px"></div>
<div class="t " style="left:1495px;top:599.75px;font-size:11px;color:#505050;-webkit-text-stroke:0.25px currentColor;">Placeholders</div>
<div class="a " style="left:1685px;top:597px;width:14px;height:14px;background:linear-gradient(#3a3a3a,#474747);border:1px solid #222;border-radius:3px"></div>
<div class="t " style="left:1707px;top:599.75px;font-size:11px;color:#000;-webkit-text-stroke:0.25px currentColor;">Cache Result</div>
<div class="a drk" style="left:1470px;top:620px;width:204px;height:19px;border-radius:4px"></div>
<svg class="a" style="left:1475px;top:621px;" width="14" height="17" viewBox="0 0 14 17"><rect x="1.5" y="1.5" width="11" height="14" fill="#eee" stroke="#111" stroke-width="1"/><path d="M4 1.5V15.5M10 1.5V15.5M1.5 5H12.5M1.5 9H12.5M1.5 12H12.5" stroke="#333" stroke-width="0.8"/></svg>
<div class="t " style="left:1494px;top:624.75px;font-size:11px;color:#fff;">MPEG</div>
<svg class="a" style="left:1663px;top:623.5px;" width="8" height="12" viewBox="0 0 8 12"><path d="M4 0.5L7.5 5H0.5Z M4 11.5L7.5 7H0.5Z" fill="#c8c8c8"/></svg>
<div class="a drk" style="left:1682px;top:620px;width:204px;height:19px;border-radius:4px"></div>
<div class="a " style="left:1783px;top:620px;width:1px;height:19px;background:#1a1a1a"></div>
<div class="t " style="left:1733px;transform:translateX(-50%);top:624.75px;font-size:11px;color:#fff;">BW</div>
<div class="t " style="left:1834px;transform:translateX(-50%);top:624.75px;font-size:11px;color:#fff;">RGB</div>
<div class="a " style="left:1470px;top:648px;width:418px;height:1px;background:#5c5c5c"></div>
<div class="a " style="left:1470px;top:649px;width:418px;height:1px;background:#858585"></div>
<svg class="a" style="left:1474px;top:656px;" width="10" height="10" viewBox="0 0 10 10"><path d="M1.5 1V9L8.5 5Z" fill="#101010"/></svg>
<div class="t " style="left:1487px;top:656.00px;font-size:12.5px;color:#000;-webkit-text-stroke:0.25px currentColor;">Encoding</div>
<svg class="a" style="left:1873px;top:659px;" width="12" height="6" viewBox="0 0 12 6"><rect x="0" y="0" width="1" height="1" fill="#1a1a1a"/><rect x="0" y="1" width="1" height="1" fill="#b0b0b0"/><rect x="0" y="3" width="1" height="1" fill="#1a1a1a"/><rect x="0" y="4" width="1" height="1" fill="#b0b0b0"/><rect x="3" y="0" width="1" height="1" fill="#1a1a1a"/><rect x="3" y="1" width="1" height="1" fill="#b0b0b0"/><rect x="3" y="3" width="1" height="1" fill="#1a1a1a"/><rect x="3" y="4" width="1" height="1" fill="#b0b0b0"/><rect x="6" y="0" width="1" height="1" fill="#1a1a1a"/><rect x="6" y="1" width="1" height="1" fill="#b0b0b0"/><rect x="6" y="3" width="1" height="1" fill="#1a1a1a"/><rect x="6" y="4" width="1" height="1" fill="#b0b0b0"/><rect x="9" y="0" width="1" height="1" fill="#1a1a1a"/><rect x="9" y="1" width="1" height="1" fill="#b0b0b0"/><rect x="9" y="3" width="1" height="1" fill="#1a1a1a"/><rect x="9" y="4" width="1" height="1" fill="#b0b0b0"/></svg>
<div class="a " style="left:1470px;top:672px;width:418px;height:1px;background:#5c5c5c"></div>
<div class="a " style="left:1470px;top:673px;width:418px;height:1px;background:#858585"></div>
<svg class="a" style="left:1474px;top:680px;" width="10" height="10" viewBox="0 0 10 10"><path d="M1.5 1V9L8.5 5Z" fill="#101010"/></svg>
<div class="a " style="left:1487px;top:678px;width:14px;height:14px;background:linear-gradient(#3a3a3a,#474747);border:1px solid #222;border-radius:3px"></div>
<div class="t " style="left:1507px;top:680.00px;font-size:12.5px;color:#000;-webkit-text-stroke:0.25px currentColor;">Freestyle</div>
<svg class="a" style="left:1873px;top:683px;" width="12" height="6" viewBox="0 0 12 6"><rect x="0" y="0" width="1" height="1" fill="#1a1a1a"/><rect x="0" y="1" width="1" height="1" fill="#b0b0b0"/><rect x="0" y="3" width="1" height="1" fill="#1a1a1a"/><rect x="0" y="4" width="1" height="1" fill="#b0b0b0"/><rect x="3" y="0" width="1" height="1" fill="#1a1a1a"/><rect x="3" y="1" width="1" height="1" fill="#b0b0b0"/><rect x="3" y="3" width="1" height="1" fill="#1a1a1a"/><rect x="3" y="4" width="1" height="1" fill="#b0b0b0"/><rect x="6" y="0" width="1" height="1" fill="#1a1a1a"/><rect x="6" y="1" width="1" height="1" fill="#b0b0b0"/><rect x="6" y="3" width="1" height="1" fill="#1a1a1a"/><rect x="6" y="4" width="1" height="1" fill="#b0b0b0"/><rect x="9" y="0" width="1" height="1" fill="#1a1a1a"/><rect x="9" y="1" width="1" height="1" fill="#b0b0b0"/><rect x="9" y="3" width="1" height="1" fill="#1a1a1a"/><rect x="9" y="4" width="1" height="1" fill="#b0b0b0"/></svg>
<div class="a " style="left:1470px;top:696px;width:418px;height:1px;background:#5c5c5c"></div>
<div class="a " style="left:1470px;top:697px;width:418px;height:1px;background:#858585"></div>
<svg class="a" style="left:1474px;top:704px;" width="10" height="10" viewBox="0 0 10 10"><path d="M1.5 1V9L8.5 5Z" fill="#101010"/></svg>
<div class="t " style="left:1487px;top:704.00px;font-size:12.5px;color:#000;-webkit-text-stroke:0.25px currentColor;">Sampling</div>
<svg class="a" style="left:1873px;top:707px;" width="12" height="6" viewBox="0 0 12 6"><rect x="0" y="0" width="1" height="1" fill="#1a1a1a"/><rect x="0" y="1" width="1" height="1" fill="#b0b0b0"/><rect x="0" y="3" width="1" height="1" fill="#1a1a1a"/><rect x="0" y="4" width="1" height="1" fill="#b0b0b0"/><rect x="3" y="0" width="1" height="1" fill="#1a1a1a"/><rect x="3" y="1" width="1" height="1" fill="#b0b0b0"/><rect x="3" y="3" width="1" height="1" fill="#1a1a1a"/><rect x="3" y="4" width="1" height="1" fill="#b0b0b0"/><rect x="6" y="0" width="1" height="1" fill="#1a1a1a"/><rect x="6" y="1" width="1" height="1" fill="#b0b0b0"/><rect x="6" y="3" width="1" height="1" fill="#1a1a1a"/><rect x="6" y="4" width="1" height="1" fill="#b0b0b0"/><rect x="9" y="0" width="1" height="1" fill="#1a1a1a"/><rect x="9" y="1" width="1" height="1" fill="#b0b0b0"/><rect x="9" y="3" width="1" height="1" fill="#1a1a1a"/><rect x="9" y="4" width="1" height="1" fill="#b0b0b0"/></svg>
<div class="a " style="left:1470px;top:720px;width:418px;height:1px;background:#5c5c5c"></div>
<div class="a " style="left:1470px;top:721px;width:418px;height:1px;background:#858585"></div>
<svg class="a" style="left:1474px;top:728px;" width="10" height="10" viewBox="0 0 10 10"><path d="M1.5 1V9L8.5 5Z" fill="#101010"/></svg>
<div class="t " style="left:1487px;top:728.00px;font-size:12.5px;color:#000;-webkit-text-stroke:0.25px currentColor;">Volume Sampling</div>
<svg class="a" style="left:1873px;top:731px;" width="12" height="6" viewBox="0 0 12 6"><rect x="0" y="0" width="1" height="1" fill="#1a1a1a"/><rect x="0" y="1" width="1" height="1" fill="#b0b0b0"/><rect x="0" y="3" width="1" height="1" fill="#1a1a1a"/><rect x="0" y="4" width="1" height="1" fill="#b0b0b0"/><rect x="3" y="0" width="1" height="1" fill="#1a1a1a"/><rect x="3" y="1" width="1" height="1" fill="#b0b0b0"/><rect x="3" y="3" width="1" height="1" fill="#1a1a1a"/><rect x="3" y="4" width="1" height="1" fill="#b0b0b0"/><rect x="6" y="0" width="1" height="1" fill="#1a1a1a"/><rect x="6" y="1" width="1" height="1" fill="#b0b0b0"/><rect x="6" y="3" width="1" height="1" fill="#1a1a1a"/><rect x="6" y="4" width="1" height="1" fill="#b0b0b0"/><rect x="9" y="0" width="1" height="1" fill="#1a1a1a"/><rect x="9" y="1" width="1" height="1" fill="#b0b0b0"/><rect x="9" y="3" width="1" height="1" fill="#1a1a1a"/><rect x="9" y="4" width="1" height="1" fill="#b0b0b0"/></svg>
<div class="a " style="left:1470px;top:744px;width:418px;height:1px;background:#5c5c5c"></div>
<div class="a " style="left:1470px;top:745px;width:418px;height:1px;background:#858585"></div>
<svg class="a" style="left:1474px;top:752px;" width="10" height="10" viewBox="0 0 10 10"><path d="M1.5 1V9L8.5 5Z" fill="#101010"/></svg>
<div class="t " style="left:1487px;top:752.00px;font-size:12.5px;color:#000;-webkit-text-stroke:0.25px currentColor;">Light Paths</div>
<svg class="a" style="left:1873px;top:755px;" width="12" height="6" viewBox="0 0 12 6"><rect x="0" y="0" width="1" height="1" fill="#1a1a1a"/><rect x="0" y="1" width="1" height="1" fill="#b0b0b0"/><rect x="0" y="3" width="1" height="1" fill="#1a1a1a"/><rect x="0" y="4" width="1" height="1" fill="#b0b0b0"/><rect x="3" y="0" width="1" height="1" fill="#1a1a1a"/><rect x="3" y="1" width="1" height="1" fill="#b0b0b0"/><rect x="3" y="3" width="1" height="1" fill="#1a1a1a"/><rect x="3" y="4" width="1" height="1" fill="#b0b0b0"/><rect x="6" y="0" width="1" height="1" fill="#1a1a1a"/><rect x="6" y="1" width="1" height="1" fill="#b0b0b0"/><rect x="6" y="3" width="1" height="1" fill="#1a1a1a"/><rect x="6" y="4" width="1" height="1" fill="#b0b0b0"/><rect x="9" y="0" width="1" height="1" fill="#1a1a1a"/><rect x="9" y="1" width="1" height="1" fill="#b0b0b0"/><rect x="9" y="3" width="1" height="1" fill="#1a1a1a"/><rect x="9" y="4" width="1" height="1" fill="#b0b0b0"/></svg>
<div class="a " style="left:1470px;top:768px;width:418px;height:1px;background:#5c5c5c"></div>
<div class="a " style="left:1470px;top:769px;width:418px;height:1px;background:#858585"></div>
<svg class="a" style="left:1473px;top:776px;" width="10" height="10" viewBox="0 0 10 10"><path d="M1 1.5H9L5 8.5Z" fill="#101010"/></svg>
<div class="a " style="left:1487px;top:774px;width:14px;height:14px;background:linear-gradient(#3a3a3a,#474747);border:1px solid #222;border-radius:3px"></div>
<svg class="a" style="left:1488px;top:773px;" width="13" height="13" viewBox="0 0 13 13"><path d="M2.5 6.5L5.5 9.5L11.5 1.5" fill="none" stroke="#000" stroke-width="3.4" stroke-linecap="round" stroke-linejoin="round" opacity="0.7"/><path d="M2.5 6.5L5.5 9.5L11.5 1.5" fill="none" stroke="#fff" stroke-width="1.8" stroke-linecap="round" stroke-linejoin="round"/></svg>
<div class="t " style="left:1507px;top:776.00px;font-size:12.5px;color:#000;-webkit-text-stroke:0.25px currentColor;">Motion Blur</div>
<svg class="a" style="left:1873px;top:779px;" width="12" height="6" viewBox="0 0 12 6"><rect x="0" y="0" width="1" height="1" fill="#1a1a1a"/><rect x="0" y="1" width="1" height="1" fill="#b0b0b0"/><rect x="0" y="3" width="1" height="1" fill="#1a1a1a"/><rect x="0" y="4" width="1" height="1" fill="#b0b0b0"/><rect x="3" y="0" width="1" height="1" fill="#1a1a1a"/><rect x="3" y="1" width="1" height="1" fill="#b0b0b0"/><rect x="3" y="3" width="1" height="1" fill="#1a1a1a"/><rect x="3" y="4" width="1" height="1" fill="#b0b0b0"/><rect x="6" y="0" width="1" height="1" fill="#1a1a1a"/><rect x="6" y="1" width="1" height="1" fill="#b0b0b0"/><rect x="6" y="3" width="1" height="1" fill="#1a1a1a"/><rect x="6" y="4" width="1" height="1" fill="#b0b0b0"/><rect x="9" y="0" width="1" height="1" fill="#1a1a1a"/><rect x="9" y="1" width="1" height="1" fill="#b0b0b0"/><rect x="9" y="3" width="1" height="1" fill="#1a1a1a"/><rect x="9" y="4" width="1" height="1" fill="#b0b0b0"/></svg>
<div class="a " style="left:1470px;top:801.5px;width:416px;height:19px;border-radius:9px;background:#1a1a1a;border:1px solid #1a1a1a"></div>
<div class="a " style="left:1471px;top:802.5px;width:414px;height:17.0px;background:linear-gradient(#9d9d9d,#b2b2b2);border-radius:8px 8px 8px 8px"></div>
<div class="t " style="left:1487px;top:805.75px;font-size:11px;color:#000;-webkit-text-stroke:0.25px currentColor;">Shutter:</div>
<div class="t " style="right:51px;top:805.75px;font-size:11px;color:#000;-webkit-text-stroke:0.25px currentColor;">0.50</div>
<svg class="a" style="left:1474px;top:807.0px;" width="5" height="8" viewBox="0 0 5 8"><path d="M4 0.5V7.5L0.5 4Z" fill="#6f6f6f"/></svg>
<svg class="a" style="left:1877px;top:807.0px;" width="5" height="8" viewBox="0 0 5 8"><path d="M1 0.5V7.5L4.5 4Z" fill="#6f6f6f"/></svg>
<div class="a " style="left:1470px;top:829px;width:418px;height:1px;background:#5c5c5c"></div>
<div class="a " style="left:1470px;top:830px;width:418px;height:1px;background:#858585"></div>
<svg class="a" style="left:1473px;top:836px;" width="10" height="10" viewBox="0 0 10 10"><path d="M1 1.5H9L5 8.5Z" fill="#101010"/></svg>
<div class="t " style="left:1487px;top:836.00px;font-size:12.5px;color:#000;-webkit-text-stroke:0.25px currentColor;">Film</div>
<svg class="a" style="left:1873px;top:839px;" width="12" height="6" viewBox="0 0 12 6"><rect x="0" y="0" width="1" height="1" fill="#1a1a1a"/><rect x="0" y="1" width="1" height="1" fill="#b0b0b0"/><rect x="0" y="3" width="1" height="1" fill="#1a1a1a"/><rect x="0" y="4" width="1" height="1" fill="#b0b0b0"/><rect x="3" y="0" width="1" height="1" fill="#1a1a1a"/><rect x="3" y="1" width="1" height="1" fill="#b0b0b0"/><rect x="3" y="3" width="1" height="1" fill="#1a1a1a"/><rect x="3" y="4" width="1" height="1" fill="#b0b0b0"/><rect x="6" y="0" width="1" height="1" fill="#1a1a1a"/><rect x="6" y="1" width="1" height="1" fill="#b0b0b0"/><rect x="6" y="3" width="1" height="1" fill="#1a1a1a"/><rect x="6" y="4" width="1" height="1" fill="#b0b0b0"/><rect x="9" y="0" width="1" height="1" fill="#1a1a1a"/><rect x="9" y="1" width="1" height="1" fill="#b0b0b0"/><rect x="9" y="3" width="1" height="1" fill="#1a1a1a"/><rect x="9" y="4" width="1" height="1" fill="#b0b0b0"/></svg>
<div class="a " style="left:1470px;top:861.5px;width:204px;height:19px;border-radius:9px;background:#1a1a1a;border:1px solid #1a1a1a"></div>
<div class="a " style="left:1471px;top:862.5px;width:202px;height:17.0px;background:linear-gradient(#9d9d9d,#b2b2b2);border-radius:8px 8px 8px 8px"></div>
<div class="t " style="left:1487px;top:865.75px;font-size:11px;color:#000;-webkit-text-stroke:0.25px currentColor;">Exposure:</div>
<div class="t " style="right:263px;top:865.75px;font-size:11px;color:#000;-webkit-text-stroke:0.25px currentColor;">1.00</div>
<svg class="a" style="left:1474px;top:867.0px;" width="5" height="8" viewBox="0 0 5 8"><path d="M4 0.5V7.5L0.5 4Z" fill="#6f6f6f"/></svg>
<svg class="a" style="left:1665px;top:867.0px;" width="5" height="8" viewBox="0 0 5 8"><path d="M1 0.5V7.5L4.5 4Z" fill="#6f6f6f"/></svg>
<div class="a " style="left:1473px;top:886px;width:14px;height:14px;background:linear-gradient(#3a3a3a,#474747);border:1px solid #222;border-radius:3px"></div>
<div class="t " style="left:1495px;top:888.75px;font-size:11px;color:#000;-webkit-text-stroke:0.25px currentColor;">Transparent</div>
<div class="a " style="left:1682px;top:861.5px;width:204px;height:39px;border-radius:8px;background:#1a1a1a"></div>
<div class="a " style="left:1683px;top:862.5px;width:202px;height:18px;border-radius:7px 7px 0 0;background:linear-gradient(#4a4a4a,#383838)"></div>
<div class="t " style="left:1690px;top:866.75px;font-size:11px;color:#fff;">Gaussian</div>
<svg class="a" style="left:1875px;top:865px;" width="8" height="12" viewBox="0 0 8 12"><path d="M4 0.5L7.5 5H0.5Z M4 11.5L7.5 7H0.5Z" fill="#c8c8c8"/></svg>
<div class="a " style="left:1683px;top:881.5px;width:202px;height:18.5px;border-radius:0 0 7px 7px;background:linear-gradient(#9d9d9d,#b2b2b2)"></div>
<svg class="a" style="left:1686px;top:886.5px;" width="5" height="8" viewBox="0 0 5 8"><path d="M4 0.5V7.5L0.5 4Z" fill="#6a6a6a"/></svg>
<svg class="a" style="left:1877px;top:886.5px;" width="5" height="8" viewBox="0 0 5 8"><path d="M1 0.5V7.5L4.5 4Z" fill="#6a6a6a"/></svg>
<div class="t " style="left:1699px;top:885.75px;font-size:11px;color:#000;-webkit-text-stroke:0.25px currentColor;">Width:</div>
<div class="t " style="right:51px;top:885.75px;font-size:11px;color:#000;-webkit-text-stroke:0.25px currentColor;">1.50</div>
<div class="a " style="left:1470px;top:910px;width:418px;height:1px;background:#5c5c5c"></div>
<div class="a " style="left:1470px;top:911px;width:418px;height:1px;background:#858585"></div>
<svg class="a" style="left:1474px;top:917px;" width="10" height="10" viewBox="0 0 10 10"><path d="M1.5 1V9L8.5 5Z" fill="#101010"/></svg>
<div class="t " style="left:1487px;top:917.00px;font-size:12.5px;color:#000;-webkit-text-stroke:0.25px currentColor;">Performance</div>
<svg class="a" style="left:1873px;top:920px;" width="12" height="6" viewBox="0 0 12 6"><rect x="0" y="0" width="1" height="1" fill="#1a1a1a"/><rect x="0" y="1" width="1" height="1" fill="#b0b0b0"/><rect x="0" y="3" width="1" height="1" fill="#1a1a1a"/><rect x="0" y="4" width="1" height="1" fill="#b0b0b0"/><rect x="3" y="0" width="1" height="1" fill="#1a1a1a"/><rect x="3" y="1" width="1" height="1" fill="#b0b0b0"/><rect x="3" y="3" width="1" height="1" fill="#1a1a1a"/><rect x="3" y="4" width="1" height="1" fill="#b0b0b0"/><rect x="6" y="0" width="1" height="1" fill="#1a1a1a"/><rect x="6" y="1" width="1" height="1" fill="#b0b0b0"/><rect x="6" y="3" width="1" height="1" fill="#1a1a1a"/><rect x="6" y="4" width="1" height="1" fill="#b0b0b0"/><rect x="9" y="0" width="1" height="1" fill="#1a1a1a"/><rect x="9" y="1" width="1" height="1" fill="#b0b0b0"/><rect x="9" y="3" width="1" height="1" fill="#1a1a1a"/><rect x="9" y="4" width="1" height="1" fill="#b0b0b0"/></svg>
<div class="a " style="left:1470px;top:934px;width:418px;height:1px;background:#5c5c5c"></div>
<div class="a " style="left:1470px;top:935px;width:418px;height:1px;background:#858585"></div>
<svg class="a" style="left:1474px;top:941px;" width="10" height="10" viewBox="0 0 10 10"><path d="M1.5 1V9L8.5 5Z" fill="#101010"/></svg>
<div class="t " style="left:1487px;top:941.00px;font-size:12.5px;color:#000;-webkit-text-stroke:0.25px currentColor;">Post Processing</div>
<svg class="a" style="left:1873px;top:944px;" width="12" height="6" viewBox="0 0 12 6"><rect x="0" y="0" width="1" height="1" fill="#1a1a1a"/><rect x="0" y="1" width="1" height="1" fill="#b0b0b0"/><rect x="0" y="3" width="1" height="1" fill="#1a1a1a"/><rect x="0" y="4" width="1" height="1" fill="#b0b0b0"/><rect x="3" y="0" width="1" height="1" fill="#1a1a1a"/><rect x="3" y="1" width="1" height="1" fill="#b0b0b0"/><rect x="3" y="3" width="1" height="1" fill="#1a1a1a"/><rect x="3" y="4" width="1" height="1" fill="#b0b0b0"/><rect x="6" y="0" width="1" height="1" fill="#1a1a1a"/><rect x="6" y="1" width="1" height="1" fill="#b0b0b0"/><rect x="6" y="3" width="1" height="1" fill="#1a1a1a"/><rect x="6" y="4" width="1" height="1" fill="#b0b0b0"/><rect x="9" y="0" width="1" height="1" fill="#1a1a1a"/><rect x="9" y="1" width="1" height="1" fill="#b0b0b0"/><rect x="9" y="3" width="1" height="1" fill="#1a1a1a"/><rect x="9" y="4" width="1" height="1" fill="#b0b0b0"/></svg>
<div class="a " style="left:1470px;top:958px;width:418px;height:1px;background:#5c5c5c"></div>
<div class="a " style="left:1470px;top:959px;width:418px;height:1px;background:#858585"></div>
<svg class="a" style="left:1474px;top:965px;" width="10" height="10" viewBox="0 0 10 10"><path d="M1.5 1V9L8.5 5Z" fill="#101010"/></svg>
<div class="t " style="left:1487px;top:965.00px;font-size:12.5px;color:#000;-webkit-text-stroke:0.25px currentColor;">Bake</div>
<svg class="a" style="left:1873px;top:968px;" width="12" height="6" viewBox="0 0 12 6"><rect x="0" y="0" width="1" height="1" fill="#1a1a1a"/><rect x="0" y="1" width="1" height="1" fill="#b0b0b0"/><rect x="0" y="3" width="1" height="1" fill="#1a1a1a"/><rect x="0" y="4" width="1" height="1" fill="#b0b0b0"/><rect x="3" y="0" width="1" height="1" fill="#1a1a1a"/><rect x="3" y="1" width="1" height="1" fill="#b0b0b0"/><rect x="3" y="3" width="1" height="1" fill="#1a1a1a"/><rect x="3" y="4" width="1" height="1" fill="#b0b0b0"/><rect x="6" y="0" width="1" height="1" fill="#1a1a1a"/><rect x="6" y="1" width="1" height="1" fill="#b0b0b0"/><rect x="6" y="3" width="1" height="1" fill="#1a1a1a"/><rect x="6" y="4" width="1" height="1" fill="#b0b0b0"/><rect x="9" y="0" width="1" height="1" fill="#1a1a1a"/><rect x="9" y="1" width="1" height="1" fill="#b0b0b0"/><rect x="9" y="3" width="1" height="1" fill="#1a1a1a"/><rect x="9" y="4" width="1" height="1" fill="#b0b0b0"/></svg>
</body></html>
